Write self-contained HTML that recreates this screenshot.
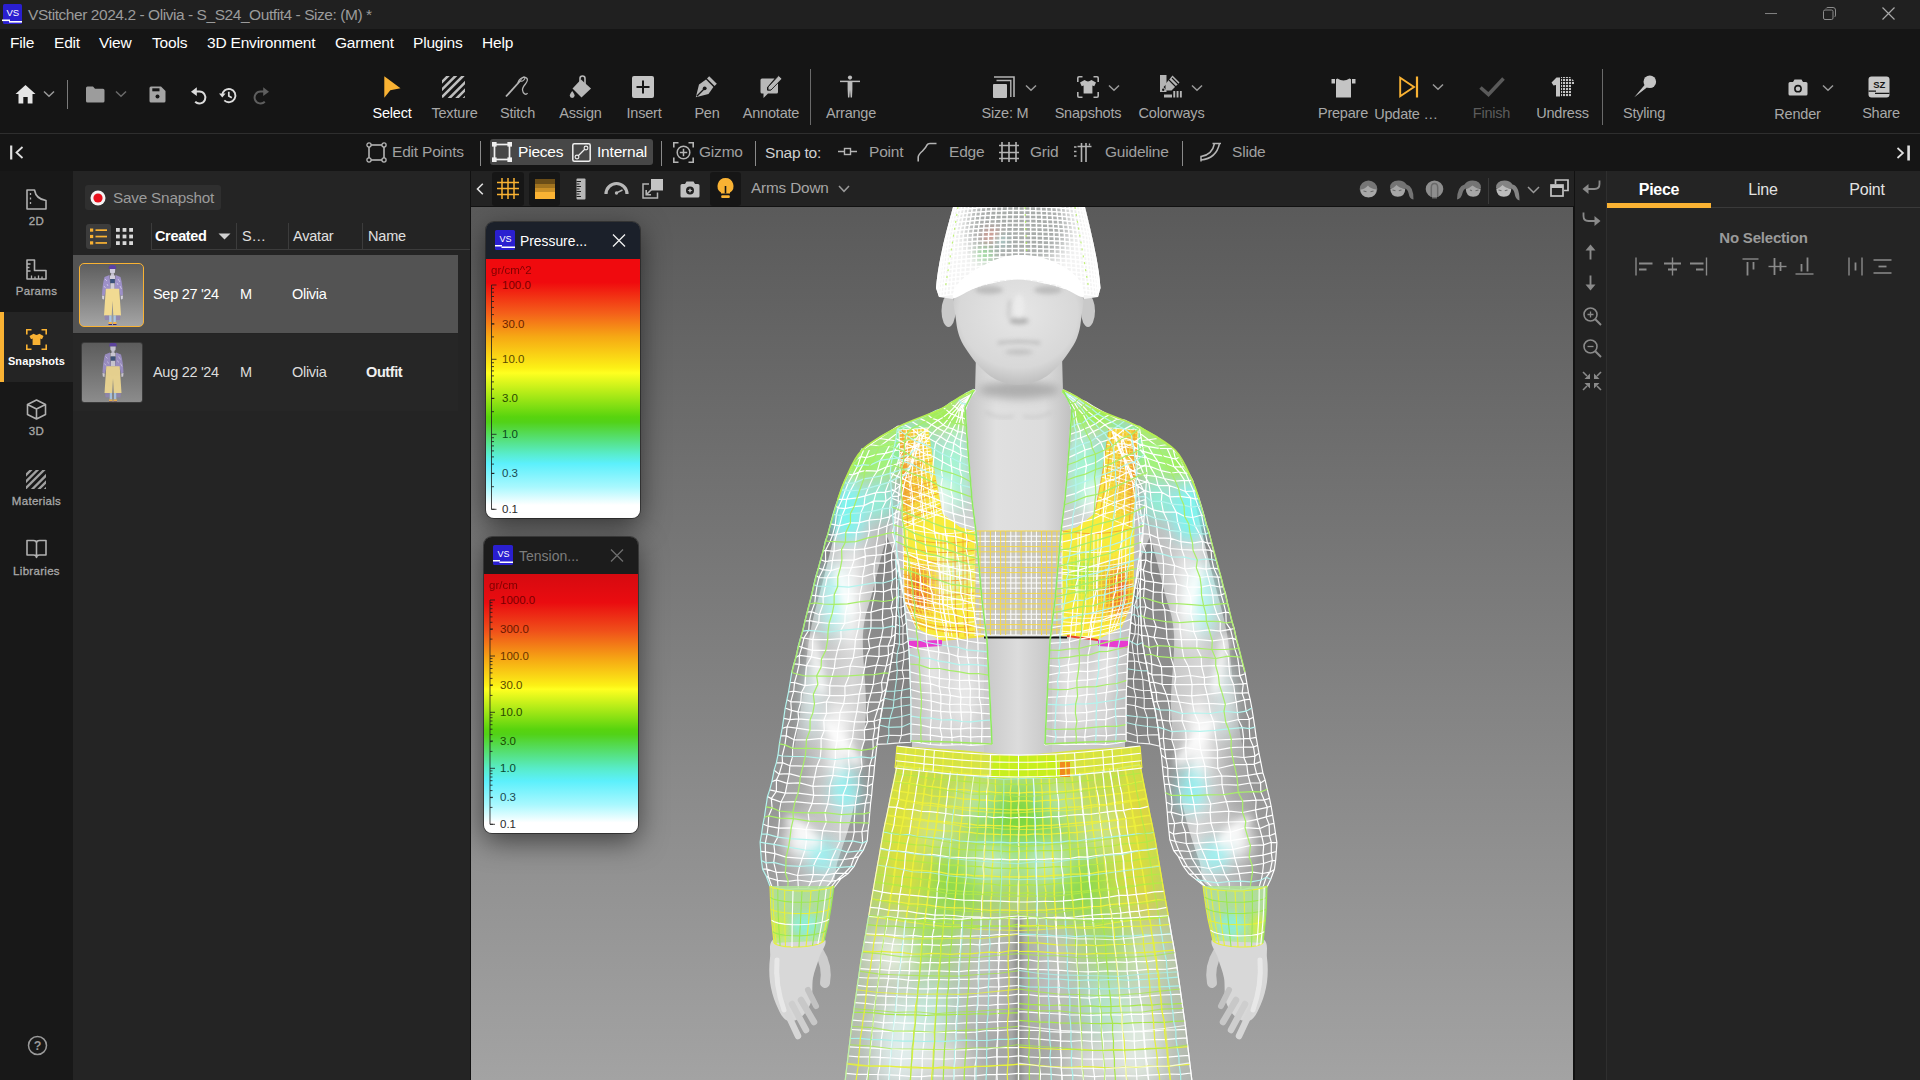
<!DOCTYPE html>
<html lang="en">
<head>
<meta charset="utf-8">
<title>VStitcher 2024.2 - Olivia - S_S24_Outfit4 - Size: (M) *</title>
<style>
*{box-sizing:border-box;margin:0;padding:0}
html,body{width:1920px;height:1080px;overflow:hidden;background:#151515;font-family:"Liberation Sans",sans-serif;color:#fff}
.abs{position:absolute}
#titlebar{position:absolute;left:0;top:0;width:1920px;height:29px;background:#202020}
#titlebar .ttl{position:absolute;left:28px;top:6px;font-size:15.5px;color:#9b9b9b;white-space:nowrap;letter-spacing:-0.44px}
#menubar{position:absolute;left:0;top:29px;width:1920px;height:29px;background:#151515}
#menubar span{position:absolute;top:5px;font-size:15.5px;color:#fff;white-space:nowrap;letter-spacing:-0.2px}
#toolbar{position:absolute;left:0;top:58px;width:1920px;height:75px;background:#151515}
.tb{position:absolute;top:47px;font-size:14.5px;color:#a8a8a8;white-space:nowrap;transform:translateX(-50%);letter-spacing:-0.2px}
.tb.on{color:#fff}
.tb.dim{color:#5c5c5c}
.vsep{position:absolute;width:1px;background:#6a6a6a}
#subbar{position:absolute;left:0;top:133px;width:1920px;height:38px;background:#151515;border-top:1px solid #2e2e2e}
.sb{position:absolute;top:9px;font-size:15.5px;color:#a0a0a0;white-space:nowrap;letter-spacing:-0.2px}
#leftbar{position:absolute;left:0;top:171px;width:73px;height:909px;background:#181818}
.lb{position:absolute;left:0;width:73px;text-align:center;font-size:11.5px;color:#a8a8a8;letter-spacing:0.3px;-webkit-text-stroke:.3px #a8a8a8}
#snap{position:absolute;left:73px;top:171px;width:397px;height:909px;background:#242424}
#view{position:absolute;left:470px;top:171px;width:1105px;height:909px;background:#111111}
#vtools{position:absolute;left:1px;top:0;width:1103px;height:35px;background:#222222}
#scene{position:absolute;left:1px;top:36px;width:1102px;height:873px;overflow:hidden}
#rstrip{position:absolute;left:1575px;top:171px;width:31px;height:909px;background:#222222}
#rpanel{position:absolute;left:1606px;top:171px;width:314px;height:909px;background:#242424;border-left:1px solid #2f2f2f}
.dlg{position:absolute;border-radius:8px;overflow:hidden;box-shadow:0 8px 28px rgba(0,0,0,.55),0 0 0 1px rgba(40,40,40,.6)}
.dt{position:absolute;left:0;top:0;width:100%}
.dg{position:absolute;left:0;width:100%}
svg{position:absolute;overflow:visible}
.rt{font-size:14.5px;color:#fff;white-space:nowrap;letter-spacing:-0.3px}
</style>
</head>
<body>
<div id="titlebar">
  <svg style="left:2px;top:4px" width="21" height="21" viewBox="0 0 21 21"><rect x="1" y="0" width="19" height="20" rx="1.5" fill="#2a1fd0"/><rect x="0" y="15.5" width="8" height="1.6" fill="#fff"/><rect x="7" y="17" width="13" height="1.6" fill="#fff"/><text x="10.8" y="12.3" font-size="9.5" font-family="Liberation Sans, sans-serif" fill="#fff" text-anchor="middle">VS</text></svg>
  <div class="ttl">VStitcher 2024.2 - Olivia - S_S24_Outfit4 - Size: (M) *</div>
  <svg style="left:1765px;top:13px" width="12" height="2" viewBox="0 0 13 2"><path d="M0 0.500 H13" stroke="#8c8c8c" stroke-width="1"/></svg>
  <svg style="left:1823px;top:7px" width="13" height="13" viewBox="0 0 13 13"><rect x="0.500" y="3" width="9.500" height="9.500" rx="1.500" fill="none" stroke="#8c8c8c" stroke-width="1"/><path d="M3 1.500 Q3.500 0.500 5 0.500 H10 Q12.500 0.500 12.500 3 V8 Q12.500 9.500 11.500 10" fill="none" stroke="#8c8c8c" stroke-width="1"/></svg>
  <svg style="left:1882px;top:7px" width="13" height="13" viewBox="0 0 13 13"><path d="M0.500 0.500 L12.500 12.500 M12.500 0.500 L0.500 12.500" stroke="#a8a8a8" stroke-width="1.200"/></svg>
</div>
<div id="menubar">
  <span style="left:10px">File</span><span style="left:54px">Edit</span><span style="left:99px">View</span><span style="left:152px">Tools</span><span style="left:207px">3D Environment</span><span style="left:335px">Garment</span><span style="left:413px">Plugins</span><span style="left:482px">Help</span>
</div>
<div id="toolbar"><!-- left small icons -->
<svg style="left:15px;top:26px" width="21" height="20" viewBox="0 0 21 20"><path d="M10.5 1 L0.5 10 H3.5 V19.5 H8.3 V13 H12.7 V19.5 H17.5 V10 H20.5 Z" fill="#e6e6e6"/></svg>
<svg style="left:43px;top:32px" width="12" height="8" viewBox="0 0 12 8"><path d="M1 1.5 L6 6.3 L11 1.5" fill="none" stroke="#9a9a9a" stroke-width="1.5"/></svg>
<div class="vsep" style="left:67px;top:22px;height:29px;background:#7a7a7a"></div>
<svg style="left:86px;top:28px" width="19" height="17" viewBox="0 0 19 17"><path d="M1.5 0.5 H7 L9 2.8 H17 Q18.5 2.8 18.5 4.3 V15 Q18.5 16.5 17 16.5 H1.5 Q0 16.5 0 15 V2 Q0 0.5 1.5 0.5 Z" fill="#9c9c9c"/></svg>
<svg style="left:115px;top:32px" width="12" height="8" viewBox="0 0 12 8"><path d="M1 1.5 L6 6.3 L11 1.5" fill="none" stroke="#6a6a6a" stroke-width="1.5"/></svg>
<svg style="left:149px;top:28px" width="17" height="17" viewBox="0 0 17 17"><path d="M2 0.5 H12 L16.5 5 V15 Q16.5 16.5 15 16.5 H2 Q0.5 16.5 0.5 15 V2 Q0.5 0.5 2 0.5 Z" fill="#a4a4a4"/><rect x="3.3" y="2.3" width="7.2" height="3" fill="#151515"/><circle cx="8.5" cy="10.5" r="2" fill="#151515"/></svg>
<svg style="left:190px;top:28px" width="18" height="19" viewBox="0 0 18 19"><path d="M4.5 5.5 H9.5 A6 6 0 1 1 5.2 15.8" fill="none" stroke="#dcdcdc" stroke-width="2"/><path d="M1 5.8 L6.8 1.2 V10 Z" fill="#dcdcdc"/></svg>
<svg style="left:219px;top:28px" width="19" height="19" viewBox="0 0 19 19"><path d="M3.2 9.5 A6.6 6.6 0 1 1 5.3 14.4" fill="none" stroke="#dcdcdc" stroke-width="1.9"/><path d="M0 7.4 H6.6 L3.3 11.6 Z" fill="#dcdcdc"/><path d="M9.8 5.8 V10 L12.8 11.8" fill="none" stroke="#dcdcdc" stroke-width="1.7"/></svg>
<svg style="left:252px;top:28px" width="18" height="19" viewBox="0 0 18 19"><path d="M13.5 5.5 H8.5 A6 6 0 1 0 12.8 15.8" fill="none" stroke="#5e5e5e" stroke-width="2"/><path d="M17 5.8 L11.2 1.2 V10 Z" fill="#5e5e5e"/></svg>

<!-- Select -->
<svg style="left:384px;top:18px" width="17" height="22" viewBox="0 0 17 22"><path d="M0.3 0.3 L16.5 12.2 L6.3 14.3 L0.3 21.7 Z" fill="#f9b233"/></svg>
<div class="tb on" style="left:392px">Select</div>
<!-- Texture -->
<svg style="left:442px;top:18px" width="23" height="22" viewBox="0 0 23 22"><defs><clipPath id="txc"><rect x="0" y="0" width="23" height="22" rx="1"/></clipPath></defs><g clip-path="url(#txc)" stroke="#bdbdbd" stroke-width="2.6"><path d="M-2 8 L8 -2 M-2 15.5 L15.5 -2 M-2 23 L23 -2 M5.5 24 L25 4.5 M13 24 L25 12 M20.5 24 L25 19.5"/></g></svg>
<div class="tb" style="left:454.5px">Texture</div>
<!-- Stitch -->
<svg style="left:505px;top:18px" width="24" height="22" viewBox="0 0 24 22"><path d="M1 20.5 L15.5 4.5" stroke="#b4b4b4" stroke-width="1.8" fill="none"/><path d="M13 7 C14 1.5 20 0 22 2.5 C24.5 6 17 9.5 17.5 14 C18 18 21 19.5 22.5 17" stroke="#b4b4b4" stroke-width="1.3" fill="none"/><ellipse cx="17.8" cy="3.2" rx="2.6" ry="1.3" transform="rotate(-45 17.8 3.2)" fill="none" stroke="#b4b4b4" stroke-width="1"/></svg>
<div class="tb" style="left:517.5px">Stitch</div>
<!-- Assign -->
<svg style="left:569px;top:17px" width="23" height="24" viewBox="0 0 23 24"><path d="M11 9 V3.5 A2.5 2.5 0 0 1 16 3.5 V9" fill="none" stroke="#b8b8b8" stroke-width="1.6"/><path d="M12 4.5 L22 13.5 L12.5 22.5 L3.5 13.5 Z" fill="#b8b8b8"/><path d="M3.2 16 C1.5 18.3 0.8 19.5 0.8 20.6 A2.4 2.4 0 0 0 5.6 20.6 C5.6 19.5 4.9 18.3 3.2 16 Z" fill="#b8b8b8"/></svg>
<div class="tb" style="left:580.5px">Assign</div>
<!-- Insert -->
<svg style="left:632px;top:18px" width="22" height="22" viewBox="0 0 22 22"><rect x="0" y="0" width="22" height="22" rx="2" fill="#c4c4c4"/><path d="M11 4.5 V17.5 M4.5 11 H17.5" stroke="#151515" stroke-width="2"/></svg>
<div class="tb" style="left:644px">Insert</div>
<!-- Pen -->
<svg style="left:695px;top:17px" width="23" height="24" viewBox="0 0 23 24"><path d="M14.2 1.2 L21.8 8.8 L19.6 11 L12 3.4 Z" fill="#b8b8b8"/><path d="M11 4.6 L18.4 12 L13.5 19 L0.8 22.2 L4 9.5 Z" fill="#b8b8b8"/><path d="M1.8 21.2 L8.8 14.2" stroke="#151515" stroke-width="1.3"/><circle cx="9.7" cy="13.3" r="1.9" fill="#151515"/></svg>
<div class="tb" style="left:707px">Pen</div>
<!-- Annotate -->
<svg style="left:760px;top:17px" width="23" height="24" viewBox="0 0 23 24"><path d="M2 3.5 H14.5 L7 12.5 V15.5 H10.5 L18 7 V17 Q18 18.5 16.5 18.5 H8 L3.5 23 V18.5 H2 Q0.5 18.5 0.5 17 V5 Q0.5 3.5 2 3.5 Z" fill="#b8b8b8"/><path d="M18.7 0.5 L22 3.8 L11 15 H8 V12 Z" fill="#b8b8b8" stroke="#151515" stroke-width="0.9"/></svg>
<div class="tb" style="left:771px">Annotate</div>
<div class="vsep" style="left:810px;top:11px;height:56px"></div>
<!-- Arrange -->
<svg style="left:839px;top:17px" width="22" height="24" viewBox="0 0 22 24"><circle cx="11" cy="2.6" r="2.1" fill="#bcbcbc"/><path d="M1 6.4 H21" stroke="#bcbcbc" stroke-width="1.5"/><path d="M8.6 6.4 H13.4 V14 L13 22.5 H11.6 L11 15 L10.4 22.5 H9 L8.6 14 Z" fill="#bcbcbc"/></svg>
<div class="tb" style="left:851px">Arrange</div>

<!-- Size -->
<svg style="left:993px;top:18px" width="22" height="22" viewBox="0 0 22 22"><path d="M1 1 H21 V21" fill="none" stroke="#b4b4b4" stroke-width="1.6"/><path d="M3.5 4.5 H17.8 V21" fill="none" stroke="#b4b4b4" stroke-width="1.4"/><rect x="0" y="8" width="14" height="14" rx="1" fill="#c0c0c0"/></svg>
<svg style="left:1025px;top:26px" width="12" height="8" viewBox="0 0 12 8"><path d="M1 1.5 L6 6.3 L11 1.5" fill="none" stroke="#9a9a9a" stroke-width="1.5"/></svg>
<div class="tb" style="left:1005px">Size: M</div>
<!-- Snapshots -->
<svg style="left:1077px;top:18px" width="22" height="22" viewBox="0 0 22 22"><path d="M0.8 6 V2 Q0.8 0.8 2 0.8 H5.5 M16.5 0.8 H20 Q21.2 0.8 21.2 2 V6 M21.2 16 V20 Q21.2 21.2 20 21.2 H16.5 M5.5 21.2 H2 Q0.8 21.2 0.8 20 V16" fill="none" stroke="#b4b4b4" stroke-width="1.6"/><path d="M7.6 4 Q11 6.8 14.4 4 L19 6.5 L17.3 10.2 L15.4 9.4 V17.5 H6.6 V9.4 L4.7 10.2 L3 6.5 Z" fill="#c0c0c0"/></svg>
<svg style="left:1108px;top:26px" width="12" height="8" viewBox="0 0 12 8"><path d="M1 1.5 L6 6.3 L11 1.5" fill="none" stroke="#9a9a9a" stroke-width="1.5"/></svg>
<div class="tb" style="left:1088px">Snapshots</div>
<!-- Colorways -->
<svg style="left:1159px;top:16px" width="24" height="24" viewBox="0 0 24 24"><path d="M1 1 H7.5 V10 L4.5 13 L7.5 16.5 V18 H1 Z" fill="#b4b4b4"/><path d="M13.5 1.5 L20.5 8.5 L12.5 16.5 H6.5 V10 Z" fill="#b4b4b4"/><path d="M10 6 L17 13 M13 4 L19 10" stroke="#151515" stroke-width="1.1"/><circle cx="4.2" cy="15.8" r="1.2" fill="#151515"/><path d="M5 20.5 H13 V23.5 H5 Z M14.3 17 H16.2 V23.5 H14.3 Z M17.6 17 H19.5 V23.5 H17.6 Z M20.9 17 H22.8 V23.5 H20.9 Z" fill="#b4b4b4"/></svg>
<svg style="left:1191px;top:26px" width="12" height="8" viewBox="0 0 12 8"><path d="M1 1.5 L6 6.3 L11 1.5" fill="none" stroke="#9a9a9a" stroke-width="1.5"/></svg>
<div class="tb" style="left:1171.5px">Colorways</div>

<!-- Prepare -->
<svg style="left:1331px;top:20px" width="25" height="20" viewBox="0 0 25 20"><path d="M6.5 0.5 Q12.5 4.5 18.5 0.5 L20 1.2 V19.5 H5 V1.2 Z" fill="#c4c4c4"/><path d="M0.5 1 H4 V5.5 H0.5 Z M21 1 H24.5 V5.5 H21 Z" fill="#c4c4c4"/></svg>
<div class="tb" style="left:1343px">Prepare</div>
<!-- Update -->
<svg style="left:1399px;top:18px" width="20" height="22" viewBox="0 0 20 22"><path d="M1.2 1.8 L15 11 L1.2 20.2 Z" fill="none" stroke="#f9b233" stroke-width="1.9" stroke-linejoin="miter"/><path d="M18 0.5 V21.5" stroke="#f9b233" stroke-width="2.2"/></svg>
<svg style="left:1432px;top:25px" width="12" height="8" viewBox="0 0 12 8"><path d="M1 1.5 L6 6.3 L11 1.5" fill="none" stroke="#9a9a9a" stroke-width="1.5"/></svg>
<div class="tb" style="left:1406px;top:48px">Update …</div>
<!-- Finish -->
<svg style="left:1479px;top:19px" width="26" height="20" viewBox="0 0 26 20"><path d="M1.5 10.5 L9.5 17.5 L24.5 1.5" fill="none" stroke="#5a5a5a" stroke-width="3.6"/></svg>
<div class="tb dim" style="left:1491.5px">Finish</div>
<!-- Undress -->
<svg style="left:1551px;top:18px" width="24" height="22" viewBox="0 0 24 22"><defs><pattern id="udp" width="3" height="3" patternUnits="userSpaceOnUse"><rect width="2.1" height="2.1" fill="#c4c4c4"/></pattern></defs><path d="M0.5 6.5 L5.5 1.5 H9 V20.5 H5 V9 L2.5 9.5 Z" fill="#c4c4c4"/><path d="M10 1 H19 L23 5 V8 H20 V21 H10 Z" fill="url(#udp)"/></svg>
<div class="tb" style="left:1562.5px">Undress</div>
<div class="vsep" style="left:1602px;top:11px;height:56px"></div>
<!-- Styling -->
<svg style="left:1634px;top:17px" width="23" height="23" viewBox="0 0 23 23"><circle cx="15.8" cy="6.8" r="6.3" fill="#c4c4c4"/><path d="M0.3 22.3 L11 9.5 L13.5 12 Z" fill="#c4c4c4"/></svg>
<div class="tb" style="left:1644px">Styling</div>
<!-- Render -->
<svg style="left:1788px;top:21px" width="20" height="17" viewBox="0 0 20 17"><path d="M6.5 0.5 H13.5 L15 3 H18 Q19.5 3 19.5 4.5 V15 Q19.5 16.5 18 16.5 H2 Q0.5 16.5 0.5 15 V4.5 Q0.5 3 2 3 H5 Z" fill="#c4c4c4"/><circle cx="10" cy="9.7" r="3.9" fill="#151515"/><circle cx="10" cy="9.7" r="2.3" fill="#c4c4c4"/></svg>
<svg style="left:1822px;top:26px" width="12" height="8" viewBox="0 0 12 8"><path d="M1 1.5 L6 6.3 L11 1.5" fill="none" stroke="#9a9a9a" stroke-width="1.5"/></svg>
<div class="tb" style="left:1797.5px;top:48px">Render</div>
<!-- Share -->
<svg style="left:1868px;top:18px" width="22" height="22" viewBox="0 0 22 22"><rect x="0.5" y="0.5" width="21" height="21" rx="3" fill="#c8c8c8"/><path d="M0.5 15.2 H8 M7 17.3 H21.5" stroke="#151515" stroke-width="1.2"/><text x="11.3" y="12.2" font-size="9.5" font-weight="bold" font-family="Liberation Sans, sans-serif" fill="#151515" text-anchor="middle">SZ</text></svg>
<div class="tb" style="left:1881px">Share</div>
</div>
<div id="subbar"><svg style="left:10px;top:11px" width="15" height="15" viewBox="0 0 15 15"><path d="M1.2 0.5 V14.5" stroke="#e0e0e0" stroke-width="2.2"/><path d="M12.5 2 L6.5 7.5 L12.5 13" fill="none" stroke="#e0e0e0" stroke-width="1.8"/></svg>
<!-- Edit points -->
<svg style="left:366px;top:8px" width="21" height="21" viewBox="0 0 21 21"><rect x="3" y="3" width="15" height="15" fill="none" stroke="#b4b4b4" stroke-width="1.6"/><g fill="#151515" stroke="#b4b4b4" stroke-width="1.3"><circle cx="3" cy="3" r="2.1"/><circle cx="18" cy="3" r="2.1"/><circle cx="3" cy="18" r="2.1"/><circle cx="18" cy="18" r="2.1"/></g></svg>
<div class="sb" style="left:392px">Edit Points</div>
<div class="vsep" style="left:480px;top:7px;height:25px;background:#8a8a8a"></div>
<div class="abs" style="left:490px;top:5px;width:163px;height:26px;background:#474747;border-radius:3px"></div>
<svg style="left:492px;top:8px" width="20" height="20" viewBox="0 0 20 20"><rect x="2.5" y="2.5" width="15" height="15" fill="none" stroke="#f0f0f0" stroke-width="1.7"/><g fill="#f0f0f0"><rect x="0" y="0" width="4.6" height="4.6"/><rect x="15.4" y="0" width="4.6" height="4.6"/><rect x="0" y="15.4" width="4.6" height="4.6"/><rect x="15.4" y="15.4" width="4.6" height="4.6"/></g></svg>
<div class="sb" style="left:518px;color:#fff">Pieces</div>
<svg style="left:572px;top:9px" width="19" height="19" viewBox="0 0 19 19"><rect x="0.8" y="0.8" width="17.4" height="17.4" rx="1.5" fill="none" stroke="#f0f0f0" stroke-width="1.5"/><path d="M5 14 L14 5" stroke="#f0f0f0" stroke-width="1.3"/><circle cx="5" cy="14" r="1.9" fill="#474747" stroke="#f0f0f0" stroke-width="1.1"/><circle cx="14" cy="5" r="1.9" fill="#474747" stroke="#f0f0f0" stroke-width="1.1"/></svg>
<div class="sb" style="left:597px;color:#fff">Internal</div>
<div class="vsep" style="left:661px;top:7px;height:25px;background:#8a8a8a"></div>
<!-- Gizmo -->
<svg style="left:673px;top:8px" width="21" height="21" viewBox="0 0 21 21"><path d="M0.8 5.5 V0.8 H5.5 M15.5 0.8 H20.2 V5.5 M20.2 15.5 V20.2 H15.5 M5.5 20.2 H0.8 V15.5" fill="none" stroke="#b4b4b4" stroke-width="1.6"/><circle cx="10.5" cy="10.5" r="6.3" fill="none" stroke="#b4b4b4" stroke-width="1.5"/><path d="M10.5 6.8 V14.2 M6.8 10.5 H14.2" stroke="#b4b4b4" stroke-width="1.5"/></svg>
<div class="sb" style="left:699px">Gizmo</div>
<div class="vsep" style="left:755px;top:7px;height:25px;background:#8a8a8a"></div>
<div class="sb" style="left:765px;top:10px;color:#d0d0d0">Snap to:</div>
<svg style="left:838px;top:13px" width="19" height="9" viewBox="0 0 19 9"><path d="M0 4.5 H6 M13 4.5 H19" stroke="#b4b4b4" stroke-width="1.5"/><rect x="6.5" y="1.5" width="6" height="6" fill="none" stroke="#b4b4b4" stroke-width="1.4"/></svg>
<div class="sb" style="left:869px">Point</div>
<svg style="left:917px;top:8px" width="20" height="20" viewBox="0 0 20 20"><path d="M1.200 19.500 V15 Q1.500 12.500 5.500 9 Q9 5.500 10 3 Q10.800 1.500 13 1.500 H19.500" fill="none" stroke="#b4b4b4" stroke-width="1.600"/></svg>
<div class="sb" style="left:949px">Edge</div>
<svg style="left:999px;top:8px" width="20" height="20" viewBox="0 0 20 20"><path d="M3 0 V20 M10 0 V20 M17 0 V20 M0 3.500 H20 M0 10.500 H20 M0 16.500 H20" stroke="#b4b4b4" stroke-width="1.600"/></svg>
<div class="sb" style="left:1030px">Grid</div>
<svg style="left:1074px;top:9px" width="18" height="19" viewBox="0 0 18 19"><path d="M7.500 0 V19 M12 0 V19 M3.500 3.500 H17.500" stroke="#b4b4b4" stroke-width="1.600" fill="none"/><path d="M0 4 H2.500 M0 8.500 H2.500 M0 13 H2.500 M15.500 0.500 V2.500" stroke="#b4b4b4" stroke-width="1.300"/></svg>
<div class="sb" style="left:1105px">Guideline</div>
<div class="vsep" style="left:1182px;top:7px;height:25px;background:#8a8a8a"></div>
<svg style="left:1200px;top:8px" width="21" height="20" viewBox="0 0 21 20"><path d="M1 19.5 V14.5 C8 13.5 13 9 14.5 1.5 M1 18 C11 17 17.5 11 19.5 1.5 M12.5 1.5 H21" fill="none" stroke="#b4b4b4" stroke-width="1.5"/></svg>
<div class="sb" style="left:1232px">Slide</div>
<svg style="left:1896px;top:11px" width="15" height="16" viewBox="0 0 15 16"><path d="M12.6 0.5 V15.5" stroke="#e0e0e0" stroke-width="2.6"/><path d="M1.5 3 L7 8 L1.5 13" fill="none" stroke="#e0e0e0" stroke-width="1.7"/></svg>
</div>
<div id="leftbar"><!-- 2D -->
<svg style="left:26px;top:18px" width="21" height="21" viewBox="0 0 21 21"><path d="M1 1 H8.5 C9.5 7 13 10.5 20 11.5 V20 H1 Z" fill="none" stroke="#b0b0b0" stroke-width="1.6" stroke-linejoin="round"/><path d="M4.5 4 V6 M4.5 8.5 V10.5 M4.5 13 V15" stroke="#b0b0b0" stroke-width="1.3"/></svg>
<div class="lb" style="top:44px">2D</div>
<!-- Params -->
<svg style="left:26px;top:88px" width="21" height="21" viewBox="0 0 21 21"><path d="M1 1 H8.5 V11.5 H20 V20 H1 Z" fill="none" stroke="#b0b0b0" stroke-width="1.6" stroke-linejoin="round"/><path d="M1 5 H4.5 M1 8.5 H3.5 M1 12 H4.5 M5.5 20 V16.5 M9 20 V17.5 M12.5 20 V16.5 M16 20 V17.5" stroke="#b0b0b0" stroke-width="1.3"/></svg>
<div class="lb" style="top:114px">Params</div>
<!-- Snapshots active -->
<div class="abs" style="left:0;top:141px;width:73px;height:70px;background:#242424"></div>
<div class="abs" style="left:0;top:141px;width:4px;height:70px;background:#f9b233"></div>
<svg style="left:26px;top:158px" width="21" height="21" viewBox="0 0 21 21"><path d="M0.8 5.5 V0.8 H5.5 M15.5 0.8 H20.2 V5.5 M20.2 15.5 V20.2 H15.5 M5.5 20.2 H0.8 V15.5" fill="none" stroke="#f9b233" stroke-width="1.6"/><path d="M7.6 4.8 Q10.5 7 13.4 4.8 L17.5 7 L16 10.2 L14.4 9.5 V16 H6.6 V9.5 L5 10.2 L3.5 7 Z" fill="#f9b233"/></svg>
<div class="lb" style="top:184px;color:#fff;font-weight:bold;letter-spacing:0.1px;font-size:11px;-webkit-text-stroke:0">Snapshots</div>
<!-- 3D -->
<svg style="left:26px;top:228px" width="21" height="21" viewBox="0 0 21 21"><path d="M10.5 1 L19.5 5.5 V15.5 L10.5 20 L1.5 15.5 V5.5 Z M1.5 5.5 L10.5 10 L19.5 5.5 M10.5 10 V20" fill="none" stroke="#b0b0b0" stroke-width="1.6" stroke-linejoin="round"/></svg>
<div class="lb" style="top:254px">3D</div>
<!-- Materials -->
<svg style="left:26px;top:299px" width="20" height="19" viewBox="0 0 20 19"><defs><clipPath id="mtc"><rect x="0" y="0" width="20" height="19"/></clipPath></defs><g clip-path="url(#mtc)" stroke="#a0a0a0" stroke-width="2.3"><path d="M-2 7 L7 -2 M-2 13.5 L13.5 -2 M-2 20 L20 -2 M4.5 21 L22 3.5 M11 21 L22 10 M17.5 21 L22 16.5"/></g></svg>
<div class="lb" style="top:324px">Materials</div>
<!-- Libraries -->
<svg style="left:26px;top:368px" width="21" height="20" viewBox="0 0 21 20"><path d="M1 1.5 H7.5 Q10.5 1.5 10.5 4 Q10.5 1.5 13.5 1.5 H20 V16 H13.5 Q10.5 16 10.5 18.5 Q10.5 16 7.5 16 H1 Z M10.5 4 V18.5" fill="none" stroke="#b0b0b0" stroke-width="1.6" stroke-linejoin="round"/></svg>
<div class="lb" style="top:394px">Libraries</div>
<!-- help -->
<svg style="left:27px;top:864px" width="21" height="21" viewBox="0 0 21 21"><circle cx="10.5" cy="10.5" r="9" fill="none" stroke="#9a9a9a" stroke-width="1.5"/><text x="10.5" y="15" font-size="12.5" font-family="Liberation Sans, sans-serif" fill="#9a9a9a" text-anchor="middle" font-weight="bold">?</text></svg>
</div>
<div id="snap"><div class="abs" style="left:12px;top:14px;width:136px;height:25px;background:#2f2f2f;border-radius:3px"></div>
<svg style="left:17px;top:19px" width="16" height="16" viewBox="0 0 16 16"><circle cx="8" cy="8" r="7.5" fill="#f4f4f4"/><circle cx="8" cy="8" r="4.6" fill="#e8101c"/></svg>
<div class="abs" style="left:40px;top:18px;font-size:15.3px;color:#9c9c9c;white-space:nowrap;letter-spacing:-0.2px">Save Snapshot</div>
<div class="abs" style="left:13px;top:53px;width:25px;height:25px;background:#3c3c3c;border-radius:3px"></div>
<svg style="left:17px;top:57px" width="17" height="17" viewBox="0 0 17 17"><g fill="#f9b233"><rect x="0" y="0.5" width="3.2" height="3.2"/><rect x="0" y="6.9" width="3.2" height="3.2"/><rect x="0" y="13.3" width="3.2" height="3.2"/><rect x="5.5" y="1.3" width="11.5" height="1.7"/><rect x="5.5" y="7.7" width="11.5" height="1.7"/><rect x="5.5" y="14.1" width="11.5" height="1.7"/></g></svg>
<svg style="left:43px;top:57px" width="17" height="17" viewBox="0 0 17 17"><g fill="#d8d8d8"><rect x="0" y="0" width="3.8" height="3.8"/><rect x="6.6" y="0" width="3.8" height="3.8"/><rect x="13.2" y="0" width="3.8" height="3.8"/><rect x="0" y="6.6" width="3.8" height="3.8"/><rect x="6.6" y="6.6" width="3.8" height="3.8"/><rect x="13.2" y="6.6" width="3.8" height="3.8"/><rect x="0" y="13.2" width="3.8" height="3.8"/><rect x="6.6" y="13.2" width="3.8" height="3.8"/><rect x="13.2" y="13.2" width="3.8" height="3.8"/></g></svg>
<!-- header -->
<div class="abs" style="left:78px;top:52px;width:1px;height:27px;background:#3c3c3c"></div>
<div class="abs" style="left:163px;top:52px;width:1px;height:27px;background:#3c3c3c"></div>
<div class="abs" style="left:215px;top:52px;width:1px;height:27px;background:#3c3c3c"></div>
<div class="abs" style="left:289px;top:52px;width:1px;height:27px;background:#3c3c3c"></div>
<div class="abs" style="left:78px;top:78px;width:319px;height:1px;background:#3c3c3c"></div>
<div class="abs" style="left:82px;top:57px;font-size:14.5px;font-weight:bold;color:#fff;letter-spacing:-0.35px">Created</div>
<svg style="left:145px;top:62px" width="13" height="7" viewBox="0 0 13 7"><path d="M0.5 0.5 H12.5 L6.5 6.5 Z" fill="#d0d0d0"/></svg>
<div class="abs" style="left:169px;top:57px;font-size:14.5px;color:#e0e0e0;letter-spacing:-0.2px">S…</div>
<div class="abs" style="left:220px;top:57px;font-size:14.5px;color:#e0e0e0;letter-spacing:-0.2px">Avatar</div>
<div class="abs" style="left:295px;top:57px;font-size:14.5px;color:#e0e0e0;letter-spacing:-0.2px">Name</div>
<!-- row 1 -->
<div class="abs" style="left:0;top:84px;width:385px;height:78px;background:#535353"></div>
<div class="abs" id="th1" style="left:6px;top:92px;width:65px;height:64px;border:1.5px solid #f9b233;border-radius:5px;background:linear-gradient(#5e5e5e,#a4a4a4);overflow:hidden"><svg style="left:0;top:0" width="65" height="64" viewBox="0 0 65 64" opacity="1"><path d="M29 2.200 Q32.500 0 36 2.200 L36.300 5 H28.700Z" fill="#5b40a4"/><path d="M29.800 5 H35.200 L35 8.500 Q32.500 11 30 8.500Z" fill="#cfcbdc"/><path d="M31 9.500 H34 V12 H31Z" fill="#c4c0d0"/><path d="M29.500 11 L24.500 13 Q22.500 20 22 31 L24.500 32 L26 25 L26.500 26.500 H30.500 Z M35.500 11 L40.500 13 Q42.500 20 43 31 L40.500 32 L39 25 L38.500 26.500 H34.500 Z" fill="#9d90c8"/><path d="M25 15 L27 17 M38 15 L40 18 M24 22 L25.500 24 M40 22 L41.500 25 M27 20 L28 22 M37 19 L38 21" stroke="#c9c0e4" stroke-width="1"/><path d="M30 11.500 H35 V15 H30Z" fill="#d4d0dc"/><path d="M30.300 15 H34.700 V19.300 H30.300Z" fill="#39507c"/><path d="M30.500 19.300 H34.500 V25 H30.500Z" fill="#d0ccd8"/><path d="M22 31.500 L24.300 32 L24 35.500 L22.300 35Z M43 31.500 L40.700 32 L41 35.500 L42.700 35Z" fill="#d4d0dc"/><path d="M25.800 24.800 H39.200 L41 51.500 H33.300 L32.500 37 L31.700 51.500 H24Z" fill="#f1da92"/><path d="M24.500 51.500 H29 V56 H25Z M36 51.500 H40.500 L40 56 H36Z" fill="#8f84b4" opacity=".85"/><path d="M29.200 51.500 H31.500 V58 H29.200Z M33.500 51.500 H35.800 V58 H33.500Z" fill="#a9c4e4"/><path d="M28.500 58 H32 V60 H28.500Z M33 58 H36.500 V60 H33Z" fill="#f0b24a"/><path d="M28.500 60 H32 V61 H28.500Z M33 60 H36.500 V61 H33Z" fill="#3a2a70"/></svg></div>
<div class="abs rt" style="left:80px;top:115px">Sep 27 '24</div>
<div class="abs rt" style="left:167px;top:115px">M</div>
<div class="abs rt" style="left:219px;top:115px">Olivia</div>
<!-- row 2 -->
<div class="abs" style="left:0;top:163px;width:385px;height:77px;background:#262626"></div>
<div class="abs" id="th2" style="left:8px;top:171px;width:62px;height:61px;border:1px solid #3a3a3a;border-radius:3px;background:linear-gradient(#5c5c5c,#8c8c8c);overflow:hidden"><svg style="left:0;top:0" width="62" height="61" viewBox="1.5 1.5 62 61" opacity="0.9"><path d="M29 2.200 Q32.500 0 36 2.200 L36.300 5 H28.700Z" fill="#5b40a4"/><path d="M29.800 5 H35.200 L35 8.500 Q32.500 11 30 8.500Z" fill="#cfcbdc"/><path d="M31 9.500 H34 V12 H31Z" fill="#c4c0d0"/><path d="M29.500 11 L24.500 13 Q22.500 20 22 31 L24.500 32 L26 25 L26.500 26.500 H30.500 Z M35.500 11 L40.500 13 Q42.500 20 43 31 L40.500 32 L39 25 L38.500 26.500 H34.500 Z" fill="#9d90c8"/><path d="M25 15 L27 17 M38 15 L40 18 M24 22 L25.500 24 M40 22 L41.500 25 M27 20 L28 22 M37 19 L38 21" stroke="#c9c0e4" stroke-width="1"/><path d="M30 11.500 H35 V15 H30Z" fill="#d4d0dc"/><path d="M30.300 15 H34.700 V19.300 H30.300Z" fill="#39507c"/><path d="M30.500 19.300 H34.500 V25 H30.500Z" fill="#d0ccd8"/><path d="M22 31.500 L24.300 32 L24 35.500 L22.300 35Z M43 31.500 L40.700 32 L41 35.500 L42.700 35Z" fill="#d4d0dc"/><path d="M25.800 24.800 H39.200 L41 51.500 H33.300 L32.500 37 L31.700 51.500 H24Z" fill="#f1da92"/><path d="M24.500 51.500 H29 V56 H25Z M36 51.500 H40.500 L40 56 H36Z" fill="#8f84b4" opacity=".85"/><path d="M29.200 51.500 H31.500 V58 H29.200Z M33.500 51.500 H35.800 V58 H33.500Z" fill="#a9c4e4"/><path d="M28.500 58 H32 V60 H28.500Z M33 58 H36.500 V60 H33Z" fill="#f0b24a"/><path d="M28.500 60 H32 V61 H28.500Z M33 60 H36.500 V61 H33Z" fill="#3a2a70"/></svg></div>
<div class="abs rt" style="left:80px;top:193px;color:#dcdcdc">Aug 22 '24</div>
<div class="abs rt" style="left:167px;top:193px;color:#dcdcdc">M</div>
<div class="abs rt" style="left:219px;top:193px;color:#dcdcdc">Olivia</div>
<div class="abs rt" style="left:293px;top:193px;font-weight:bold;color:#f0f0f0;letter-spacing:-0.4px">Outfit</div>
</div>
<div id="view">
  <div id="vtools"><svg style="left:5px;top:12px" width="8" height="12" viewBox="0 0 8 12"><path d="M6.8 0.8 L1.5 6 L6.8 11.2" fill="none" stroke="#e0e0e0" stroke-width="1.6"/></svg>
<div class="abs" style="left:21px;top:1px;width:32px;height:34px;background:#161616;border-radius:3px"></div>
<svg style="left:26px;top:7px" width="22" height="21" viewBox="0 0 22 21"><path d="M5 0 V21 M11 0 V21 M17 0 V21 M0 4.5 H22 M0 10.5 H22 M0 16.5 H22" stroke="#f9b233" stroke-width="1.5"/></svg>
<div class="abs" style="left:58px;top:1px;width:31px;height:34px;background:#161616;border-radius:3px"></div>
<svg style="left:64px;top:8px" width="20" height="20" viewBox="0 0 20 20"><rect x="0" y="0" width="20" height="5" fill="#6b4d17"/><rect x="0" y="5" width="20" height="4" fill="#a1731f"/><rect x="0" y="9" width="20" height="4" fill="#c98f27"/><rect x="0" y="13" width="20" height="7" fill="#f9b233"/></svg>
<svg style="left:105px;top:7px" width="10" height="22" viewBox="0 0 10 22"><rect x="0.5" y="0.5" width="9" height="21" rx="1" fill="#b8b8b8"/><path d="M0.5 3.5 H5 M0.5 6 H3.5 M0.5 8.5 H5 M0.5 11 H3.5 M0.5 13.5 H5 M0.5 16 H3.5 M0.5 18.5 H5" stroke="#1f1f1f" stroke-width="1"/></svg>
<svg style="left:133px;top:10px" width="25" height="14" viewBox="0 0 25 14"><path d="M2 13 A10.5 10.5 0 0 1 23 13" fill="none" stroke="#b8b8b8" stroke-width="3.2"/><path d="M12 12.2 L18.5 9" stroke="#b8b8b8" stroke-width="1.5"/><circle cx="12.5" cy="12" r="1.7" fill="#b8b8b8"/></svg>
<svg style="left:171px;top:8px" width="21" height="20" viewBox="0 0 21 20"><rect x="9" y="0" width="12" height="11.5" fill="#c4c4c4"/><path d="M7 5 H1 V19 H15.5 V13.5" fill="none" stroke="#b4b4b4" stroke-width="1.5"/><path d="M9.5 10.5 L4.5 15.5 M4.2 11 V15.8 H9" fill="none" stroke="#b4b4b4" stroke-width="1.6"/></svg>
<svg style="left:209px;top:10px" width="20" height="17" viewBox="0 0 20 17"><path d="M6.5 0.5 H13.5 L15 3 H18 Q19.5 3 19.5 4.5 V15 Q19.5 16.5 18 16.5 H2 Q0.5 16.5 0.5 15 V4.5 Q0.5 3 2 3 H5 Z" fill="#c0c0c0"/><circle cx="10" cy="9.5" r="4" fill="#1f1f1f"/><path d="M10 7 L10.8 8.7 L12.5 9.5 L10.8 10.3 L10 12 L9.2 10.3 L7.5 9.5 L9.2 8.7 Z" fill="#c0c0c0"/></svg>
<div class="abs" style="left:239px;top:1px;width:31px;height:34px;background:#161616;border-radius:3px"></div>
<svg style="left:246px;top:7px" width="17" height="21" viewBox="0 0 17 21"><path d="M8.5 0 A8 8 0 0 1 13 14.6 V15.5 H4 V14.6 A8 8 0 0 1 8.5 0 Z" fill="#f9b233"/><rect x="4.2" y="17.3" width="8.6" height="2.6" rx="1" fill="#f9b233"/><path d="M8.5 8 V15.5" stroke="#161616" stroke-width="1.6"/></svg>
<div class="abs" style="left:280px;top:8px;font-size:15.3px;color:#a6a6a6;white-space:nowrap;letter-spacing:-0.15px">Arms Down</div>
<svg style="left:367px;top:14px" width="12" height="8" viewBox="0 0 12 8"><path d="M1 1 L6 6.3 L11 1" fill="none" stroke="#9a9a9a" stroke-width="1.5"/></svg>
<!-- right icons -->
<svg style="left:888px;top:9px" width="19" height="18" viewBox="0 0 19 18"><ellipse cx="9.500" cy="9" rx="8.800" ry="8.600" fill="#767676"/><path d="M1.500 9.500 Q5.500 9.500 9 5.500 Q11 8.500 17.500 9.500 Q17 17.300 9.500 17.300 Q2 17.300 1.500 9.500Z" fill="#a8a8a8"/><path d="M4.500 11 L7.500 11.800 M14.500 11 L11.500 11.800" stroke="#6a6a6a" stroke-width="1.100"/></svg>
<svg style="left:918px;top:9px" width="26" height="20" viewBox="0 0 26 20"><path d="M1 8 Q1 0.500 9.500 0.500 Q15 0.500 17.500 4.500 Q24.500 6 24.500 19.500 Q20.500 19 19.500 13 Q18.500 9 16 8.500Z" fill="#747474"/><path d="M1.200 8.500 Q4 8.800 7.500 5 Q10 8 16.300 8.800 Q16 16.800 8.800 16.800 Q1.800 16.800 1.200 8.500Z" fill="#a6a6a6"/><path d="M3.500 10 L6.500 10.800 M12.500 10 L9.800 10.800" stroke="#6a6a6a" stroke-width="1.100"/></svg>
<svg style="left:954px;top:9px" width="19" height="19" viewBox="0 0 19 19"><ellipse cx="9.500" cy="9" rx="8.800" ry="8.600" fill="#8e8e8e"/><path d="M6.300 17 V7.500 Q6.300 3.500 9.500 3.500 Q12.700 3.500 12.700 7.500 V17" fill="none" stroke="#6a6a6a" stroke-width="1.500"/><path d="M7 17 H12 V18.500 H7Z" fill="#6a6a6a"/></svg>
<svg style="left:985px;top:9px" width="26" height="20" viewBox="0 0 26 20"><path d="M25 8 Q25 0.500 16.500 0.500 Q11 0.500 8.500 4.500 Q1.500 6 1 19.500 Q5.500 18.500 6.500 13 Q7.500 9 10 8.500Z" fill="#747474"/><path d="M24.800 8.500 Q20 8.800 16.500 5.500 Q14 8 9.800 8.800 Q10 16.800 17.200 16.800 Q24.200 16.800 24.800 8.500Z" fill="#a6a6a6"/><path d="M22.500 10 L19.500 10.800 M14 10 L16 10.800" stroke="#6a6a6a" stroke-width="1.100"/></svg>
<div class="abs" style="left:1017px;top:7px;width:1px;height:26px;background:#3a3a3a"></div>
<svg style="left:1024px;top:9px" width="26" height="21" viewBox="0 0 26 21"><path d="M1 8 Q1 0.500 9.500 0.500 Q15 0.500 17.500 4.500 Q24.500 6 24.500 20.500 Q20.500 20 19.500 13 Q18.500 9 16 8.500Z" fill="#848484"/><path d="M1.200 8.500 Q4 8.800 7.500 5 Q10 8 16.300 8.800 Q16 16.800 8.800 16.800 Q1.800 16.800 1.200 8.500Z" fill="#bcbcbc"/><path d="M3.500 10 L6.500 10.800 M12.500 10 L9.800 10.800" stroke="#707070" stroke-width="1.100"/></svg>
<svg style="left:1056px;top:15px" width="13" height="8" viewBox="0 0 13 8"><path d="M1 1 L6.500 6.500 L12 1" fill="none" stroke="#9a9a9a" stroke-width="1.500"/></svg>
<svg style="left:1079px;top:8px" width="19" height="18" viewBox="0 0 19 18"><path d="M5.500 5 V1 H18 V11.500 H14" fill="none" stroke="#c4c4c4" stroke-width="1.700"/><rect x="1" y="6" width="12" height="11" fill="none" stroke="#c4c4c4" stroke-width="1.700"/><rect x="1" y="6" width="12" height="3" fill="#c4c4c4"/></svg>
</div>
  <div id="scene"><svg style="left:0;top:0" width="1102" height="873" viewBox="471 207 1102 873"><defs><linearGradient id="bg" x1="0" y1="0" x2="0" y2="1"><stop offset="0" stop-color="#5a5a5a"/><stop offset="1" stop-color="#a3a3a3"/></linearGradient>
<filter id="b4" x="-50%" y="-50%" width="200%" height="200%"><feGaussianBlur stdDeviation="4"/></filter>
<filter id="b8" x="-50%" y="-50%" width="200%" height="200%"><feGaussianBlur stdDeviation="8"/></filter>
<filter id="b14" x="-50%" y="-50%" width="200%" height="200%"><feGaussianBlur stdDeviation="14"/></filter>
<filter id="b2" x="-50%" y="-50%" width="200%" height="200%"><feGaussianBlur stdDeviation="2"/></filter>
<radialGradient id="skin" cx="0.5" cy="0.4" r="0.65"><stop offset="0" stop-color="#e6e6e6"/><stop offset="0.7" stop-color="#d8d8d8"/><stop offset="1" stop-color="#b4b4b4"/></radialGradient>
<linearGradient id="neck" x1="0" y1="0" x2="1" y2="0"><stop offset="0" stop-color="#c0c0c0"/><stop offset="0.3" stop-color="#e0e0e0"/><stop offset="0.7" stop-color="#dcdcdc"/><stop offset="1" stop-color="#b8b8b8"/></linearGradient>
<linearGradient id="gtorso" x1="0" y1="0" x2="1" y2="0"><stop offset="0" stop-color="#a8a8a8"/><stop offset="0.2" stop-color="#c8c8c8"/><stop offset="0.5" stop-color="#d0d0d0"/><stop offset="0.8" stop-color="#c4c4c4"/><stop offset="1" stop-color="#a4a4a4"/></linearGradient>
<clipPath id="cpants"><path d="M897 746 L960 750 L1018 756 L1077 750 L1140 746 L1140 765 L1147 800 L1154 834 L1165 897 L1176 960 L1185 1023 L1192 1082 L845 1082 L852 1023 L861 960 L872 897 L883 834 L890 800 L897 765Z"/></clipPath>
<linearGradient id="gpants" x1="0" y1="0" x2="0" y2="1"><stop offset="0" stop-color="#c6dc4c"/><stop offset="0.4" stop-color="#b2d868"/><stop offset="0.58" stop-color="#b6c6a6"/><stop offset="1" stop-color="#b2b6b2"/></linearGradient>
<linearGradient id="gcupL" x1="0" y1="0" x2="1" y2="0"><stop offset="0" stop-color="#f0d23c"/><stop offset="0.5" stop-color="#f4e24a"/><stop offset="1" stop-color="#eadf8a"/></linearGradient>
<linearGradient id="gslL" x1="0" y1="0" x2="1" y2="0"><stop offset="0" stop-color="#c8ccc8"/><stop offset="0.25" stop-color="#a8a8a8"/><stop offset="0.5" stop-color="#dedede"/><stop offset="0.75" stop-color="#a6a6a6"/><stop offset="1" stop-color="#bcbcbc"/></linearGradient>
<linearGradient id="garm" x1="0" y1="0" x2="1" y2="0"><stop offset="0" stop-color="#9c9c9c"/><stop offset="0.25" stop-color="#bebebe"/><stop offset="0.55" stop-color="#d6d6d6"/><stop offset="0.85" stop-color="#b0b0b0"/><stop offset="1" stop-color="#989898"/></linearGradient>
<clipPath id="cslL"><path d="M862 450 L845 480 L838 499 L826 540 L816 577 L804 625 L792 672 L784 716 L777 760 L767 800 L760 843 L762 868 L770 886 L834 886 L852 870 L867 843 L871 800 L875 762 L880 720 L886 690 L895 640 L897 600 L896 560 L898 520 L905 480 L925 432Z"/></clipPath>
<clipPath id="cslR"><path d="M1175 450 L1192 480 L1199 499 L1211 540 L1221 577 L1233 625 L1245 672 L1253 716 L1260 760 L1270 800 L1277 843 L1275 868 L1267 886 L1203 886 L1185 870 L1170 843 L1166 800 L1162 762 L1157 720 L1151 690 L1142 640 L1140 600 L1141 560 L1139 520 L1132 480 L1112 432Z"/></clipPath>
<clipPath id="cfrL"><path d="M974 390 L960 397 L939 410 L898 427 L890 470 L893 520 L898 560 L904 600 L909 650 L911 700 L911 742 L992 744 L990 700 L987 641 L982 600 L976 532 L972 500 L968 450 L965 408 L974 390Z"/></clipPath>
<clipPath id="cfrR"><path d="M1063 390 L1077 397 L1098 410 L1139 427 L1147 470 L1144 520 L1139 560 L1133 600 L1128 650 L1126 700 L1126 742 L1045 744 L1047 700 L1050 641 L1055 600 L1061 532 L1065 500 L1069 450 L1072 408 L1063 390Z"/></clipPath>
<clipPath id="cbraL"><path d="M903 528 L942 513 L960 527 L975 531 L975 636 L940 640 L916 628 L904 600Z M899 430 L928 428 L934 470 L942 513 L903 528 L900 470Z"/></clipPath>
<clipPath id="cbraR"><path d="M1134 528 L1095 513 L1077 527 L1062 531 L1062 636 L1097 640 L1121 628 L1133 600Z M1138 430 L1109 428 L1103 470 L1095 513 L1134 528 L1137 470Z"/></clipPath>
<clipPath id="ccfL"><path d="M770 886 L771 915 L774 943 L824 941 L830 915 L834 886Z"/></clipPath>
<clipPath id="ccfR"><path d="M1267 886 L1266 915 L1263 943 L1213 941 L1207 915 L1203 886Z"/></clipPath>
<clipPath id="ccap"><path d="M953 207 L1085 207 C1092 235 1099 265 1100.5 288 L1098 297 L1084 299 L1083 297 Q1060 284 1018 279 Q975 284 954 298 L953 299 L939 297 L936 288 C938 262 946 232 953 207Z"/></clipPath></defs>
<rect x="471" y="207" width="1102" height="873" fill="url(#bg)"/>
<path d="M974 390 L960 397 L939 410 L898 427 L862 450 L845 480 L838 499 L880 520 L897 560 L904 600 L909 650 L912 700 L912 760 L1125 760 L1125 700 L1128 650 L1133 600 L1140 560 L1157 520 L1199 499 L1192 480 L1175 450 L1139 427 L1098 410 L1077 397 L1063 390Z" fill="url(#gtorso)"/>
<path d="M976 355 L975 392 L960 410 L966 470 L974 532 L1060 532 L1066 470 L1080 410 L1063 392 L1062 355Z" fill="url(#neck)"/>
<ellipse cx="1019" cy="390" rx="40" ry="9" fill="#9a9a9a" filter="url(#b4)" opacity="0.7"/>
<path d="M985 412 Q1000 420 1014 416 M1052 412 Q1037 420 1023 416" stroke="#c2c2c2" stroke-width="3" fill="none" filter="url(#b2)" opacity=".6"/>
<ellipse cx="948.5" cy="311" rx="7" ry="16" fill="#c9c9c9"/><ellipse cx="1088" cy="311" rx="7" ry="16" fill="#c9c9c9"/>
<path d="M955 290 C951 298.7 955.2 312 956 320 C956.8 328 958 332.7 960 338 C962 343.3 964.8 347.3 968 352 C971.2 356.7 974.5 361.5 979 366 C983.5 370.5 988.5 375.8 995 379 C1001.5 382.2 1010.2 385 1018 385 C1025.8 385 1035.3 382.2 1042 379 C1048.7 375.8 1053.5 370.5 1058 366 C1062.5 361.5 1065.8 356.7 1069 352 C1072.2 347.3 1075 343.3 1077 338 C1079 332.7 1080.2 328 1081 320 C1081.8 312 1085.5 298.7 1082 290 C1078.5 281.3 1077 271.7 1060 268 C1043 264.3 997.5 264.3 980 268 C962.5 271.7 959 281.3 955 290Z" fill="url(#skin)"/>
<g filter="url(#b2)" opacity="0.8"><ellipse cx="989" cy="290" rx="14" ry="4" fill="#b4b4b4"/><ellipse cx="1048" cy="290" rx="14" ry="4" fill="#b4b4b4"/><ellipse cx="1019" cy="321" rx="10" ry="3.5" fill="#a8a8a8"/><path d="M998 343 Q1018 340 1040 343" stroke="#9a9a9a" stroke-width="2.2" fill="none"/><ellipse cx="1019" cy="352" rx="14" ry="3" fill="#bdbdbd"/><path d="M1010 300 Q1008 312 1009 318" stroke="#c0c0c0" stroke-width="3" fill="none"/></g>
<ellipse cx="1019" cy="306" rx="5" ry="12" fill="#eeeeee" filter="url(#b2)" opacity="0.8"/>
<linearGradient id="mid" x1="0" y1="0" x2="1" y2="0"><stop offset="0" stop-color="#c8c8c8"/><stop offset="0.5" stop-color="#dcdcdc"/><stop offset="1" stop-color="#c6c6c6"/></linearGradient>
<rect x="984" y="636" width="68" height="130" fill="url(#mid)"/>
<g stroke-linecap="round" fill="none">
<path d="M819 952 Q828 966 825 983" stroke="#cdcdcd" stroke-width="10"/>
<path d="M776 938 C767.2 941.3 771 950.7 770 958 C769 965.3 769 974.3 770 982 C771 989.7 773.3 997.7 776 1004 C778.7 1010.3 782 1017.7 786 1020 C790 1022.3 795.8 1021 800 1018 C804.2 1015 808.8 1008.7 811 1002 C813.2 995.3 811.7 985.3 813 978 C814.3 970.7 817.3 964.7 819 958 C820.7 951.3 830.2 941.3 823 938 C815.8 934.7 784.8 934.7 776 938Z" fill="#d8d8d8" stroke="none"/>
<path d="M783 1004 L798 1036" stroke="#d6d6d6" stroke-width="6.5"/>
<path d="M792 1004 L806 1030" stroke="#cecece" stroke-width="6.5"/>
<path d="M801 1000 L814 1022" stroke="#c8c8c8" stroke-width="6.5"/>
<path d="M808 990 L816 1006" stroke="#c2c2c2" stroke-width="6"/>
<path d="M777 960 Q775 985 784 1010" stroke="#ececec" stroke-width="5" opacity=".8"/>
</g>
<g stroke-linecap="round" fill="none">
<path d="M1218 952 Q1209 966 1212 983" stroke="#cdcdcd" stroke-width="10"/>
<path d="M1261 938 C1269.8 941.3 1266 950.7 1267 958 C1268 965.3 1268 974.3 1267 982 C1266 989.7 1263.7 997.7 1261 1004 C1258.3 1010.3 1255 1017.7 1251 1020 C1247 1022.3 1241.2 1021 1237 1018 C1232.8 1015 1228.2 1008.7 1226 1002 C1223.8 995.3 1225.3 985.3 1224 978 C1222.7 970.7 1219.7 964.7 1218 958 C1216.3 951.3 1206.8 941.3 1214 938 C1221.2 934.7 1252.2 934.7 1261 938Z" fill="#d8d8d8" stroke="none"/>
<path d="M1254 1004 L1239 1036" stroke="#d6d6d6" stroke-width="6.5"/>
<path d="M1245 1004 L1231 1030" stroke="#cecece" stroke-width="6.5"/>
<path d="M1236 1000 L1223 1022" stroke="#c8c8c8" stroke-width="6.5"/>
<path d="M1229 990 L1221 1006" stroke="#c2c2c2" stroke-width="6"/>
<path d="M1260 960 Q1262 985 1253 1010" stroke="#ececec" stroke-width="5" opacity=".8"/>
</g>
<g clip-path="url(#cpants)">
<path d="M897 746 L960 750 L1018 756 L1077 750 L1140 746 L1140 765 L1147 800 L1154 834 L1165 897 L1176 960 L1185 1023 L1192 1082 L845 1082 L852 1023 L861 960 L872 897 L883 834 L890 800 L897 765Z" fill="url(#gpants)"/>
<g filter="url(#b14)">
<ellipse cx="903" cy="840" rx="20" ry="75" fill="#e2e236" opacity="0.95"/>
<ellipse cx="1134" cy="840" rx="20" ry="75" fill="#e2e236" opacity="0.95"/>
<ellipse cx="1148" cy="810" rx="8" ry="30" fill="#ecc040" opacity="0.8"/>
<ellipse cx="1150" cy="900" rx="8" ry="30" fill="#ecc040" opacity="0.8"/>
<ellipse cx="1018" cy="835" rx="46" ry="50" fill="#78d638" opacity="0.9"/>
<ellipse cx="958" cy="885" rx="30" ry="30" fill="#86da3e" opacity="0.85"/>
<ellipse cx="1078" cy="885" rx="30" ry="30" fill="#86da3e" opacity="0.85"/>
<ellipse cx="975" cy="800" rx="13" ry="13" fill="#c8f6f6" opacity="0.95"/>
<ellipse cx="1060" cy="800" rx="13" ry="13" fill="#c8f6f6" opacity="0.95"/>
<ellipse cx="992" cy="862" rx="20" ry="13" fill="#e8fcfc" opacity="0.95"/>
<ellipse cx="1045" cy="862" rx="20" ry="13" fill="#e8fcfc" opacity="0.95"/>
<ellipse cx="1018" cy="772" rx="16" ry="8" fill="#a0f0e0" opacity="0.9"/>
<ellipse cx="940" cy="830" rx="10" ry="16" fill="#d8f8f0" opacity="0.8"/>
<ellipse cx="1096" cy="830" rx="10" ry="16" fill="#d8f8f0" opacity="0.8"/>
<ellipse cx="1018" cy="1010" rx="58" ry="80" fill="#a4a4a4" opacity="0.95"/>
<ellipse cx="985" cy="980" rx="14" ry="50" fill="#d0d0d0" opacity="0.8"/>
<ellipse cx="1052" cy="980" rx="14" ry="50" fill="#d0d0d0" opacity="0.8"/>
<ellipse cx="893" cy="955" rx="18" ry="22" fill="#ffffff" opacity="0.95"/>
<ellipse cx="898" cy="1045" rx="24" ry="50" fill="#e6f4f4" opacity="0.9"/>
<ellipse cx="1140" cy="1045" rx="24" ry="50" fill="#e6f0e6" opacity="0.9"/>
<ellipse cx="1146" cy="960" rx="14" ry="30" fill="#d8ecc0" opacity="0.9"/>
<ellipse cx="930" cy="940" rx="28" ry="36" fill="#9ee05c" opacity="0.75"/>
<ellipse cx="1106" cy="940" rx="28" ry="36" fill="#a4e05c" opacity="0.75"/>
<ellipse cx="1104" cy="1005" rx="24" ry="30" fill="#b4f0d4" opacity="0.8"/>
<ellipse cx="932" cy="1010" rx="24" ry="30" fill="#c4f0e4" opacity="0.8"/>
<ellipse cx="940" cy="1060" rx="30" ry="20" fill="#f0f0f0" opacity="0.8"/>
<ellipse cx="1098" cy="1062" rx="30" ry="20" fill="#ececec" opacity="0.8"/>
</g>
<rect x="1015" y="916" width="7" height="170" fill="#8a8a8a" filter="url(#b2)"/>
</g>
<path d="M897 764.8 L904.2 766.3 L911.7 767.2 L919.6 767.7 L927.4 768.7 L934.9 769.7 L942.1 771 L950.5 771.5 L957.4 772.9 L965.9 773.6 L972.8 774.7 L980 775.1 L987.9 774.7 L995.3 775.3 L1003.7 775.4 L1011 776.1 L1018.3 776.1 L1025.6 775.4 L1033.3 776 L1041.2 775.3 L1049 775.1 L1056.2 775.1 L1064.3 773.8 L1071.7 773.5 L1079.7 773.1 L1086.6 772.6 L1094 771 L1102.3 769.8 L1109.6 768.7 L1117.4 768.5 L1124.9 767.6 L1132.2 766.3 L1140 765.1 M893.7 781.5 L900.9 782.2 L908.8 783.4 L916.9 784.4 L925.3 786.1 L932.2 786.6 L940.3 787.7 L947.8 789.1 L956.7 789.5 L963.9 789.7 L971.2 790.7 L979.2 791.8 L986.9 791.3 L995.6 792.3 L1002.5 792.6 L1010.1 792.7 L1019.1 793.2 L1026.5 792.4 L1033.9 792.1 L1042.2 792.3 L1050 791.7 L1057.2 791.8 L1065.9 791.3 L1073.5 790.6 L1081.2 789.2 L1088.7 788.5 L1096 787.3 L1104.1 786.6 L1112.4 786.5 L1119.9 785.5 L1128.3 784.4 L1135.4 782.5 L1143.3 781.4 M892 789.7 L899.5 791.3 L908.3 792.7 L915.7 793.5 L924 793.8 L931.7 795.8 L939.8 796.5 L947.3 796.7 L955.6 797.7 L963.5 799.2 L970.9 799.1 L979.5 800.1 L986.5 799.8 L994.4 801.1 L1003.1 800.5 L1011 801.6 L1018.7 800.9 L1026.5 800.6 L1033.7 801.5 L1042.4 800.7 L1050.7 800.2 L1058.5 800.2 L1065.6 799 L1073.6 798.3 L1081.9 797.6 L1089.6 796.6 L1098.1 796 L1105.4 795.4 L1113.9 794.2 L1121.8 793.3 L1129.2 792.3 L1136.5 791.1 L1145 789.7 M890.3 797.9 L898.7 799.2 L906.3 800.9 L914.4 801.5 L922.4 802.8 L930.7 803.2 L938.4 804.3 L946.1 805.8 L954.4 806.3 L962.7 807.5 L970.4 807.8 L978.4 808.2 L986.7 808.6 L994.5 809 L1003 809.5 L1010.9 810 L1018.2 809.6 L1027 809.8 L1034.1 808.8 L1042.5 808.5 L1050.2 808.1 L1058.8 808.5 L1067 807.2 L1074.8 807.2 L1082.2 806.7 L1091.2 805.1 L1099.2 804.5 L1106.6 804.3 L1115 802.3 L1122.6 801.7 L1130.5 800.3 L1138.5 799.8 L1146.7 797.9 M886.9 815.6 L895 816.3 L903.7 817.2 L911.6 818.6 L920.4 819.2 L928.4 820.6 L936.4 821.2 L944.3 821.6 L952.2 822.5 L961.2 823.4 L968.7 823.9 L977.8 825.3 L985.8 825.1 L993.5 825.5 L1002 825.6 L1010.2 825.9 L1019.1 826.8 L1026.8 825.8 L1035.5 825.8 L1043 825.1 L1051.3 825.3 L1059.6 824.5 L1067.9 823.8 L1075.8 823.2 L1084.2 822.4 L1092 821.9 L1100.4 821.4 L1109 820.7 L1117.4 819.7 L1125.9 818.3 L1133.5 817.9 L1141.5 816.5 L1150.1 815.4 M885.1 823 L893.9 825.1 L902 826 L910.5 826.3 L918.5 827.8 L927.2 829.1 L935.5 829.8 L944 830.8 L952.1 831 L959.6 831.6 L968.3 832.2 L977.2 833.3 L985.3 833.9 L993.7 834.1 L1001.2 834.7 L1010.5 834.5 L1018.5 834.8 L1026.3 834.8 L1034.9 833.8 L1043.2 834.4 L1051.5 834 L1060.7 833.3 L1068.4 832.7 L1077.1 832.4 L1085.3 831.5 L1093 830.1 L1101.5 830 L1109.9 828.8 L1117.9 827.2 L1126.6 827 L1135.4 825.9 L1143.3 824.7 L1151.9 823.5 M877.5 865 L885.8 867.1 L894.8 868 L904.4 868.5 L912.5 870.3 L921.7 870.4 L930.6 871.4 L938.9 871.9 L948.3 873.8 L957 874.6 L965.1 874.4 L974.4 875.8 L983.8 875.6 L991.8 876 L1000.9 876.8 L1009.3 876.9 L1018.8 876.9 L1027.6 876.6 L1035.9 876.1 L1044.8 876.4 L1053.2 875.3 L1062.9 874.9 L1070.9 874.1 L1080.3 873.8 L1089.6 873.8 L1098.4 872.2 L1106.1 871.2 L1115.4 871 L1124.2 869.4 L1133 868.9 L1142.1 868 L1151.1 866.8 L1159.5 865.1 M871.6 898.8 L880.5 900.3 L889.8 900.8 L898.8 902 L908.9 903.6 L918 904 L927 904.8 L935.9 906.3 L944.9 907.4 L954.3 907.8 L963.9 907.9 L973.2 909 L981.7 909.7 L990.7 910.3 L1000.2 909.8 L1009.6 910.1 L1018.1 910.5 L1027.1 910.5 L1036.6 910.1 L1046.6 909.8 L1055.4 909.1 L1063.8 908.3 L1073.2 908.5 L1082.7 907.7 L1092.4 906.5 L1100.8 906.3 L1109.7 904.7 L1119.3 903.9 L1128.5 903.1 L1137.9 902.5 L1146.7 901.5 L1156.2 899.8 L1165.4 899.7 M897 764.8 L895.3 773.5 L893.7 781.5 L892 789.7 L890.3 797.9 L888.6 806.9 L886.9 815.6 L885.1 823 L883.4 831.9 L881.9 840.5 L880.4 848.2 L879 857.5 L877.5 865 L876 874.4 L874.6 882.3 L873.1 890.2 L871.6 898.8 L870.2 907.3 L868.7 916.5 M911.7 767.2 L911.3 775.5 L908.8 783.4 L908.3 792.7 L906.3 800.9 L904.6 809.1 L903.7 817.2 L902 826 L900 834.6 L899 842.7 L897.7 851 L896 859.8 L894.8 868 L893.7 876.4 L893.1 884.3 L890.7 893.3 L889.8 900.8 L888.9 910.2 L887.1 918.4 M927.4 768.7 L926.4 777.8 L925.3 786.1 L924 793.8 L922.4 802.8 L921.7 811.4 L920.4 819.2 L918.5 827.8 L917.1 836.5 L916 844.8 L915.5 853.3 L913.5 861 L912.5 870.3 L911.3 877.7 L910.4 887 L909.5 895.1 L908.9 903.6 L907 911.2 L905.9 920.7 M934.9 769.7 L934.4 778.9 L932.2 786.6 L931.7 795.8 L930.7 803.2 L929.8 811.6 L928.4 820.6 L927.2 829.1 L926.2 837 L924.8 845.2 L924 854.5 L922.9 862.1 L921.7 870.4 L921 879.2 L920.1 887.4 L918.3 895.9 L918 904 L916.7 912.9 L915.3 920.9 M942.1 771 L941.3 779.3 L940.3 787.7 L939.8 796.5 L938.4 804.3 L937 812.4 L936.4 821.2 L935.5 829.8 L933.8 837.7 L932.6 846.9 L931.9 854.4 L931.8 863.2 L930.6 871.4 L929.2 879.9 L928.2 888.7 L927.7 896.8 L927 904.8 L925.6 913.9 L925.4 922.3 M965.9 773.6 L964.2 781.3 L963.9 789.7 L963.5 799.2 L962.7 807.5 L962.2 815.7 L961.2 823.4 L959.6 831.6 L959.4 841 L959 849.4 L958.4 857.4 L958 865.2 L957 874.6 L956.4 883 L955.9 890.8 L955 899.3 L954.3 907.8 L954.1 915.5 L953.4 924.7 M995.3 775.3 L995.3 784 L995.6 792.3 L994.4 801.1 L994.5 809 L993.6 817.6 L993.5 825.5 L993.7 834.1 L993.7 842.4 L992.5 850.5 L993.1 859.4 L992.2 868.1 L991.8 876 L991.5 884 L992 892.4 L990.8 900.9 L990.7 910.3 L990.7 918.6 L990.6 926 M1011 776.1 L1011.2 784.1 L1010.1 792.7 L1011 801.6 L1010.9 810 L1010.9 818 L1010.2 825.9 L1010.5 834.5 L1010 842.8 L1009.6 851.8 L1009.6 859.8 L1010.4 868.6 L1009.3 876.9 L1009.7 885.4 L1009.5 892.9 L1009.3 901.7 L1009.6 910.1 L1009.4 918.5 L1008.6 926.5 M1025.6 775.4 L1026.7 784.9 L1026.5 792.4 L1026.5 800.6 L1027 809.8 L1027 817.3 L1026.8 825.8 L1026.3 834.8 L1026.8 842.6 L1026.6 850.9 L1026.6 859.7 L1027.7 868.4 L1027.6 876.6 L1027.3 884.6 L1028 892.8 L1027.1 902 L1027.1 910.5 L1027.4 918.3 L1027.4 926.4 M1041.2 775.3 L1041.3 783.6 L1042.2 792.3 L1042.4 800.7 L1042.5 808.5 L1042.7 817.4 L1043 825.1 L1043.2 834.4 L1044.1 842.9 L1043.6 850.5 L1044.1 859.4 L1044.5 867.5 L1044.8 876.4 L1044.7 884.6 L1046 892.5 L1045.2 901.3 L1046.6 909.8 L1046.8 918.5 L1046.7 926.8 M1049 775.1 L1049.3 783.6 L1050 791.7 L1050.7 800.2 L1050.2 808.1 L1051.5 816.7 L1051.3 825.3 L1051.5 834 L1051.8 842.6 L1052.4 850.6 L1052.4 858.7 L1053.2 866.9 L1053.2 875.3 L1054.3 883.8 L1054 893.1 L1054.7 901.5 L1055.4 909.1 L1055.8 917.2 L1056.2 925.6 M1071.7 773.5 L1072.5 782.4 L1073.5 790.6 L1073.6 798.3 L1074.8 807.2 L1074.9 814.8 L1075.8 823.2 L1077.1 832.4 L1077.5 841 L1078.3 848.7 L1078.9 856.9 L1079.1 866.2 L1080.3 873.8 L1081 882.6 L1081.3 891.4 L1082.5 898.9 L1082.7 907.7 L1083.3 915.8 L1084.5 924 M1086.6 772.6 L1087.9 780.6 L1088.7 788.5 L1089.6 796.6 L1091.2 805.1 L1091.3 814.1 L1092 821.9 L1093 830.1 L1094.4 838.6 L1095.1 847.9 L1096.4 855.5 L1097.4 864.5 L1098.4 872.2 L1098.4 881.1 L1099.1 889.7 L1100.8 898.2 L1100.8 906.3 L1101.4 914.4 L1103.3 922.5 M1124.9 767.6 L1126.4 775 L1128.3 784.4 L1129.2 792.3 L1130.5 800.3 L1132.2 808.6 L1133.5 817.9 L1135.4 825.9 L1136.3 833.9 L1138 843 L1138.8 850.7 L1140 859.2 L1142.1 868 L1143.2 876.3 L1144.3 884.1 L1145.5 893.3 L1146.7 901.5 L1148.3 909.5 L1149.3 917.7 M1140 765.1 L1141.7 773 L1143.3 781.4 L1145 789.7 L1146.7 797.9 L1148.4 806.4 L1150.1 815.4 L1151.9 823.5 L1153.6 832.3 L1155.1 839.7 L1156.6 848.4 L1158 856.6 L1159.5 865.1 L1161 874.2 L1162.4 882.8 L1163.9 891.3 L1165.4 899.7 L1166.8 907.3 L1168.3 915.6" fill="none" stroke="#eef03c" stroke-width="1.2" opacity="1"/>
<path d="M895.3 773.5 L903 774.9 L911.3 775.5 L918.6 776 L926.4 777.8 L934.4 778.9 L941.3 779.3 L949.4 779.8 L956.9 780.7 L964.2 781.3 L972.6 782.1 L979.7 782.9 L988.2 783 L995.3 784 L1003.6 784.5 L1011.2 784.1 L1018.4 784.2 L1026.7 784.9 L1033.5 783.8 L1041.3 783.6 L1049.3 783.6 L1056.7 782.5 L1064.6 782.4 L1072.5 782.4 L1080.3 781.2 L1087.9 780.6 L1094.9 780 L1103.5 779 L1111.2 777.5 L1118.5 776.1 L1126.4 775 L1133.5 774.1 L1141.7 773 M881.9 840.5 L890.9 841.9 L899 842.7 L907 843.8 L916 844.8 L924.8 845.2 L932.6 846.9 L941.2 847.3 L950 847.9 L959 849.4 L967 849.7 L975.6 850.1 L984.2 850.1 L992.5 850.5 L1001.9 851.1 L1009.6 851.8 L1019.1 851.3 L1026.6 850.9 L1035.1 850.9 L1043.6 850.5 L1052.4 850.6 L1061.7 850.3 L1069.6 849.4 L1078.3 848.7 L1086.6 847.6 L1095.1 847.9 L1103.4 846.4 L1112.6 845.9 L1120.6 844.3 L1129.2 843.4 L1138 843 L1147 841.8 L1155.1 839.7 M879 857.5 L888 858.2 L896 859.8 L904.9 860.7 L913.5 861 L922.9 862.1 L931.8 863.2 L939.6 863.8 L948.6 865.1 L958 865.2 L966 865.9 L975.5 866.4 L983.1 866.8 L992.2 868.1 L1001.5 868.2 L1010.4 868.6 L1018.3 867.8 L1027.7 868.4 L1035.4 868.1 L1044.5 867.5 L1053.2 866.9 L1061.5 866.6 L1070.6 866.8 L1079.1 866.2 L1087.9 864.7 L1097.4 864.5 L1105.6 862.7 L1114.4 862.2 L1123.7 861 L1131.7 860.8 L1140 859.2 L1149.7 858.5 L1158 856.6 M876 874.4 L884.7 875.1 L893.7 876.4 L902.4 876.8 L911.3 877.7 L921 879.2 L929.2 879.9 L938.9 880.9 L946.9 882.1 L956.4 883 L964.6 883.1 L974.4 884.1 L983.4 883.6 L991.5 884 L1000.3 885.3 L1009.7 885.4 L1018.3 885.4 L1027.3 884.6 L1036.6 885.3 L1044.7 884.6 L1054.3 883.8 L1062.9 883.2 L1071.6 882.8 L1081 882.6 L1089.4 881.1 L1098.4 881.1 L1107.2 879.8 L1116.1 879.5 L1125.4 877.6 L1133.8 877 L1143.2 876.3 L1151.6 874.6 L1161 874.2 M874.6 882.3 L883.3 883.2 L893.1 884.3 L901.6 885.4 L910.4 887 L920.1 887.4 L928.2 888.7 L937.2 888.7 L947 890 L955.9 890.8 L965 891.5 L973.1 891.5 L982.6 892.7 L992 892.4 L1000.7 893 L1009.5 892.9 L1018.2 893.4 L1028 892.8 L1036.5 893.5 L1046 892.5 L1054 893.1 L1064.1 892 L1071.9 892 L1081.3 891.4 L1090.6 890.5 L1099.1 889.7 L1108.1 888.4 L1117.9 887.9 L1126.1 886.2 L1135.3 885.6 L1144.3 884.1 L1153.1 883.7 L1162.4 882.8 M868.7 916.5 L877.5 916.8 L887.1 918.4 L897.3 919.5 L905.9 920.7 L915.3 920.9 L925.4 922.3 L934.5 923.2 L944.2 923.7 L953.4 924.7 L962.8 925.1 L972 925.8 L980.8 925.8 L990.6 926 L1000.3 926.4 L1008.6 926.5 L1019 926.8 L1027.4 926.4 L1036.7 927 L1046.7 926.8 L1056.2 925.6 L1065.4 925.5 L1075.1 925.5 L1084.5 924 L1093.8 924.3 L1103.3 922.5 L1111.8 921.6 L1120.9 921.6 L1131.2 920.4 L1140.6 919.4 L1149.3 917.7 L1158.5 917.4 L1168.3 915.6 M972.8 774.7 L972.6 782.1 L971.2 790.7 L970.9 799.1 L970.4 807.8 L969.5 815.6 L968.7 823.9 L968.3 832.2 L967.4 841.5 L967 849.7 L967 857.8 L966 865.9 L965.1 874.4 L964.6 883.1 L965 891.5 L963.7 900.2 L963.9 907.9 L962.9 916.6 L962.8 925.1 M980 775.1 L979.7 782.9 L979.2 791.8 L979.5 800.1 L978.4 808.2 L978.4 816.6 L977.8 825.3 L977.2 833.3 L976.3 842.1 L975.6 850.1 L975.4 857.9 L975.5 866.4 L974.4 875.8 L974.4 884.1 L973.1 891.5 L973.4 900.4 L973.2 909 L971.8 916.8 L972 925.8 M1003.7 775.4 L1003.6 784.5 L1002.5 792.6 L1003.1 800.5 L1003 809.5 L1002.2 817.1 L1002 825.6 L1001.2 834.7 L1001 842.1 L1001.9 851.1 L1001 859.1 L1001.5 868.2 L1000.9 876.8 L1000.3 885.3 L1000.7 893 L1000.2 901.1 L1000.2 909.8 L999.5 918 L1000.3 926.4 M1064.3 773.8 L1064.6 782.4 L1065.9 791.3 L1065.6 799 L1067 807.2 L1066.9 815.5 L1067.9 823.8 L1068.4 832.7 L1068.9 840.9 L1069.6 849.4 L1070.5 858.3 L1070.6 866.8 L1070.9 874.1 L1071.6 882.8 L1071.9 892 L1073.6 900.2 L1073.2 908.5 L1074.1 917 L1075.1 925.5 M1132.2 766.3 L1133.5 774.1 L1135.4 782.5 L1136.5 791.1 L1138.5 799.8 L1140.3 808.4 L1141.5 816.5 L1143.3 824.7 L1145.7 833.5 L1147 841.8 L1147.8 850 L1149.7 858.5 L1151.1 866.8 L1151.6 874.6 L1153.1 883.7 L1154.4 891.9 L1156.2 899.8 L1157.7 909.2 L1158.5 917.4" fill="none" stroke="#b4ea46" stroke-width="1.2" opacity="1"/>
<path d="M888.6 806.9 L896.6 807.3 L904.6 809.1 L913 809.5 L921.7 811.4 L929.8 811.6 L937 812.4 L945.8 813.5 L953.1 814.5 L962.2 815.7 L969.5 815.6 L978.4 816.6 L986.3 816.5 L993.6 817.6 L1002.2 817.1 L1010.9 818 L1018.9 817.3 L1027 817.3 L1035.2 817.6 L1042.7 817.4 L1051.5 816.7 L1058.7 816.6 L1066.9 815.5 L1074.9 814.8 L1083.1 814.4 L1091.3 814.1 L1099.4 813 L1107.4 811.8 L1115.4 810.8 L1123.5 810.3 L1132.2 808.6 L1140.3 808.4 L1148.4 806.4 M880.4 848.2 L889.3 850.3 L897.7 851 L905.7 851.8 L915.5 853.3 L924 854.5 L931.9 854.4 L940.4 855.7 L949.7 857 L958.4 857.4 L967 857.8 L975.4 857.9 L984.3 858.6 L993.1 859.4 L1001 859.1 L1009.6 859.8 L1018.7 859.3 L1026.6 859.7 L1035.9 859.4 L1044.1 859.4 L1052.4 858.7 L1061.6 859 L1070.5 858.3 L1078.9 856.9 L1087.2 857.1 L1096.4 855.5 L1104.2 854.8 L1113.6 853.8 L1121.8 853.1 L1131.2 851.6 L1138.8 850.7 L1147.8 850 L1156.6 848.4 M873.1 890.2 L882.3 892.2 L890.7 893.3 L899.9 894.1 L909.5 895.1 L918.3 895.9 L927.7 896.8 L936.9 897.7 L945.7 898 L955 899.3 L963.7 900.2 L973.4 900.4 L981.8 900.9 L990.8 900.9 L1000.2 901.1 L1009.3 901.7 L1017.9 901.9 L1027.1 902 L1037 901.6 L1045.2 901.3 L1054.7 901.5 L1063.5 900.9 L1073.6 900.2 L1082.5 898.9 L1091.8 898.5 L1100.8 898.2 L1109 897.2 L1119 895.4 L1127.4 895.3 L1136.2 894.4 L1145.5 893.3 L1154.4 891.9 L1163.9 891.3 M870.2 907.3 L879 908.2 L888.9 910.2 L898.3 910.7 L907 911.2 L916.7 912.9 L925.6 913.9 L935 915.1 L944.6 915.1 L954.1 915.5 L962.9 916.6 L971.8 916.8 L981.7 917.2 L990.7 918.6 L999.5 918 L1009.4 918.5 L1018.7 919 L1027.4 918.3 L1036.8 917.8 L1046.8 918.5 L1055.8 917.2 L1065.3 917.6 L1074.1 917 L1083.3 915.8 L1092.2 915 L1101.4 914.4 L1111.5 913.9 L1120.9 913 L1129.5 911.9 L1138.9 911.1 L1148.3 909.5 L1157.7 909.2 L1166.8 907.3 M904.2 766.3 L903 774.9 L900.9 782.2 L899.5 791.3 L898.7 799.2 L896.6 807.3 L895 816.3 L893.9 825.1 L891.4 833.5 L890.9 841.9 L889.3 850.3 L888 858.2 L885.8 867.1 L884.7 875.1 L883.3 883.2 L882.3 892.2 L880.5 900.3 L879 908.2 L877.5 916.8 M919.6 767.7 L918.6 776 L916.9 784.4 L915.7 793.5 L914.4 801.5 L913 809.5 L911.6 818.6 L910.5 826.3 L909.3 834.5 L907 843.8 L905.7 851.8 L904.9 860.7 L904.4 868.5 L902.4 876.8 L901.6 885.4 L899.9 894.1 L898.8 902 L898.3 910.7 L897.3 919.5 M950.5 771.5 L949.4 779.8 L947.8 789.1 L947.3 796.7 L946.1 805.8 L945.8 813.5 L944.3 821.6 L944 830.8 L943.1 838.6 L941.2 847.3 L940.4 855.7 L939.6 863.8 L938.9 871.9 L938.9 880.9 L937.2 888.7 L936.9 897.7 L935.9 906.3 L935 915.1 L934.5 923.2 M987.9 774.7 L988.2 783 L986.9 791.3 L986.5 799.8 L986.7 808.6 L986.3 816.5 L985.8 825.1 L985.3 833.9 L985 841.8 L984.2 850.1 L984.3 858.6 L983.1 866.8 L983.8 875.6 L983.4 883.6 L982.6 892.7 L981.8 900.9 L981.7 909.7 L981.7 917.2 L980.8 925.8 M1018.3 776.1 L1018.4 784.2 L1019.1 793.2 L1018.7 800.9 L1018.2 809.6 L1018.9 817.3 L1019.1 826.8 L1018.5 834.8 L1018.3 842.5 L1019.1 851.3 L1018.7 859.3 L1018.3 867.8 L1018.8 876.9 L1018.3 885.4 L1018.2 893.4 L1017.9 901.9 L1018.1 910.5 L1018.7 919 L1019 926.8 M1056.2 775.1 L1056.7 782.5 L1057.2 791.8 L1058.5 800.2 L1058.8 808.5 L1058.7 816.6 L1059.6 824.5 L1060.7 833.3 L1061 842.1 L1061.7 850.3 L1061.6 859 L1061.5 866.6 L1062.9 874.9 L1062.9 883.2 L1064.1 892 L1063.5 900.9 L1063.8 908.3 L1065.3 917.6 L1065.4 925.5 M1079.7 773.1 L1080.3 781.2 L1081.2 789.2 L1081.9 797.6 L1082.2 806.7 L1083.1 814.4 L1084.2 822.4 L1085.3 831.5 L1086.1 839.5 L1086.6 847.6 L1087.2 857.1 L1087.9 864.7 L1089.6 873.8 L1089.4 881.1 L1090.6 890.5 L1091.8 898.5 L1092.4 906.5 L1092.2 915 L1093.8 924.3 M1094 771 L1094.9 780 L1096 787.3 L1098.1 796 L1099.2 804.5 L1099.4 813 L1100.4 821.4 L1101.5 830 L1102.4 837.6 L1103.4 846.4 L1104.2 854.8 L1105.6 862.7 L1106.1 871.2 L1107.2 879.8 L1108.1 888.4 L1109 897.2 L1109.7 904.7 L1111.5 913.9 L1111.8 921.6 M1102.3 769.8 L1103.5 779 L1104.1 786.6 L1105.4 795.4 L1106.6 804.3 L1107.4 811.8 L1109 820.7 L1109.9 828.8 L1111.8 836.9 L1112.6 845.9 L1113.6 853.8 L1114.4 862.2 L1115.4 871 L1116.1 879.5 L1117.9 887.9 L1119 895.4 L1119.3 903.9 L1120.9 913 L1120.9 921.6 M1109.6 768.7 L1111.2 777.5 L1112.4 786.5 L1113.9 794.2 L1115 802.3 L1115.4 810.8 L1117.4 819.7 L1117.9 827.2 L1120.3 835.8 L1120.6 844.3 L1121.8 853.1 L1123.7 861 L1124.2 869.4 L1125.4 877.6 L1126.1 886.2 L1127.4 895.3 L1128.5 903.1 L1129.5 911.9 L1131.2 920.4 M1117.4 768.5 L1118.5 776.1 L1119.9 785.5 L1121.8 793.3 L1122.6 801.7 L1123.5 810.3 L1125.9 818.3 L1126.6 827 L1128 835.1 L1129.2 843.4 L1131.2 851.6 L1131.7 860.8 L1133 868.9 L1133.8 877 L1135.3 885.6 L1136.2 894.4 L1137.9 902.5 L1138.9 911.1 L1140.6 919.4" fill="none" stroke="#ffffff" stroke-width="1.2" opacity="1"/>
<path d="M883.4 831.9 L891.4 833.5 L900 834.6 L909.3 834.5 L917.1 836.5 L926.2 837 L933.8 837.7 L943.1 838.6 L951.1 839.3 L959.4 841 L967.4 841.5 L976.3 842.1 L985 841.8 L993.7 842.4 L1001 842.1 L1010 842.8 L1018.3 842.5 L1026.8 842.6 L1035.8 842.1 L1044.1 842.9 L1051.8 842.6 L1061 842.1 L1068.9 840.9 L1077.5 841 L1086.1 839.5 L1094.4 838.6 L1102.4 837.6 L1111.8 836.9 L1120.3 835.8 L1128 835.1 L1136.3 833.9 L1145.7 833.5 L1153.6 832.3 M957.4 772.9 L956.9 780.7 L956.7 789.5 L955.6 797.7 L954.4 806.3 L953.1 814.5 L952.2 822.5 L952.1 831 L951.1 839.3 L950 847.9 L949.7 857 L948.6 865.1 L948.3 873.8 L946.9 882.1 L947 890 L945.7 898 L944.9 907.4 L944.6 915.1 L944.2 923.7 M1033.3 776 L1033.5 783.8 L1033.9 792.1 L1033.7 801.5 L1034.1 808.8 L1035.2 817.6 L1035.5 825.8 L1034.9 833.8 L1035.8 842.1 L1035.1 850.9 L1035.9 859.4 L1035.4 868.1 L1035.9 876.1 L1036.6 885.3 L1036.5 893.5 L1037 901.6 L1036.6 910.1 L1036.8 917.8 L1036.7 927" fill="none" stroke="#a8f0ea" stroke-width="1.2" opacity="1"/>

<path d="M890.3 797.8 L906.5 801 L922.8 804.7 L938.2 806.4 L954.9 808.2 L969.9 810.6 L987.2 812 L1002.9 812.9 L1018.9 812.8 L1034.4 811.8 L1050.8 810.6 L1066.4 810.7 L1083 808.6 L1098.1 806.1 L1114.6 804.1 L1130.5 801.6 L1146.7 799.3 M886.9 814.6 L903.6 818.5 L919.6 820.5 L937.2 822.1 L952.8 824.4 L969.7 827.7 L985.6 827.3 L1002.2 829 L1018.9 829.2 L1035.2 829.6 L1051.5 828 L1068.8 826.3 L1084.7 824.9 L1101.3 822.2 L1118.2 820.3 L1132.8 817.5 L1150.1 815 M868.7 916.2 L887.7 919.1 L906.3 921.7 L924.3 924.1 L943.5 926.4 L961.5 927 L980.1 929.5 L1000.6 930 L1018.2 930.6 L1037.8 929.9 L1055.5 928.5 L1074.5 927.3 L1093.3 926.2 L1113 922.9 L1131 920.4 L1148.8 919.4 L1168.3 916.2 M911.4 768.5 L909.9 783.8 L906.5 801 L903.6 818.5 L900.1 834.5 L897.2 851.2 L895.7 868 L893.2 885 L890.1 902.6 L887.7 919.1 M926.4 769.8 L924.2 786.6 L922.8 804.7 L919.6 820.5 L917.6 837 L914.5 853.9 L912 871.7 L910.7 888.1 L907.9 905.2 L906.3 921.7 M942.1 773.6 L940.1 789.6 L938.2 806.4 L937.2 822.1 L933.6 839.2 L931.6 855.5 L931 872.7 L929.2 889.9 L926.5 907 L924.3 924.1 M957.8 774.7 L955.4 791.3 L954.9 808.2 L952.8 824.4 L951.4 842.7 L949.9 858.2 L948.8 875.7 L946.4 893.2 L944.6 909.1 L943.5 926.4 M988 778 L987.7 793.9 L987.2 812 L985.6 827.3 L985.3 844.6 L983.9 861.5 L984 879.1 L982.8 894.4 L982.4 911.8 L980.1 929.5 M1018.8 778.7 L1018.3 796.7 L1018.9 812.8 L1018.9 829.2 L1019.1 846.5 L1018.2 863.6 L1018.9 879.6 L1019.4 896 L1018.7 913.4 L1018.2 930.6 M1049.6 778.3 L1049.6 794.1 L1050.8 810.6 L1051.5 828 L1052.4 844.3 L1053.7 862.5 L1054.5 878.6 L1054.5 896.1 L1055.7 912.9 L1055.5 928.5 M1064.5 776 L1065.6 792.6 L1066.4 810.7 L1068.8 826.3 L1070.1 843.3 L1070.8 859.6 L1070.9 876.7 L1071.5 894.4 L1073.7 909.9 L1074.5 927.3 M1094.6 772 L1095.6 789.3 L1098.1 806.1 L1101.3 822.2 L1103.6 839.6 L1103.8 855.5 L1105.7 873.3 L1109.2 889.9 L1109.7 907.8 L1113 922.9 M1124.3 767.1 L1127.7 784.7 L1130.5 801.6 L1132.8 817.5 L1135.9 835.3 L1138.8 850.7 L1141.9 868.4 L1145 884.5 L1147.6 902.7 L1148.8 919.4 M1140 764.6 L1143.3 781.7 L1146.7 799.3 L1150.1 815 L1153.6 831.6 L1156.6 848 L1159.5 866.3 L1162.4 882.2 L1165.4 899.4 L1168.3 916.2" fill="none" stroke="#eef03c" stroke-width="1.1" opacity="0.75"/>
<path d="M893.7 782.1 L909.9 783.8 L924.2 786.6 L940.1 789.6 L955.4 791.3 L971.1 794.3 L987.7 793.9 L1003.8 794.7 L1018.3 796.7 L1034.7 795.9 L1049.6 794.1 L1065.6 792.6 L1080.3 791.4 L1095.6 789.3 L1112.7 787.5 L1127.7 784.7 L1143.3 781.7 M883.4 831 L900.1 834.5 L917.6 837 L933.6 839.2 L951.4 842.7 L967.9 843 L985.3 844.6 L1001 844.9 L1019.1 846.5 L1035.7 845.6 L1052.4 844.3 L1070.1 843.3 L1086.3 842.5 L1103.6 839.6 L1119.4 837.4 L1135.9 835.3 L1153.6 831.6 M874.6 881.4 L893.2 885 L910.7 888.1 L929.2 889.9 L946.4 893.2 L963.7 894.3 L982.8 894.4 L1000.7 896.5 L1019.4 896 L1037.5 896.1 L1054.5 896.1 L1071.5 894.4 L1090.7 891.9 L1109.2 889.9 L1126.4 887.8 L1145 884.5 L1162.4 882.2 M871.6 899 L890.1 902.6 L907.9 905.2 L926.5 907 L944.6 909.1 L964.4 911.1 L982.4 911.8 L999.8 912.5 L1018.7 913.4 L1037.4 912 L1055.7 912.9 L1073.7 909.9 L1091.5 908.1 L1109.7 907.8 L1128.9 904.9 L1147.6 902.7 L1165.4 899.4" fill="none" stroke="#b4ea46" stroke-width="1.1" opacity="0.75"/>
<path d="M897 765.8 L893.7 782.1 L890.3 797.8 L886.9 814.6 L883.4 831 L880.4 849.4 L877.5 865 L874.6 881.4 L871.6 899 L868.7 916.2 M973.7 776.1 L971.1 794.3 L969.9 810.6 L969.7 827.7 L967.9 843 L966.2 860 L966.2 877.5 L963.7 894.3 L964.4 911.1 L961.5 927 M1033.3 778 L1034.7 795.9 L1034.4 811.8 L1035.2 829.6 L1035.7 845.6 L1036.5 861.6 L1036.6 879.2 L1037.5 896.1 L1037.4 912 L1037.8 929.9 M1079.1 775.4 L1080.3 791.4 L1083 808.6 L1084.7 824.9 L1086.3 842.5 L1088.2 858.9 L1088.3 875.4 L1090.7 891.9 L1091.5 908.1 L1093.3 926.2 M1109.5 771.1 L1112.7 787.5 L1114.6 804.1 L1118.2 820.3 L1119.4 837.4 L1123 854.4 L1123.5 870.9 L1126.4 887.8 L1128.9 904.9 L1131 920.4" fill="none" stroke="#ffffff" stroke-width="1.1" opacity="0.75"/>
<path d="M897 765.8 L911.4 768.5 L926.4 769.8 L942.1 773.6 L957.8 774.7 L973.7 776.1 L988 778 L1003.8 779.2 L1018.8 778.7 L1033.3 778 L1049.6 778.3 L1064.5 776 L1079.1 775.4 L1094.6 772 L1109.5 771.1 L1124.3 767.1 L1140 764.6 M880.4 849.4 L897.2 851.2 L914.5 853.9 L931.6 855.5 L949.9 858.2 L966.2 860 L983.9 861.5 L1001.5 862.8 L1018.2 863.6 L1036.5 861.6 L1053.7 862.5 L1070.8 859.6 L1088.2 858.9 L1103.8 855.5 L1123 854.4 L1138.8 850.7 L1156.6 848 M877.5 865 L895.7 868 L912 871.7 L931 872.7 L948.8 875.7 L966.2 877.5 L984 879.1 L1001.6 878.7 L1018.9 879.6 L1036.6 879.2 L1054.5 878.6 L1070.9 876.7 L1088.3 875.4 L1105.7 873.3 L1123.5 870.9 L1141.9 868.4 L1159.5 866.3 M1003.8 779.2 L1003.8 794.7 L1002.9 812.9 L1002.2 829 L1001 844.9 L1001.5 862.8 L1001.6 878.7 L1000.7 896.5 L999.8 912.5 L1000.6 930" fill="none" stroke="#a8f0ea" stroke-width="1.1" opacity="0.75"/>

<path d="M868.7 916.3 L878.3 917 L887.7 916.6 L896.9 917.9 L906.1 918.6 L915.2 919.1 L925.1 918.2 L933.7 919.1 L944 918.5 L952.7 919.2 L961.9 919.2 L971.7 918 L980.9 918.2 L990.3 917.9 L999.3 917.5 L1009 916.8 L1018.5 916.2 M865.7 933.8 L875.6 934.4 L884.8 934.3 L894.7 935.4 L904.1 936 L913.2 935.4 L923 936.6 L932.2 936.7 L942.6 936.1 L951.8 936.6 L961.1 935.9 L970.4 936.2 L980.6 935.5 L989.3 935.5 L999.7 934.3 L1009 934.5 L1018.5 933.9 M864.1 942.1 L873.8 942.8 L883.1 942.9 L892.7 944 L902.6 944.3 L912.3 944.6 L921.6 944.4 L932.3 944.9 L940.8 945.3 L951.3 944.7 L960.7 944.7 L970.3 944.1 L979.3 944.9 L990 943.8 L999.3 943.1 L1009.2 942.7 L1018.5 942.7 M861.1 959.3 L871.4 960.6 L881.2 960.1 L890.9 961.4 L900.6 962.2 L909.7 961.6 L920.4 962.9 L930.2 962.3 L939.9 962.9 L949.2 962.3 L959.2 961.9 L969.3 961.7 L978.8 961.3 L989.2 960.7 L999.1 960.4 L1008.1 960.8 L1018.5 959.3 M859.8 968.7 L870.2 969.3 L879.2 969.3 L889.1 970.4 L899.9 970.5 L909.4 970.6 L919.7 971 L929.4 970.8 L938.8 970.8 L949.3 971.3 L958.6 971.6 L968.6 970.7 L978.4 970.2 L989.2 969.9 L998.3 969.5 L1008.4 969.5 L1018.5 968 M858.6 977.5 L868 978 L878.8 977.8 L888.5 978.4 L898.3 978.8 L908.4 980.1 L919.1 980.3 L928.1 979.7 L939 979.5 L948.8 979.8 L959.1 979.3 L968.9 979.4 L978.1 978.6 L988.9 978.8 L998.1 978.2 L1009 977.4 L1018.5 977.2 M857.3 985.3 L867 986.6 L877.7 986.5 L887 986.9 L897.8 987.9 L907.4 987.9 L917.9 988.8 L928.2 988.8 L937.6 988.3 L948.3 988.6 L958.3 988.1 L968.5 988.1 L978.6 988.4 L988.3 986.9 L998.8 987 L1008.9 986.2 L1018.5 985.5 M856.1 994.8 L866.1 994.6 L876.2 995.7 L885.9 996.2 L896.6 996.6 L906.4 997.2 L917.4 997.7 L926.9 997.7 L937.1 997.8 L946.9 997.9 L958.1 997.3 L967.8 997.1 L977.9 996.1 L988.6 995.9 L997.8 995.3 L1008 995.6 L1018.5 994.1 M854.8 1002.7 L865.3 1003.4 L874.7 1004.5 L885.6 1004.9 L896 1004.9 L906.4 1006 L915.7 1005.6 L926.4 1006.2 L936.4 1005.8 L946.8 1005.8 L957.2 1006.5 L966.9 1005.9 L977.9 1005 L988.2 1005.5 L997.9 1004.4 L1008.7 1004 L1018.5 1003.2 M852.3 1020.1 L862.9 1021 L873.3 1021.5 L883.5 1022.9 L894 1022.5 L904.3 1023.1 L915.2 1023.2 L924.8 1023.9 L935 1023.9 L946.4 1023.7 L955.9 1023.5 L966.6 1022.9 L976.5 1022.5 L987.1 1022.4 L997.5 1021.7 L1007.6 1021.5 L1018.5 1021.2 M851.2 1029.5 L861.8 1030.2 L871.8 1030.8 L882.6 1031.2 L893.2 1031.5 L903.3 1031.6 L913.6 1032.3 L924.3 1032.5 L934.3 1032.3 L945.8 1032.1 L955.8 1032.3 L966 1032.6 L976.4 1032 L986.7 1030.7 L998 1030.6 L1007.5 1030 L1018.5 1029.5 M849.2 1046.8 L859.7 1047.5 L870.6 1047.9 L880.8 1048.7 L891.4 1048.9 L902.4 1049.9 L912.7 1049.7 L922.9 1049.7 L933.4 1050.1 L944.5 1049.4 L955.5 1049.6 L966 1049.9 L976.7 1048.8 L986.7 1049.2 L996.7 1047.6 L1008 1047.6 L1018.5 1047.6 M848.1 1056 L858.8 1056.9 L869.4 1056.9 L880.3 1057.3 L890.5 1058 L901.2 1058.8 L912.2 1058.5 L922.2 1058.5 L933.2 1058.8 L944 1059.1 L955.2 1058.5 L965.2 1058.4 L976.5 1057.7 L986.6 1057.8 L996.8 1056.7 L1008.4 1056.8 L1018.5 1055.8 M846 1073.4 L856.9 1074.4 L867.7 1074.3 L877.9 1074.5 L889.5 1074.9 L899.5 1075.3 L910.7 1076.4 L921.6 1076.6 L931.7 1075.7 L943.4 1076 L954.1 1075.8 L964.2 1075.5 L974.9 1075.9 L986.3 1074.7 L996.9 1074.3 L1007.2 1074.3 L1018.5 1073.4 M887.7 916.6 L886.6 926.2 L884.8 934.3 L883.1 942.9 L881.8 951.4 L881.2 960.1 L879.2 969.3 L878.8 977.8 L877.7 986.5 L876.2 995.7 L874.7 1004.5 L873.9 1012.9 L873.3 1021.5 L871.8 1030.8 L871.8 1039.6 L870.6 1047.9 L869.4 1056.9 L868.9 1066.2 L867.7 1074.3 L866.4 1082.6 M896.9 917.9 L895.6 926.1 L894.7 935.4 L892.7 944 L891.5 952.1 L890.9 961.4 L889.1 970.4 L888.5 978.4 L887 986.9 L885.9 996.2 L885.6 1004.9 L884.4 1014.2 L883.5 1022.9 L882.6 1031.2 L881.3 1039.7 L880.8 1048.7 L880.3 1057.3 L879.7 1066.1 L877.9 1074.5 L878 1084.1 M915.2 919.1 L914.7 927.6 L913.2 935.4 L912.3 944.6 L911.4 953.8 L909.7 961.6 L909.4 970.6 L908.4 980.1 L907.4 987.9 L906.4 997.2 L906.4 1006 L905.5 1014.9 L904.3 1023.1 L903.3 1031.6 L902.9 1041.1 L902.4 1049.9 L901.2 1058.8 L900.7 1067 L899.5 1075.3 L899.6 1084.3 M933.7 919.1 L934 928.1 L932.2 936.7 L932.3 944.9 L931.3 953.3 L930.2 962.3 L929.4 970.8 L928.1 979.7 L928.2 988.8 L926.9 997.7 L926.4 1006.2 L926.3 1015.5 L924.8 1023.9 L924.3 1032.5 L924.1 1041.5 L922.9 1049.7 L922.2 1058.5 L922.2 1067.6 L921.6 1076.6 L920.9 1085.5 M961.9 919.2 L961.6 927.7 L961.1 935.9 L960.7 944.7 L959.8 953.7 L959.2 961.9 L958.6 971.6 L959.1 979.3 L958.3 988.1 L958.1 997.3 L957.2 1006.5 L956.7 1014.3 L955.9 1023.5 L955.8 1032.3 L955.9 1040.6 L955.5 1049.6 L955.2 1058.5 L954.1 1067.6 L954.1 1075.8 L953.2 1085.2 M980.9 918.2 L981 926.6 L980.6 935.5 L979.3 944.9 L979.7 952.9 L978.8 961.3 L978.4 970.2 L978.1 978.6 L978.6 988.4 L977.9 996.1 L977.9 1005 L976.7 1013.7 L976.5 1022.5 L976.4 1032 L976.7 1040.5 L976.7 1048.8 L976.5 1057.7 L975 1066.4 L974.9 1075.9 L974.8 1083.7 M999.3 917.5 L999.5 926 L999.7 934.3 L999.3 943.1 L999.6 952.7 L999.1 960.4 L998.3 969.5 L998.1 978.2 L998.8 987 L997.8 995.3 L997.9 1004.4 L998.4 1013.4 L997.5 1021.7 L998 1030.6 L997.5 1039.3 L996.7 1047.6 L996.8 1056.7 L997.3 1065.3 L996.9 1074.3 L997.4 1082.9" fill="none" stroke="#ffffff" stroke-width="1.2" opacity="1"/>
<path d="M867.2 924.6 L876.5 925.6 L886.6 926.2 L895.6 926.1 L904.5 927.4 L914.7 927.6 L923.7 927.6 L934 928.1 L943 927.5 L952.2 928.1 L961.6 927.7 L971.3 927.7 L981 926.6 L989.5 926.1 L999.5 926 L1009.4 925.8 L1018.5 924.2 M853.6 1012.4 L864.2 1012.3 L873.9 1012.9 L884.4 1014.2 L895.2 1014.6 L905.5 1014.9 L914.9 1014.8 L926.3 1015.5 L935.7 1014.9 L946.5 1014.8 L956.7 1014.3 L966.9 1014.5 L976.7 1013.7 L988.1 1014.1 L998.4 1013.4 L1008.6 1013.1 L1018.5 1012.6 M845 1082.6 L855.8 1082.7 L866.4 1082.6 L878 1084.1 L888.2 1084.6 L899.6 1084.3 L910.2 1085.3 L920.9 1085.5 L931.4 1084.9 L942.9 1084.6 L953.2 1085.2 L964.3 1084.8 L974.8 1083.7 L985.8 1083.3 L997.4 1082.9 L1007.7 1082.1 L1018.5 1082 M952.7 919.2 L952.2 928.1 L951.8 936.6 L951.3 944.7 L949.8 954.4 L949.2 962.3 L949.3 971.3 L948.8 979.8 L948.3 988.6 L946.9 997.9 L946.8 1005.8 L946.5 1014.8 L946.4 1023.7 L945.8 1032.1 L945.2 1041.4 L944.5 1049.4 L944 1059.1 L943.7 1066.9 L943.4 1076 L942.9 1084.6 M971.7 918 L971.3 927.7 L970.4 936.2 L970.3 944.1 L970 953.9 L969.3 961.7 L968.6 970.7 L968.9 979.4 L968.5 988.1 L967.8 997.1 L966.9 1005.9 L966.9 1014.5 L966.6 1022.9 L966 1032.6 L966.4 1040.2 L966 1049.9 L965.2 1058.4 L964.7 1067.2 L964.2 1075.5 L964.3 1084.8 M1018.5 916.2 L1018.5 924.2 L1018.5 933.9 L1018.5 942.7 L1018.5 950.7 L1018.5 959.3 L1018.5 968 L1018.5 977.2 L1018.5 985.5 L1018.5 994.1 L1018.5 1003.2 L1018.5 1012.6 L1018.5 1021.2 L1018.5 1029.5 L1018.5 1038.4 L1018.5 1047.6 L1018.5 1055.8 L1018.5 1064.2 L1018.5 1073.4 L1018.5 1082" fill="none" stroke="#a8e84a" stroke-width="1.2" opacity="1"/>
<path d="M850.2 1038.5 L860.3 1038.4 L871.8 1039.6 L881.3 1039.7 L892.1 1040.5 L902.9 1041.1 L913.7 1041 L924.1 1041.5 L934.7 1041.2 L945.2 1041.4 L955.9 1040.6 L966.4 1040.2 L976.7 1040.5 L986.9 1040.5 L997.5 1039.3 L1008.3 1039.3 L1018.5 1038.4 M906.1 918.6 L904.5 927.4 L904.1 936 L902.6 944.3 L901.1 952.4 L900.6 962.2 L899.9 970.5 L898.3 978.8 L897.8 987.9 L896.6 996.6 L896 1004.9 L895.2 1014.6 L894 1022.5 L893.2 1031.5 L892.1 1040.5 L891.4 1048.9 L890.5 1058 L889.5 1066.4 L889.5 1074.9 L888.2 1084.6 M990.3 917.9 L989.5 926.1 L989.3 935.5 L990 943.8 L989.2 952.2 L989.2 960.7 L989.2 969.9 L988.9 978.8 L988.3 986.9 L988.6 995.9 L988.2 1005.5 L988.1 1014.1 L987.1 1022.4 L986.7 1030.7 L986.9 1040.5 L986.7 1049.2 L986.6 1057.8 L986.8 1066.3 L986.3 1074.7 L985.8 1083.3" fill="none" stroke="#a8f0ea" stroke-width="1.2" opacity="1"/>
<path d="M862.6 951.1 L872.7 951.9 L881.8 951.4 L891.5 952.1 L901.1 952.4 L911.4 953.8 L921 954.2 L931.3 953.3 L940.7 953.7 L949.8 954.4 L959.8 953.7 L970 953.9 L979.7 952.9 L989.2 952.2 L999.6 952.7 L1008.4 951 L1018.5 950.7 M847.1 1064 L858.3 1065.3 L868.9 1066.2 L879.7 1066.1 L889.5 1066.4 L900.7 1067 L911 1066.9 L922.2 1067.6 L932.6 1068.1 L943.7 1066.9 L954.1 1067.6 L964.7 1067.2 L975 1066.4 L986.8 1066.3 L997.3 1065.3 L1007.8 1065.2 L1018.5 1064.2 M868.7 916.3 L867.2 924.6 L865.7 933.8 L864.1 942.1 L862.6 951.1 L861.1 959.3 L859.8 968.7 L858.6 977.5 L857.3 985.3 L856.1 994.8 L854.8 1002.7 L853.6 1012.4 L852.3 1020.1 L851.2 1029.5 L850.2 1038.5 L849.2 1046.8 L848.1 1056 L847.1 1064 L846 1073.4 L845 1082.6 M878.3 917 L876.5 925.6 L875.6 934.4 L873.8 942.8 L872.7 951.9 L871.4 960.6 L870.2 969.3 L868 978 L867 986.6 L866.1 994.6 L865.3 1003.4 L864.2 1012.3 L862.9 1021 L861.8 1030.2 L860.3 1038.4 L859.7 1047.5 L858.8 1056.9 L858.3 1065.3 L856.9 1074.4 L855.8 1082.7 M925.1 918.2 L923.7 927.6 L923 936.6 L921.6 944.4 L921 954.2 L920.4 962.9 L919.7 971 L919.1 980.3 L917.9 988.8 L917.4 997.7 L915.7 1005.6 L914.9 1014.8 L915.2 1023.2 L913.6 1032.3 L913.7 1041 L912.7 1049.7 L912.2 1058.5 L911 1066.9 L910.7 1076.4 L910.2 1085.3 M944 918.5 L943 927.5 L942.6 936.1 L940.8 945.3 L940.7 953.7 L939.9 962.9 L938.8 970.8 L939 979.5 L937.6 988.3 L937.1 997.8 L936.4 1005.8 L935.7 1014.9 L935 1023.9 L934.3 1032.3 L934.7 1041.2 L933.4 1050.1 L933.2 1058.8 L932.6 1068.1 L931.7 1075.7 L931.4 1084.9 M1009 916.8 L1009.4 925.8 L1009 934.5 L1009.2 942.7 L1008.4 951 L1008.1 960.8 L1008.4 969.5 L1009 977.4 L1008.9 986.2 L1008 995.6 L1008.7 1004 L1008.6 1013.1 L1007.6 1021.5 L1007.5 1030 L1008.3 1039.3 L1008 1047.6 L1008.4 1056.8 L1007.8 1065.2 L1007.2 1074.3 L1007.7 1082.1" fill="none" stroke="#e6f03c" stroke-width="1.2" opacity="1"/>

<path d="M1018.5 915.8 L1027.6 916.7 L1036.9 917.6 L1046.1 917.7 L1056 917.8 L1065.6 918.4 L1074.9 918.9 L1083.8 918.8 L1092.9 918.6 L1103.2 918.7 L1112.3 918.3 L1121.6 918.3 L1130.9 917.9 L1139.7 917.4 L1149.2 916.7 L1159.2 916.3 L1168.3 915.9 M1018.5 960.3 L1028.6 959.8 L1038.4 961.4 L1048.1 960.8 L1057.8 961.7 L1067.3 962.2 L1076.9 962.9 L1087.5 962.7 L1097.7 962.8 L1106.7 962.2 L1116.4 961.8 L1127 962.4 L1136.3 961.3 L1146.6 961.6 L1156.7 960.3 L1166.4 960.5 L1175.9 959.8 M1018.5 968.2 L1028 969.4 L1038.1 969.4 L1048.3 969.9 L1058.6 970.2 L1067.5 970.9 L1078.2 971.5 L1088.2 971.8 L1098.4 971.3 L1107.8 970.8 L1117.4 971.2 L1127.1 971 L1137.1 970.3 L1148 969.4 L1156.8 969.3 L1166.9 969.1 L1177.2 967.6 M1018.5 994.3 L1028.7 994.7 L1038.8 995.9 L1048.4 996.1 L1058.6 996.6 L1069.7 997.1 L1079.7 997.6 L1089.1 998.1 L1100 997.1 L1110.3 997.3 L1119.6 997.8 L1130.2 997.3 L1139.9 996.9 L1149.9 995.8 L1160.5 995 L1170.9 994.7 L1180.9 994.2 M1018.5 1011.6 L1028.2 1012.2 L1039.5 1012.9 L1049.5 1013.5 L1060 1014 L1069.6 1015 L1080.4 1015 L1091 1015.5 L1100.4 1014.8 L1110.8 1014.9 L1122 1015.1 L1131.3 1014.1 L1142.6 1014.3 L1152.4 1013.6 L1162.4 1013.5 L1173 1013 L1183.4 1012 M1018.5 1030 L1029.3 1030.3 L1039.6 1030.5 L1049.6 1031.6 L1060.8 1032.2 L1071 1031.8 L1081.5 1032.6 L1091.7 1032.6 L1102 1032.6 L1112.5 1031.9 L1122.8 1032 L1134.1 1031.9 L1143.8 1031.3 L1154.1 1030.9 L1164.4 1030 L1175.8 1029.9 L1185.8 1029.3 M1018.5 1038.4 L1028.8 1038.5 L1039 1039.2 L1049.8 1040.2 L1060.6 1040.9 L1070.9 1041.3 L1081.7 1040.5 L1091.7 1041.3 L1103.2 1041.1 L1113.5 1041.1 L1124.1 1040.5 L1134.2 1041.2 L1144.5 1040 L1154.7 1039.5 L1165.5 1039.6 L1175.9 1038.6 L1186.8 1037.8 M1018.5 1055.7 L1028.6 1056.9 L1039.9 1057.5 L1049.9 1057.6 L1061.4 1057.7 L1071.3 1057.8 L1082 1058.8 L1092.5 1059.1 L1103.6 1058.8 L1114.4 1058.7 L1125.2 1058.6 L1135.4 1058.5 L1146 1058.1 L1157.2 1057.7 L1167.4 1057.2 L1178.8 1056.2 L1188.9 1055.4 M1018.5 1073.6 L1029.2 1073.6 L1040.5 1073.9 L1051.1 1074.4 L1061.8 1075.3 L1072.8 1075.2 L1083.2 1075.9 L1094.5 1076.7 L1104.9 1075.9 L1115.2 1075.9 L1126.2 1075.7 L1136.7 1076 L1148 1075.1 L1159.2 1074.6 L1169.5 1074 L1180.6 1074.3 L1191 1073 M1018.5 915.8 L1018.5 925.2 L1018.5 933.9 L1018.5 942.5 L1018.5 951.5 L1018.5 960.3 L1018.5 968.2 L1018.5 977.6 L1018.5 985.7 L1018.5 994.3 L1018.5 1003.6 L1018.5 1011.6 L1018.5 1020.3 L1018.5 1030 L1018.5 1038.4 L1018.5 1047.2 L1018.5 1055.7 L1018.5 1064.6 L1018.5 1073.6 L1018.5 1082.3 M1036.9 917.6 L1037.8 925.4 L1037.3 934.5 L1037.7 942.8 L1038.4 951.6 L1038.4 961.4 L1038.1 969.4 L1038.4 978 L1038.6 987.2 L1038.8 995.9 L1039.1 1004.9 L1039.5 1012.9 L1039.7 1022.1 L1039.6 1030.5 L1039 1039.2 L1039.3 1048.5 L1039.9 1057.5 L1039.3 1065.6 L1040.5 1073.9 L1040 1083.1 M1056 917.8 L1056.5 927 L1056.1 936 L1057.1 944.8 L1057.9 953.1 L1057.8 961.7 L1058.6 970.2 L1058.4 979 L1059.3 987.4 L1058.6 996.6 L1059.9 1005 L1060 1014 L1059.9 1022.9 L1060.8 1032.2 L1060.6 1040.9 L1060.3 1049.5 L1061.4 1057.7 L1061.2 1067.2 L1061.8 1075.3 L1062.1 1084.2 M1083.8 918.8 L1084.4 928.1 L1085.5 935.8 L1086.4 944.8 L1086.7 954.1 L1087.5 962.7 L1088.2 971.8 L1088.1 979.8 L1089.2 988.6 L1089.1 998.1 L1090.5 1005.8 L1091 1015.5 L1091.3 1023.5 L1091.7 1032.6 L1091.7 1041.3 L1092.6 1050.4 L1092.5 1059.1 L1093.1 1066.9 L1094.5 1076.7 L1094.9 1084.8 M1092.9 918.6 L1094 927.9 L1094.6 936 L1095.7 945.7 L1096.8 953.4 L1097.7 962.8 L1098.4 971.3 L1098.4 980.1 L1099.2 988.7 L1100 997.1 L1100.2 1006.6 L1100.4 1014.8 L1101 1023.7 L1102 1032.6 L1103.2 1041.1 L1103.3 1050.5 L1103.6 1058.8 L1104.2 1067.6 L1104.9 1075.9 L1105.6 1085.4 M1121.6 918.3 L1122.8 926.7 L1123.1 936.1 L1124.5 944.5 L1125.4 953 L1127 962.4 L1127.1 971 L1128.4 980.1 L1128.9 988.7 L1130.2 997.3 L1130.5 1005.8 L1131.3 1014.1 L1132.5 1022.9 L1134.1 1031.9 L1134.2 1041.2 L1134.8 1049.7 L1135.4 1058.5 L1136 1067.3 L1136.7 1076 L1137.2 1084 M1130.9 917.9 L1131.4 926.4 L1133 935.8 L1133.9 944 L1135.7 952.9 L1136.3 961.3 L1137.1 970.3 L1138.9 979.6 L1139.4 987.4 L1139.9 996.9 L1141.6 1004.9 L1142.6 1014.3 L1143.1 1022.5 L1143.8 1031.3 L1144.5 1040 L1145.3 1048.6 L1146 1058.1 L1147.6 1066.2 L1148 1075.1 L1149.2 1083.5 M1168.3 915.9 L1169.8 924.3 L1171.3 933.6 L1172.9 942 L1174.4 950.2 L1175.9 959.8 L1177.2 967.6 L1178.4 977.1 L1179.7 985.8 L1180.9 994.2 L1182.2 1003.3 L1183.4 1012 L1184.7 1021 L1185.8 1029.3 L1186.8 1037.8 L1187.8 1046.6 L1188.9 1055.4 L1189.9 1064.3 L1191 1073 L1192 1081.5" fill="none" stroke="#ffffff" stroke-width="1.2" opacity="1"/>
<path d="M1018.5 1003.6 L1028.6 1004.4 L1039.1 1004.9 L1049.3 1005.5 L1059.9 1005 L1069.9 1005.6 L1080.2 1006.3 L1090.5 1005.8 L1100.2 1006.6 L1111.1 1006.5 L1120.2 1006.1 L1130.5 1005.8 L1141.6 1004.9 L1152 1005.1 L1161.4 1004 L1171.9 1004.2 L1182.2 1003.3 M1018.5 1020.3 L1028.7 1021.1 L1039.7 1022.1 L1049.1 1022.1 L1059.9 1022.9 L1070.5 1023.1 L1080.6 1022.9 L1091.3 1023.5 L1101 1023.7 L1112.6 1023.1 L1121.9 1023.7 L1132.5 1022.9 L1143.1 1022.5 L1153.6 1022.4 L1164.4 1022.4 L1173.7 1021.3 L1184.7 1021 M1018.5 1082.3 L1029.7 1082.3 L1040 1083.1 L1051.5 1083.3 L1062.1 1084.2 L1072.7 1084.6 L1084 1084.4 L1094.9 1084.8 L1105.6 1085.4 L1115.7 1085.4 L1127.5 1084.5 L1137.2 1084 L1149.2 1083.5 L1160 1083.2 L1170.6 1082.7 L1180.8 1082.8 L1192 1081.5 M1027.6 916.7 L1028.3 925.8 L1028.1 934.3 L1028.5 942.9 L1028.1 951.3 L1028.6 959.8 L1028 969.4 L1028.9 978.1 L1028.7 987 L1028.7 994.7 L1028.6 1004.4 L1028.2 1012.2 L1028.7 1021.1 L1029.3 1030.3 L1028.8 1038.5 L1029.5 1047.8 L1028.6 1056.9 L1029.7 1064.7 L1029.2 1073.6 L1029.7 1082.3 M1074.9 918.9 L1075.4 927.7 L1075.3 936.6 L1075.8 945.2 L1077.2 953.8 L1076.9 962.9 L1078.2 971.5 L1078.9 980.3 L1078.9 988.1 L1079.7 997.6 L1080.2 1006.3 L1080.4 1015 L1080.6 1022.9 L1081.5 1032.6 L1081.7 1040.5 L1081.6 1049.4 L1082 1058.8 L1082.3 1066.7 L1083.2 1075.9 L1084 1084.4 M1103.2 918.7 L1103.2 927.2 L1104.8 936 L1105.5 945.1 L1105.9 953.6 L1106.7 962.2 L1107.8 970.8 L1108.3 979.6 L1109.2 988.8 L1110.3 997.3 L1111.1 1006.5 L1110.8 1014.9 L1112.6 1023.1 L1112.5 1031.9 L1113.5 1041.1 L1113.4 1049.7 L1114.4 1058.7 L1114.5 1068 L1115.2 1075.9 L1115.7 1085.4" fill="none" stroke="#a8e84a" stroke-width="1.2" opacity="1"/>
<path d="M1018.5 933.9 L1028.1 934.3 L1037.3 934.5 L1047.4 934.9 L1056.1 936 L1066.6 935.7 L1075.3 936.6 L1085.5 935.8 L1094.6 936 L1104.8 936 L1114.5 936.5 L1123.1 936.1 L1133 935.8 L1143.1 934.8 L1151.7 935.1 L1161.7 934.5 L1171.3 933.6 M1018.5 977.6 L1028.9 978.1 L1038.4 978 L1048.7 978.8 L1058.4 979 L1068.4 979.8 L1078.9 980.3 L1088.1 979.8 L1098.4 980.1 L1108.3 979.6 L1118 979.6 L1128.4 980.1 L1138.9 979.6 L1149 979.2 L1158.6 978.5 L1167.9 977.8 L1178.4 977.1 M1018.5 985.7 L1028.7 987 L1038.6 987.2 L1048.5 987.3 L1059.3 987.4 L1068.5 988.5 L1078.9 988.1 L1089.2 988.6 L1099.2 988.7 L1109.2 988.8 L1119.1 988.1 L1128.9 988.7 L1139.4 987.4 L1149.9 987.1 L1159 986.9 L1169.3 986.3 L1179.7 985.8 M1046.1 917.7 L1046.6 925.8 L1047.4 934.9 L1047.7 943.8 L1047.8 952.4 L1048.1 960.8 L1048.3 969.9 L1048.7 978.8 L1048.5 987.3 L1048.4 996.1 L1049.3 1005.5 L1049.5 1013.5 L1049.1 1022.1 L1049.6 1031.6 L1049.8 1040.2 L1050.8 1048.8 L1049.9 1057.6 L1050.8 1066.5 L1051.1 1074.4 L1051.5 1083.3 M1065.6 918.4 L1065.6 927.1 L1066.6 935.7 L1066.3 945 L1067.5 953 L1067.3 962.2 L1067.5 970.9 L1068.4 979.8 L1068.5 988.5 L1069.7 997.1 L1069.9 1005.6 L1069.6 1015 L1070.5 1023.1 L1071 1031.8 L1070.9 1041.3 L1071.9 1049.3 L1071.3 1057.8 L1071.7 1067.3 L1072.8 1075.2 L1072.7 1084.6 M1159.2 916.3 L1160.1 925.4 L1161.7 934.5 L1162.9 942.7 L1164.2 950.9 L1166.4 960.5 L1166.9 969.1 L1167.9 977.8 L1169.3 986.3 L1170.9 994.7 L1171.9 1004.2 L1173 1013 L1173.7 1021.3 L1175.8 1029.9 L1175.9 1038.6 L1177.2 1047.6 L1178.8 1056.2 L1179.2 1065.2 L1180.6 1074.3 L1180.8 1082.8" fill="none" stroke="#a8f0ea" stroke-width="1.2" opacity="1"/>
<path d="M1018.5 925.2 L1028.3 925.8 L1037.8 925.4 L1046.6 925.8 L1056.5 927 L1065.6 927.1 L1075.4 927.7 L1084.4 928.1 L1094 927.9 L1103.2 927.2 L1113.6 927.8 L1122.8 926.7 L1131.4 926.4 L1141.1 926.1 L1150.8 925.3 L1160.1 925.4 L1169.8 924.3 M1018.5 942.5 L1028.5 942.9 L1037.7 942.8 L1047.7 943.8 L1057.1 944.8 L1066.3 945 L1075.8 945.2 L1086.4 944.8 L1095.7 945.7 L1105.5 945.1 L1114.7 944.4 L1124.5 944.5 L1133.9 944 L1143.5 944 L1153.8 942.9 L1162.9 942.7 L1172.9 942 M1018.5 951.5 L1028.1 951.3 L1038.4 951.6 L1047.8 952.4 L1057.9 953.1 L1067.5 953 L1077.2 953.8 L1086.7 954.1 L1096.8 953.4 L1105.9 953.6 L1115.6 953.1 L1125.4 953 L1135.7 952.9 L1144.7 952.3 L1154.9 951.8 L1164.2 950.9 L1174.4 950.2 M1018.5 1047.2 L1029.5 1047.8 L1039.3 1048.5 L1050.8 1048.8 L1060.3 1049.5 L1071.9 1049.3 L1081.6 1049.4 L1092.6 1050.4 L1103.3 1050.5 L1113.4 1049.7 L1124.6 1049.9 L1134.8 1049.7 L1145.3 1048.6 L1156 1048.1 L1166.8 1047.9 L1177.2 1047.6 L1187.8 1046.6 M1018.5 1064.6 L1029.7 1064.7 L1039.3 1065.6 L1050.8 1066.5 L1061.2 1067.2 L1071.7 1067.3 L1082.3 1066.7 L1093.1 1066.9 L1104.2 1067.6 L1114.5 1068 L1125.5 1066.8 L1136 1067.3 L1147.6 1066.2 L1157.2 1066.5 L1168.2 1066.2 L1179.2 1065.2 L1189.9 1064.3 M1112.3 918.3 L1113.6 927.8 L1114.5 936.5 L1114.7 944.4 L1115.6 953.1 L1116.4 961.8 L1117.4 971.2 L1118 979.6 L1119.1 988.1 L1119.6 997.8 L1120.2 1006.1 L1122 1015.1 L1121.9 1023.7 L1122.8 1032 L1124.1 1040.5 L1124.6 1049.9 L1125.2 1058.6 L1125.5 1066.8 L1126.2 1075.7 L1127.5 1084.5 M1139.7 917.4 L1141.1 926.1 L1143.1 934.8 L1143.5 944 L1144.7 952.3 L1146.6 961.6 L1148 969.4 L1149 979.2 L1149.9 987.1 L1149.9 995.8 L1152 1005.1 L1152.4 1013.6 L1153.6 1022.4 L1154.1 1030.9 L1154.7 1039.5 L1156 1048.1 L1157.2 1057.7 L1157.2 1066.5 L1159.2 1074.6 L1160 1083.2 M1149.2 916.7 L1150.8 925.3 L1151.7 935.1 L1153.8 942.9 L1154.9 951.8 L1156.7 960.3 L1156.8 969.3 L1158.6 978.5 L1159 986.9 L1160.5 995 L1161.4 1004 L1162.4 1013.5 L1164.4 1022.4 L1164.4 1030 L1165.5 1039.6 L1166.8 1047.9 L1167.4 1057.2 L1168.2 1066.2 L1169.5 1074 L1170.6 1082.7" fill="none" stroke="#e6f03c" stroke-width="1.2" opacity="1"/>

<path d="M905.2 919.6 L903.6 938.9 L902 956.9 L898.7 975 L897.2 993.6 L895.9 1012.4 L893.1 1031.1 L891.1 1048.7 L889.8 1066.1 L888.1 1085.9 M1000.2 918.9 L998.9 936.6 L998 955.3 L998.9 973.3 L998.9 991.1 L997.2 1009.8 L997.7 1028 L997.6 1047.7 L996.9 1065.6 L995.9 1084.1 M1018.5 916.7 L1018.5 934.2 L1018.5 953.6 L1018.5 970.8 L1018.5 989.1 L1018.5 1008.8 L1018.5 1026.4 L1018.5 1044.5 L1018.5 1064.4 L1018.5 1081.9" fill="none" stroke="#ffffff" stroke-width="1.1" opacity="0.75"/>
<path d="M868.7 915.4 L887 917.1 L905.2 919.6 L924.7 920.7 L943.3 920 L962.7 920.9 L981.1 919.6 L1000.2 918.9 L1018.5 916.7 M862.3 952.2 L881.2 953.9 L902 956.9 L921.7 956.5 L940.8 957.5 L960.2 957.5 L979.1 957.3 L998 955.3 L1018.5 953.6 M859.4 971.1 L879.5 974.1 L898.7 975 L919.6 975.6 L939.4 976 L958.9 976.1 L979.1 974.5 L998.9 973.3 L1018.5 970.8 M854.1 1008.7 L874.6 1010.2 L895.9 1012.4 L916.5 1011.8 L936.1 1013.8 L957.5 1012 L976.7 1011.2 L997.2 1009.8 L1018.5 1008.8 M851.6 1026.5 L872.4 1027.6 L893.1 1031.1 L914.6 1031.1 L935 1032.2 L956.4 1030.5 L977.1 1029.9 L997.7 1028 L1018.5 1026.4 M849.4 1044.7 L870.3 1046 L891.1 1048.7 L911.9 1049 L934.4 1049.6 L954.7 1049.2 L976.9 1047.8 L997.6 1047.7 L1018.5 1044.5 M845 1081.4 L867.6 1084.3 L888.1 1085.9 L909.7 1085.8 L932.3 1086.8 L953.5 1086.6 L975.9 1086 L995.9 1084.1 L1018.5 1081.9 M887 917.1 L884.4 935.9 L881.2 953.9 L879.5 974.1 L876.5 992.3 L874.6 1010.2 L872.4 1027.6 L870.3 1046 L869.2 1065.7 L867.6 1084.3 M924.7 920.7 L922.6 938.8 L921.7 956.5 L919.6 975.6 L917.5 994.2 L916.5 1011.8 L914.6 1031.1 L911.9 1049 L911.3 1067.9 L909.7 1085.8 M943.3 920 L941.8 938.7 L940.8 957.5 L939.4 976 L937.1 994 L936.1 1013.8 L935 1032.2 L934.4 1049.6 L933.3 1068.1 L932.3 1086.8" fill="none" stroke="#a8e84a" stroke-width="1.1" opacity="0.75"/>
<path d="M868.7 915.4 L865.5 934.8 L862.3 952.2 L859.4 971.1 L856.8 989.8 L854.1 1008.7 L851.6 1026.5 L849.4 1044.7 L847.2 1063.3 L845 1081.4 M962.7 920.9 L962.1 938 L960.2 957.5 L958.9 976.1 L958.7 994.4 L957.5 1012 L956.4 1030.5 L954.7 1049.2 L954.1 1068.4 L953.5 1086.6 M981.1 919.6 L980.5 938.8 L979.1 957.3 L979.1 974.5 L978.1 993.3 L976.7 1011.2 L977.1 1029.9 L976.9 1047.8 L976.3 1066.8 L975.9 1086" fill="none" stroke="#a8f0ea" stroke-width="1.1" opacity="0.75"/>
<path d="M865.5 934.8 L884.4 935.9 L903.6 938.9 L922.6 938.8 L941.8 938.7 L962.1 938 L980.5 938.8 L998.9 936.6 L1018.5 934.2 M856.8 989.8 L876.5 992.3 L897.2 993.6 L917.5 994.2 L937.1 994 L958.7 994.4 L978.1 993.3 L998.9 991.1 L1018.5 989.1 M847.2 1063.3 L869.2 1065.7 L889.8 1066.1 L911.3 1067.9 L933.3 1068.1 L954.1 1068.4 L976.3 1066.8 L996.9 1065.6 L1018.5 1064.4" fill="none" stroke="#e6f03c" stroke-width="1.1" opacity="0.75"/>

<path d="M1018.5 935.2 L1036.9 936 L1056.8 937 L1076.9 938.6 L1094.5 939 L1113.6 939.7 L1133.4 937.9 L1152.2 935.4 L1171.5 934 M1018.5 1025.8 L1040 1028.1 L1059.7 1030.3 L1080.7 1031.3 L1101.3 1032.4 L1122.5 1031.9 L1143 1030.7 L1165.5 1028.2 L1185.4 1025.5 M1018.5 1063.1 L1039.6 1066 L1061.3 1067.9 L1081.9 1068.1 L1104.9 1068.7 L1125.6 1067.3 L1146.3 1066.6 L1169.2 1066.1 L1189.8 1062.9 M1018.5 915.2 L1018.5 935.2 L1018.5 953.6 L1018.5 970.4 L1018.5 988.9 L1018.5 1008.9 L1018.5 1025.8 L1018.5 1044.9 L1018.5 1063.1 L1018.5 1082.8 M1055.1 920 L1056.8 937 L1057.1 955.8 L1058.1 974.9 L1058 994 L1059 1010.9 L1059.7 1030.3 L1060.9 1047.8 L1061.3 1067.9 L1062.8 1085.2 M1074.8 919.7 L1076.9 938.6 L1076.2 957.5 L1077.8 975.4 L1078.3 994.5 L1079.3 1013.3 L1080.7 1031.3 L1081.8 1050.1 L1081.9 1068.1 L1084.5 1086.9 M1112.1 919.7 L1113.6 939.7 L1116.1 957.6 L1118.4 976.4 L1119.7 994.9 L1121.5 1012.2 L1122.5 1031.9 L1123.4 1050.3 L1125.6 1067.3 L1126.8 1086.1 M1131.2 919.4 L1133.4 937.9 L1135.4 956.9 L1138 974.6 L1139.8 993.5 L1142.6 1012 L1143 1030.7 L1144.6 1049.4 L1146.3 1066.6 L1149.1 1084.9 M1168.3 916.6 L1171.5 934 L1174.7 952.8 L1177.6 971.9 L1180.2 989 L1182.9 1008.4 L1185.4 1025.5 L1187.6 1045 L1189.8 1062.9 L1192 1081.1" fill="none" stroke="#ffffff" stroke-width="1.1" opacity="0.75"/>
<path d="M1018.5 915.2 L1037.9 917.1 L1055.1 920 L1074.8 919.7 L1093.8 921.4 L1112.1 919.7 L1131.2 919.4 L1149.7 918.9 L1168.3 916.6 M1018.5 953.6 L1038.6 955.5 L1057.1 955.8 L1076.2 957.5 L1096.4 957.7 L1116.1 957.6 L1135.4 956.9 L1154.6 955.5 L1174.7 952.8 M1018.5 988.9 L1038.6 991.9 L1058 994 L1078.3 994.5 L1098.7 995.5 L1119.7 994.9 L1139.8 993.5 L1160.4 991.1 L1180.2 989 M1018.5 1008.9 L1038.3 1010.9 L1059 1010.9 L1079.3 1013.3 L1101.6 1013 L1121.5 1012.2 L1142.6 1012 L1161.6 1009.1 L1182.9 1008.4 M1018.5 1044.9 L1039.9 1046.5 L1060.9 1047.8 L1081.8 1050.1 L1102.9 1050.4 L1123.4 1050.3 L1144.6 1049.4 L1167.5 1047.8 L1187.6 1045 M1018.5 1082.8 L1039.3 1084.1 L1062.8 1085.2 L1084.5 1086.9 L1104.4 1086.7 L1126.8 1086.1 L1149.1 1084.9 L1170.9 1083.5 L1192 1081.1 M1037.9 917.1 L1036.9 936 L1038.6 955.5 L1038 973.3 L1038.6 991.9 L1038.3 1010.9 L1040 1028.1 L1039.9 1046.5 L1039.6 1066 L1039.3 1084.1 M1093.8 921.4 L1094.5 939 L1096.4 957.7 L1098.6 975.8 L1098.7 995.5 L1101.6 1013 L1101.3 1032.4 L1102.9 1050.4 L1104.9 1068.7 L1104.4 1086.7" fill="none" stroke="#a8e84a" stroke-width="1.1" opacity="0.75"/>
<path d="M1018.5 970.4 L1038 973.3 L1058.1 974.9 L1077.8 975.4 L1098.6 975.8 L1118.4 976.4 L1138 974.6 L1158.6 973 L1177.6 971.9" fill="none" stroke="#a8f0ea" stroke-width="1.1" opacity="0.75"/>
<path d="M1149.7 918.9 L1152.2 935.4 L1154.6 955.5 L1158.6 973 L1160.4 991.1 L1161.6 1009.1 L1165.5 1028.2 L1167.5 1047.8 L1169.2 1066.1 L1170.9 1083.5" fill="none" stroke="#e6f03c" stroke-width="1.1" opacity="0.75"/>

<path d="M897 746 L960 750 L1018 756 L1077 750 L1140 746 L1142 768 L1077 774 L1018 778 L960 774 L895 768Z" fill="#e6ea38" opacity="0.55"/>
<path d="M993 756 L1058 756 L1060 778 L992 778Z" fill="#c6f01a" opacity="0.9"/>
<path d="M1060 762 L1070 762 L1070 777 L1060 777Z" fill="#f08a1e"/>
<path d="M897 746 L896.3 753.3 L895.7 760.7 L895 768 M906.3 747.1 L905.7 754.4 L905.1 761.8 L904.5 769.1 M915.7 748.2 L915.1 755.5 L914.6 762.8 L914 770.2 M943.7 751.1 L943.3 758.4 L942.9 765.8 L942.5 773.1 M953.1 752 L952.7 759.3 L952.4 766.6 L952 774 M962.4 752.7 L962.1 760.1 L961.8 767.4 L961.5 774.7 M971.8 753.4 L971.5 760.7 L971.3 768.1 L971 775.4 M981.1 754 L980.9 761.3 L980.7 768.6 L980.5 776 M999.8 754.7 L999.7 762.1 L999.6 769.4 L999.5 776.7 M1009.2 754.9 L1009.1 762.3 L1009.1 769.6 L1009 776.9 M1027.8 754.9 L1027.9 762.3 L1027.9 769.6 L1028 776.9 M1037.2 754.7 L1037.3 762.1 L1037.4 769.4 L1037.5 776.7 M1046.5 754.4 L1046.7 761.7 L1046.8 769.1 L1047 776.4 M1065.2 753.4 L1065.5 760.7 L1065.7 768.1 L1066 775.4 M1083.9 752 L1084.3 759.3 L1084.6 766.6 L1085 774 M1093.3 751.1 L1093.7 758.4 L1094.1 765.8 L1094.5 773.1 M1121.3 748.2 L1121.9 755.5 L1122.4 762.8 L1123 770.2 M1130.7 747.1 L1131.3 754.4 L1131.9 761.8 L1132.5 769.1 M1140 746 L1140.7 753.3 L1141.3 760.7 L1142 768" fill="none" stroke="#f0f03c" stroke-width="1.1" opacity="1"/>
<path d="M897 746 L906.3 747.1 L915.7 748.2 L925 749.2 L934.4 750.2 L943.7 751.1 L953.1 752 L962.4 752.7 L971.8 753.4 L981.1 754 L990.5 754.4 L999.8 754.7 L1009.2 754.9 L1018.5 755 L1027.8 754.9 L1037.2 754.7 L1046.5 754.4 L1055.9 754 L1065.2 753.4 L1074.6 752.7 L1083.9 752 L1093.3 751.1 L1102.6 750.2 L1112 749.2 L1121.3 748.2 L1130.7 747.1 L1140 746 M896.3 753.3 L905.7 754.4 L915.1 755.5 L924.5 756.5 L933.9 757.5 L943.3 758.4 L952.7 759.3 L962.1 760.1 L971.5 760.7 L980.9 761.3 L990.3 761.7 L999.7 762.1 L1009.1 762.3 L1018.5 762.3 L1027.9 762.3 L1037.3 762.1 L1046.7 761.7 L1056.1 761.3 L1065.5 760.7 L1074.9 760.1 L1084.3 759.3 L1093.7 758.4 L1103.1 757.5 L1112.5 756.5 L1121.9 755.5 L1131.3 754.4 L1140.7 753.3 M895.7 760.7 L905.1 761.8 L914.6 762.8 L924 763.9 L933.5 764.8 L942.9 765.8 L952.4 766.6 L961.8 767.4 L971.3 768.1 L980.7 768.6 L990.2 769.1 L999.6 769.4 L1009.1 769.6 L1018.5 769.7 L1027.9 769.6 L1037.4 769.4 L1046.8 769.1 L1056.3 768.6 L1065.7 768.1 L1075.2 767.4 L1084.6 766.6 L1094.1 765.8 L1103.5 764.8 L1113 763.9 L1122.4 762.8 L1131.9 761.8 L1141.3 760.7 M895 768 L904.5 769.1 L914 770.2 L923.5 771.2 L933 772.2 L942.5 773.1 L952 774 L961.5 774.7 L971 775.4 L980.5 776 L990 776.4 L999.5 776.7 L1009 776.9 L1018.5 777 L1028 776.9 L1037.5 776.7 L1047 776.4 L1056.5 776 L1066 775.4 L1075.5 774.7 L1085 774 L1094.5 773.1 L1104 772.2 L1113.5 771.2 L1123 770.2 L1132.5 769.1 L1142 768 M925 749.2 L924.5 756.5 L924 763.9 L923.5 771.2 M934.4 750.2 L933.9 757.5 L933.5 764.8 L933 772.2 M990.5 754.4 L990.3 761.7 L990.2 769.1 L990 776.4 M1018.5 755 L1018.5 762.3 L1018.5 769.7 L1018.5 777 M1055.9 754 L1056.1 761.3 L1056.3 768.6 L1056.5 776 M1074.6 752.7 L1074.9 760.1 L1075.2 767.4 L1075.5 774.7 M1102.6 750.2 L1103.1 757.5 L1103.5 764.8 L1104 772.2 M1112 749.2 L1112.5 756.5 L1113 763.9 L1113.5 771.2" fill="none" stroke="#ffffff" stroke-width="1.1" opacity="1"/>

<path d="M861 451 L880 436 L898 426 L926 431 L910 452Z" fill="#a6f070" opacity=".85"/>
<path d="M870.2 444.8 L880.2 446 L890.2 447.2 L900.2 448.5 L910.2 449.8 M879.5 438.5 L888.5 439.8 L897.5 441 L906.5 442.2 L915.5 443.5 M898 426 L905 427.2 L912 428.5 L919 429.8 L926 431 M861 451 L870.2 444.8 L879.5 438.5 L888.8 432.2 L898 426 M872 452.2 L880.2 446 L888.5 439.8 L896.8 433.5 L905 427.2 M883 453.5 L890.2 447.2 L897.5 441 L904.8 434.8 L912 428.5 M905 456 L910.2 449.8 L915.5 443.5 L920.8 437.2 L926 431" fill="none" stroke="#ffffff" stroke-width="1.1" opacity="1"/>
<path d="M861 451 L872 452.2 L883 453.5 L894 454.8 L905 456 M888.8 432.2 L896.8 433.5 L904.8 434.8 L912.8 436 L920.8 437.2 M894 454.8 L900.2 448.5 L906.5 442.2 L912.8 436 L919 429.8" fill="none" stroke="#a8ee6a" stroke-width="1.1" opacity="1"/>

<path d="M1176 451 L1157 436 L1139 426 L1111 431 L1127 452Z" fill="#a6f070" opacity=".85"/>
<path d="M1176 451 L1165 452.2 L1154 453.5 L1143 454.8 L1132 456 M1166.8 444.8 L1156.8 446 L1146.8 447.2 L1136.8 448.5 L1126.8 449.8 M1157.5 438.5 L1148.5 439.8 L1139.5 441 L1130.5 442.2 L1121.5 443.5 M1165 452.2 L1156.8 446 L1148.5 439.8 L1140.2 433.5 L1132 427.2 M1154 453.5 L1146.8 447.2 L1139.5 441 L1132.2 434.8 L1125 428.5 M1132 456 L1126.8 449.8 L1121.5 443.5 L1116.2 437.2 L1111 431" fill="none" stroke="#ffffff" stroke-width="1.1" opacity="1"/>
<path d="M1148.2 432.2 L1140.2 433.5 L1132.2 434.8 L1124.2 436 L1116.2 437.2 M1139 426 L1132 427.2 L1125 428.5 L1118 429.8 L1111 431 M1176 451 L1166.8 444.8 L1157.5 438.5 L1148.2 432.2 L1139 426 M1143 454.8 L1136.8 448.5 L1130.5 442.2 L1124.2 436 L1118 429.8" fill="none" stroke="#a8ee6a" stroke-width="1.1" opacity="1"/>

<g clip-path="url(#cslL)">
<path d="M862 450 L845 480 L838 499 L826 540 L816 577 L804 625 L792 672 L784 716 L777 760 L767 800 L760 843 L762 868 L770 886 L834 886 L852 870 L867 843 L871 800 L875 762 L880 720 L886 690 L895 640 L897 600 L896 560 L898 520 L905 480 L925 432Z" fill="#ffffff" opacity=".10"/>
<path d="M862 450 C850.8 454.2 852 468.3 848 480 C844 491.7 842 503.8 838 520 C834 536.2 828.7 558 824 577 C819.3 596 813.8 612.2 810 634 C806.2 655.8 804.3 685.3 801 708 C797.7 730.7 793.7 751.5 790 770 C786.3 788.5 781.3 804 779 819 C776.7 834 776 848.8 776 860 C776 871.2 770.3 881.7 779 886 C787.7 890.3 818.2 890.3 828 886 C837.8 881.7 834.2 871.2 838 860 C841.8 848.8 847.3 834 851 819 C854.7 804 857.5 788.5 860 770 C862.5 751.5 865.5 730.7 866 708 C866.5 685.3 861.8 653.7 863 634 C864.2 614.3 869.2 605.7 873 590 C876.8 574.3 881.5 555 886 540 C890.5 525 895.2 514.2 900 500 C904.8 485.8 921.3 463.3 915 455 C908.7 446.7 873.2 445.8 862 450Z" fill="url(#garm)"/>
<g filter="url(#b8)">
<ellipse cx="858" cy="462" rx="24" ry="18" fill="#9cf05c" opacity="1"/>
<ellipse cx="848" cy="512" rx="17" ry="30" fill="#7cf4ee" opacity="1"/>
<ellipse cx="888" cy="458" rx="20" ry="22" fill="#a0f478" opacity="0.95"/>
<ellipse cx="880" cy="500" rx="14" ry="20" fill="#8cf4d8" opacity="0.9"/>
<ellipse cx="832" cy="600" rx="11" ry="36" fill="#b0f8f4" opacity="0.9"/>
<ellipse cx="850" cy="600" rx="8" ry="50" fill="#ffffff" opacity="0.9"/>
<ellipse cx="812" cy="700" rx="8" ry="40" fill="#e0f8f8" opacity="0.8"/>
<ellipse cx="838" cy="740" rx="10" ry="40" fill="#ffffff" opacity="0.95"/>
<ellipse cx="846" cy="790" rx="14" ry="22" fill="#90f4f4" opacity="0.95"/>
<ellipse cx="800" cy="840" rx="14" ry="18" fill="#ffffff" opacity="0.95"/>
<ellipse cx="822" cy="856" rx="14" ry="16" fill="#98f4f4" opacity="0.95"/>
<ellipse cx="858" cy="760" rx="6" ry="40" fill="#8c8c8c" opacity="0.6"/>
<ellipse cx="800" cy="780" rx="6" ry="30" fill="#909090" opacity="0.6"/>
</g>
<g filter="url(#b4)" opacity=".95" stroke="#ffffff" stroke-width="8" stroke-linecap="round">
<path d="M826 722 L858 762"/>
<path d="M790 820 L816 842"/>
<path d="M838 570 L850 610"/>
<path d="M812 640 L822 690"/>
</g></g>
<g clip-path="url(#cslR)">
<path d="M1175 450 L1192 480 L1199 499 L1211 540 L1221 577 L1233 625 L1245 672 L1253 716 L1260 760 L1270 800 L1277 843 L1275 868 L1267 886 L1203 886 L1185 870 L1170 843 L1166 800 L1162 762 L1157 720 L1151 690 L1142 640 L1140 600 L1141 560 L1139 520 L1132 480 L1112 432Z" fill="#ffffff" opacity=".10"/>
<path d="M1175 450 C1186.2 454.2 1185 468.3 1189 480 C1193 491.7 1195 503.8 1199 520 C1203 536.2 1208.3 558 1213 577 C1217.7 596 1223.2 612.2 1227 634 C1230.8 655.8 1232.7 685.3 1236 708 C1239.3 730.7 1243.3 751.5 1247 770 C1250.7 788.5 1255.7 804 1258 819 C1260.3 834 1261 848.8 1261 860 C1261 871.2 1266.7 881.7 1258 886 C1249.3 890.3 1218.8 890.3 1209 886 C1199.2 881.7 1202.8 871.2 1199 860 C1195.2 848.8 1189.7 834 1186 819 C1182.3 804 1179.5 788.5 1177 770 C1174.5 751.5 1171.5 730.7 1171 708 C1170.5 685.3 1175.2 653.7 1174 634 C1172.8 614.3 1167.8 605.7 1164 590 C1160.2 574.3 1155.5 555 1151 540 C1146.5 525 1141.8 514.2 1137 500 C1132.2 485.8 1115.7 463.3 1122 455 C1128.3 446.7 1163.8 445.8 1175 450Z" fill="url(#garm)"/>
<g filter="url(#b8)">
<ellipse cx="1179" cy="462" rx="24" ry="18" fill="#9cf05c" opacity="1"/>
<ellipse cx="1189" cy="512" rx="17" ry="30" fill="#7cf4ee" opacity="1"/>
<ellipse cx="1149" cy="458" rx="20" ry="22" fill="#a0f478" opacity="0.95"/>
<ellipse cx="1157" cy="500" rx="14" ry="20" fill="#8cf4d8" opacity="0.9"/>
<ellipse cx="1205" cy="600" rx="11" ry="36" fill="#b0f8f4" opacity="0.9"/>
<ellipse cx="1187" cy="600" rx="8" ry="50" fill="#ffffff" opacity="0.9"/>
<ellipse cx="1225" cy="700" rx="8" ry="40" fill="#e0f8f8" opacity="0.8"/>
<ellipse cx="1199" cy="740" rx="10" ry="40" fill="#ffffff" opacity="0.95"/>
<ellipse cx="1191" cy="790" rx="14" ry="22" fill="#90f4f4" opacity="0.95"/>
<ellipse cx="1237" cy="840" rx="14" ry="18" fill="#ffffff" opacity="0.95"/>
<ellipse cx="1215" cy="856" rx="14" ry="16" fill="#98f4f4" opacity="0.95"/>
<ellipse cx="1179" cy="760" rx="6" ry="40" fill="#8c8c8c" opacity="0.6"/>
<ellipse cx="1237" cy="780" rx="6" ry="30" fill="#909090" opacity="0.6"/>
</g>
<g filter="url(#b4)" opacity=".95" stroke="#ffffff" stroke-width="8" stroke-linecap="round">
<path d="M1211 722 L1179 762"/>
<path d="M1247 820 L1221 842"/>
<path d="M1199 570 L1187 610"/>
<path d="M1225 640 L1215 690"/>
</g></g>
<g clip-path="url(#cfrL)">
<g filter="url(#b8)">
<ellipse cx="945" cy="416" rx="32" ry="14" fill="#a0f050" opacity="1"/>
<ellipse cx="912" cy="443" rx="20" ry="18" fill="#78f0b8" opacity="1"/>
<ellipse cx="956" cy="470" rx="13" ry="42" fill="#a4f8d4" opacity="0.95"/>
<ellipse cx="935" cy="470" rx="10" ry="30" fill="#90f4c8" opacity="0.8"/>
<ellipse cx="940" cy="500" rx="10" ry="24" fill="#ffffff" opacity="0.8"/>
<ellipse cx="962" cy="560" rx="9" ry="40" fill="#e8fcf4" opacity="0.7"/>
<ellipse cx="940" cy="700" rx="22" ry="36" fill="#dadada" opacity="0.9"/>
<ellipse cx="966" cy="690" rx="10" ry="44" fill="#f0f0f0" opacity="0.85"/>
<ellipse cx="918" cy="700" rx="6" ry="44" fill="#b0b0b0" opacity="0.6"/>
<ellipse cx="930" cy="660" rx="6" ry="30" fill="#ffffff" opacity="0.8"/>
</g></g>
<g clip-path="url(#cfrR)">
<g filter="url(#b8)">
<ellipse cx="1092" cy="416" rx="32" ry="14" fill="#a0f050" opacity="1"/>
<ellipse cx="1125" cy="443" rx="20" ry="18" fill="#78f0b8" opacity="1"/>
<ellipse cx="1081" cy="470" rx="13" ry="42" fill="#a4f8d4" opacity="0.95"/>
<ellipse cx="1102" cy="470" rx="10" ry="30" fill="#90f4c8" opacity="0.8"/>
<ellipse cx="1097" cy="500" rx="10" ry="24" fill="#ffffff" opacity="0.8"/>
<ellipse cx="1075" cy="560" rx="9" ry="40" fill="#e8fcf4" opacity="0.7"/>
<ellipse cx="1097" cy="700" rx="22" ry="36" fill="#dadada" opacity="0.9"/>
<ellipse cx="1071" cy="690" rx="10" ry="44" fill="#f0f0f0" opacity="0.85"/>
<ellipse cx="1119" cy="700" rx="6" ry="44" fill="#b0b0b0" opacity="0.6"/>
<ellipse cx="1107" cy="660" rx="6" ry="30" fill="#ffffff" opacity="0.8"/>
</g></g>
<g clip-path="url(#cbraL)">
<path d="M903 528 L942 513 L960 527 L975 531 L975 636 L940 640 L916 628 L904 600Z M899 430 L928 428 L934 470 L942 513 L903 528 L900 470Z" fill="#f8ec3c"/>
<g filter="url(#b8)">
<ellipse cx="917" cy="592" rx="10" ry="26" fill="#e8452c" opacity=".95"/>
<ellipse cx="932" cy="590" rx="6" ry="30" fill="#f49a30" opacity=".8"/>
<ellipse cx="955" cy="575" rx="16" ry="22" fill="#d8f4d8" opacity=".9"/>
<ellipse cx="948" cy="618" rx="10" ry="7" fill="#f4c030" opacity=".6"/>
<ellipse cx="899" cy="470" rx="5" ry="50" fill="#e8402a" opacity=".9"/>
<ellipse cx="916" cy="470" rx="8" ry="50" fill="#f0a83c" opacity=".9"/>
</g></g>
<path d="M899 430 L902.6 429.8 L906.2 429.5 L909.9 429.2 L913.5 429 L917.1 428.8 L920.8 428.5 L924.4 428.2 L928 428 M899.1 433.8 L902.8 433.5 L906.4 433.1 L910.1 432.8 L913.8 432.5 L917.5 432.2 L921.1 431.9 L924.8 431.6 L928.5 431.3 M899.2 437.5 L902.9 437.2 L906.6 436.8 L910.3 436.4 L914.1 436.1 L917.8 435.7 L921.5 435.3 L925.2 434.9 L928.9 434.6 M899.3 441.3 L903 440.9 L906.8 440.4 L910.6 440 L914.3 439.6 L918.1 439.1 L921.9 438.7 L925.6 438.3 L929.4 437.8 M899.4 445.1 L903.2 444.6 L907 444.1 L910.8 443.6 L914.6 443.1 L918.4 442.6 L922.3 442.1 L926.1 441.6 L929.9 441.1 M899.5 448.9 L903.3 448.3 L907.2 447.7 L911 447.2 L914.9 446.6 L918.8 446.1 L922.6 445.5 L926.5 445 L930.3 444.4 M899.6 452.6 L903.5 452 L907.4 451.4 L911.3 450.8 L915.2 450.2 L919.1 449.5 L923 448.9 L926.9 448.3 L930.8 447.7 M899.7 456.4 L903.6 455.7 L907.6 455 L911.5 454.4 L915.5 453.7 L919.4 453 L923.4 452.3 L927.3 451.6 L931.3 451 M899.8 460.2 L903.8 459.4 L907.8 458.7 L911.8 457.9 L915.8 457.2 L919.8 456.5 L923.8 455.7 L927.7 455 L931.7 454.2 M899.8 463.9 L903.9 463.1 L907.9 462.3 L912 461.5 L916 460.7 L920.1 459.9 L924.1 459.1 L928.2 458.3 L932.2 457.5 M900.3 475.3 L904.4 474.3 L908.6 473.3 L912.8 472.3 L916.9 471.3 L921.1 470.3 L925.3 469.3 L929.5 468.4 L933.6 467.4 M900.5 479 L904.7 478 L908.9 476.9 L913.1 475.9 L917.3 474.8 L921.5 473.8 L925.7 472.7 L929.9 471.7 L934.1 470.6 M901.6 501.6 L906.2 500.2 L910.7 498.8 L915.2 497.3 L919.7 495.9 L924.2 494.5 L928.7 493.1 L933.2 491.6 L937.8 490.2 M902.2 512.9 L906.9 511.3 L911.6 509.7 L916.2 508.1 L920.9 506.4 L925.6 504.8 L930.2 503.2 L934.9 501.6 L939.6 500 M902.4 516.7 L907.1 515 L911.9 513.3 L916.6 511.6 L921.3 510 L926 508.3 L930.7 506.6 L935.5 504.9 L940.2 503.2 M902.8 524.2 L907.6 522.4 L912.5 520.6 L917.3 518.8 L922.1 517 L926.9 515.2 L931.7 513.4 L936.6 511.6 L941.4 509.7 M903 528 L907.9 526.1 L912.8 524.2 L917.6 522.4 L922.5 520.5 L927.4 518.6 L932.2 516.8 L937.1 514.9 L942 513 M899 430 L899.1 433.8 L899.2 437.5 L899.3 441.3 L899.4 445.1 L899.5 448.9 L899.6 452.6 L899.7 456.4 L899.8 460.2 L899.8 463.9 L899.9 467.7 L900.1 471.5 L900.3 475.3 L900.5 479 L900.7 482.8 L900.9 486.6 L901.1 490.3 L901.2 494.1 L901.4 497.9 L901.6 501.6 L901.8 505.4 L902 509.2 L902.2 512.9 L902.4 516.7 L902.6 520.5 L902.8 524.2 L903 528 M906.2 429.5 L906.4 433.1 L906.6 436.8 L906.8 440.4 L907 444.1 L907.2 447.7 L907.4 451.4 L907.6 455 L907.8 458.7 L907.9 462.3 L908.1 466 L908.3 469.6 L908.6 473.3 L908.9 476.9 L909.2 480.6 L909.5 484.2 L909.8 487.8 L910.1 491.5 L910.4 495.1 L910.7 498.8 L911 502.4 L911.3 506 L911.6 509.7 L911.9 513.3 L912.2 517 L912.5 520.6 L912.8 524.2 M913.5 429 L913.8 432.5 L914.1 436.1 L914.3 439.6 L914.6 443.1 L914.9 446.6 L915.2 450.2 L915.5 453.7 L915.8 457.2 L916 460.7 L916.3 464.3 L916.6 467.8 L916.9 471.3 L917.3 474.8 L917.7 478.3 L918.1 481.9 L918.5 485.4 L918.9 488.9 L919.3 492.4 L919.7 495.9 L920.1 499.4 L920.5 502.9 L920.9 506.4 L921.3 510 L921.7 513.5 L922.1 517 L922.5 520.5 M917.1 428.8 L917.5 432.2 L917.8 435.7 L918.1 439.1 L918.4 442.6 L918.8 446.1 L919.1 449.5 L919.4 453 L919.8 456.5 L920.1 459.9 L920.4 463.4 L920.8 466.9 L921.1 470.3 L921.5 473.8 L922 477.2 L922.4 480.7 L922.9 484.1 L923.3 487.6 L923.8 491 L924.2 494.5 L924.7 497.9 L925.1 501.4 L925.6 504.8 L926 508.3 L926.5 511.7 L926.9 515.2 L927.4 518.6 M920.8 428.5 L921.1 431.9 L921.5 435.3 L921.9 438.7 L922.3 442.1 L922.6 445.5 L923 448.9 L923.4 452.3 L923.8 455.7 L924.1 459.1 L924.5 462.5 L924.9 465.9 L925.3 469.3 L925.7 472.7 L926.2 476.1 L926.7 479.5 L927.2 482.9 L927.7 486.3 L928.2 489.7 L928.7 493.1 L929.2 496.4 L929.7 499.8 L930.2 503.2 L930.7 506.6 L931.2 510 L931.7 513.4 L932.2 516.8 M924.4 428.2 L924.8 431.6 L925.2 434.9 L925.6 438.3 L926.1 441.6 L926.5 445 L926.9 448.3 L927.3 451.6 L927.7 455 L928.2 458.3 L928.6 461.7 L929 465 L929.5 468.4 L929.9 471.7 L930.5 475 L931 478.3 L931.6 481.7 L932.1 485 L932.7 488.3 L933.2 491.6 L933.8 494.9 L934.4 498.3 L934.9 501.6 L935.5 504.9 L936 508.2 L936.6 511.6 L937.1 514.9" fill="none" stroke="#ffffff" stroke-width="0.9" opacity="1"/>
<path d="M900.1 471.5 L904.2 470.6 L908.3 469.6 L912.5 468.7 L916.6 467.8 L920.8 466.9 L924.9 465.9 L929 465 L933.2 464.1 M900.7 482.8 L904.9 481.7 L909.2 480.6 L913.4 479.5 L917.7 478.3 L922 477.2 L926.2 476.1 L930.5 475 L934.7 473.9 M900.9 486.6 L905.2 485.4 L909.5 484.2 L913.8 483 L918.1 481.9 L922.4 480.7 L926.7 479.5 L931 478.3 L935.3 477.2 M902 509.2 L906.6 507.6 L911.3 506 L915.9 504.5 L920.5 502.9 L925.1 501.4 L929.7 499.8 L934.4 498.3 L939 496.7 M909.9 429.2 L910.1 432.8 L910.3 436.4 L910.6 440 L910.8 443.6 L911 447.2 L911.3 450.8 L911.5 454.4 L911.8 457.9 L912 461.5 L912.2 465.1 L912.5 468.7 L912.8 472.3 L913.1 475.9 L913.4 479.5 L913.8 483 L914.1 486.6 L914.5 490.2 L914.8 493.8 L915.2 497.3 L915.5 500.9 L915.9 504.5 L916.2 508.1 L916.6 511.6 L916.9 515.2 L917.3 518.8 L917.6 522.4 M928 428 L928.5 431.3 L928.9 434.6 L929.4 437.8 L929.9 441.1 L930.3 444.4 L930.8 447.7 L931.3 451 L931.7 454.2 L932.2 457.5 L932.7 460.8 L933.2 464.1 L933.6 467.4 L934.1 470.6 L934.7 473.9 L935.3 477.2 L935.9 480.4 L936.5 483.7 L937.2 486.9 L937.8 490.2 L938.4 493.5 L939 496.7 L939.6 500 L940.2 503.2 L940.8 506.5 L941.4 509.7 L942 513" fill="none" stroke="#f6e04a" stroke-width="0.9" opacity="1"/>
<path d="M899.9 467.7 L904 466.9 L908.1 466 L912.2 465.1 L916.3 464.3 L920.4 463.4 L924.5 462.5 L928.6 461.7 L932.7 460.8 M901.1 490.3 L905.4 489.1 L909.8 487.8 L914.1 486.6 L918.5 485.4 L922.9 484.1 L927.2 482.9 L931.6 481.7 L935.9 480.4 M901.2 494.1 L905.7 492.8 L910.1 491.5 L914.5 490.2 L918.9 488.9 L923.3 487.6 L927.7 486.3 L932.1 485 L936.5 483.7 M901.4 497.9 L905.9 496.5 L910.4 495.1 L914.8 493.8 L919.3 492.4 L923.8 491 L928.2 489.7 L932.7 488.3 L937.2 486.9 M901.8 505.4 L906.4 503.9 L911 502.4 L915.5 500.9 L920.1 499.4 L924.7 497.9 L929.2 496.4 L933.8 494.9 L938.4 493.5 M902.6 520.5 L907.4 518.7 L912.2 517 L916.9 515.2 L921.7 513.5 L926.5 511.7 L931.2 510 L936 508.2 L940.8 506.5 M902.6 429.8 L902.8 433.5 L902.9 437.2 L903 440.9 L903.2 444.6 L903.3 448.3 L903.5 452 L903.6 455.7 L903.8 459.4 L903.9 463.1 L904 466.9 L904.2 470.6 L904.4 474.3 L904.7 478 L904.9 481.7 L905.2 485.4 L905.4 489.1 L905.7 492.8 L905.9 496.5 L906.2 500.2 L906.4 503.9 L906.6 507.6 L906.9 511.3 L907.1 515 L907.4 518.7 L907.6 522.4 L907.9 526.1" fill="none" stroke="#f0a030" stroke-width="0.9" opacity="1"/>

<path d="M903.1 532.7 L907.1 533.5 L911.1 534.4 L915.1 535.2 L919.1 535.9 L923 536.6 L927 537.2 L931 537.6 L935 538 L939 538.2 L943 538.3 L947 538.3 L951 538.2 L955 538 L959 537.7 L963 537.3 L967 536.8 L971 536.3 L975 535.8 M903.2 542 L907.2 542.9 L911.2 543.7 L915.2 544.5 L919.2 545.3 L923.1 546 L927.1 546.6 L931.1 547 L935.1 547.4 L939.1 547.6 L943.1 547.8 L947.1 547.8 L951.1 547.7 L955.1 547.5 L959 547.1 L963 546.8 L967 546.3 L971 545.8 L975 545.3 M903.6 569.9 L907.5 570.8 L911.5 571.7 L915.5 572.6 L919.5 573.4 L923.4 574.1 L927.4 574.7 L931.4 575.2 L935.3 575.6 L939.3 575.9 L943.3 576.1 L947.2 576.1 L951.2 576.1 L955.2 575.9 L959.1 575.6 L963.1 575.3 L967.1 574.9 L971 574.4 L975 574 M903.7 579.2 L907.7 580.2 L911.6 581.1 L915.6 581.9 L919.6 582.8 L923.5 583.5 L927.5 584.1 L931.4 584.6 L935.4 585.1 L939.4 585.4 L943.3 585.5 L947.3 585.6 L951.2 585.5 L955.2 585.4 L959.2 585.1 L963.1 584.8 L967.1 584.4 L971 584 L975 583.5 M903.8 583.9 L907.7 584.8 L911.7 585.7 L915.6 586.6 L919.6 587.4 L923.6 588.2 L927.5 588.8 L931.5 589.4 L935.4 589.8 L939.4 590.1 L943.3 590.3 L947.3 590.3 L951.3 590.3 L955.2 590.1 L959.2 589.9 L963.1 589.5 L967.1 589.2 L971 588.7 L975 588.3 M906.8 606.6 L910.6 607.6 L914.4 608.6 L918.2 609.5 L922 610.4 L925.8 611.2 L929.6 611.9 L933.3 612.5 L937.1 613 L940.9 613.4 L944.7 613.6 L948.5 613.7 L952.3 613.8 L956.1 613.7 L959.9 613.5 L963.6 613.2 L967.4 612.9 L971.2 612.5 L975 612.1 M908.7 610.9 L912.3 611.9 L916 612.9 L919.7 613.9 L923.4 614.8 L927.1 615.6 L930.8 616.4 L934.5 617 L938.1 617.5 L941.8 617.9 L945.5 618.2 L949.2 618.3 L952.9 618.4 L956.6 618.3 L960.3 618.1 L963.9 617.9 L967.6 617.6 L971.3 617.3 L975 616.9 M916 628 L919.3 629.1 L922.6 630.3 L925.8 631.3 L929.1 632.3 L932.4 633.3 L935.7 634.1 L938.9 634.9 L942.2 635.5 L945.5 636 L948.8 636.4 L952.1 636.6 L955.3 636.8 L958.6 636.8 L961.9 636.8 L965.2 636.7 L968.4 636.5 L971.7 636.3 L975 636 M911 529.7 L911.1 534.4 L911.1 539 L911.2 543.7 L911.2 548.4 L911.3 553.1 L911.3 557.7 L911.4 562.4 L911.5 567.1 L911.5 571.7 L911.6 576.4 L911.6 581.1 L911.7 585.7 L911.7 590.4 L911.8 595.1 L911.9 599.8 L912.8 604.2 L914.4 608.6 L916 612.9 L917.7 617.2 L919.3 621.6 L920.9 625.9 L922.6 630.3 M915 530.5 L915.1 535.2 L915.1 539.9 L915.2 544.5 L915.2 549.2 L915.3 553.9 L915.3 558.6 L915.4 563.2 L915.4 567.9 L915.5 572.6 L915.5 577.3 L915.6 581.9 L915.6 586.6 L915.7 591.3 L915.8 596 L915.8 600.6 L916.7 605.2 L918.2 609.5 L919.7 613.9 L921.2 618.2 L922.8 622.6 L924.3 627 L925.8 631.3 M919 531.2 L919.1 535.9 L919.1 540.6 L919.2 545.3 L919.2 550 L919.3 554.7 L919.3 559.3 L919.4 564 L919.4 568.7 L919.5 573.4 L919.5 578.1 L919.6 582.8 L919.6 587.4 L919.7 592.1 L919.7 596.8 L919.8 601.5 L920.5 606 L922 610.4 L923.4 614.8 L924.8 619.2 L926.3 623.6 L927.7 628 L929.1 632.3 M923 531.9 L923 536.6 L923.1 541.3 L923.1 546 L923.2 550.7 L923.2 555.3 L923.3 560 L923.3 564.7 L923.4 569.4 L923.4 574.1 L923.5 578.8 L923.5 583.5 L923.6 588.2 L923.6 592.9 L923.7 597.5 L923.7 602.2 L924.4 606.8 L925.8 611.2 L927.1 615.6 L928.4 620 L929.7 624.5 L931.1 628.9 L932.4 633.3 M927 532.5 L927 537.2 L927.1 541.9 L927.1 546.6 L927.2 551.2 L927.2 555.9 L927.3 560.6 L927.3 565.3 L927.3 570 L927.4 574.7 L927.4 579.4 L927.5 584.1 L927.5 588.8 L927.6 593.5 L927.6 598.2 L927.6 602.9 L928.3 607.5 L929.6 611.9 L930.8 616.4 L932 620.8 L933.2 625.2 L934.4 629.7 L935.7 634.1 M931 532.9 L931 537.6 L931.1 542.3 L931.1 547 L931.2 551.7 L931.2 556.4 L931.2 561.1 L931.3 565.8 L931.3 570.5 L931.4 575.2 L931.4 579.9 L931.4 584.6 L931.5 589.4 L931.5 594.1 L931.6 598.8 L931.6 603.5 L932.2 608 L933.3 612.5 L934.5 617 L935.6 621.5 L936.7 625.9 L937.8 630.4 L938.9 634.9 M935 533.3 L935 538 L935.1 542.7 L935.1 547.4 L935.1 552.1 L935.2 556.8 L935.2 561.5 L935.3 566.2 L935.3 570.9 L935.3 575.6 L935.4 580.4 L935.4 585.1 L935.4 589.8 L935.5 594.5 L935.5 599.2 L935.5 603.9 L936.1 608.5 L937.1 613 L938.1 617.5 L939.2 622 L940.2 626.5 L941.2 631 L942.2 635.5 M951 533.5 L951 538.2 L951 542.9 L951.1 547.7 L951.1 552.4 L951.1 557.1 L951.1 561.9 L951.2 566.6 L951.2 571.3 L951.2 576.1 L951.2 580.8 L951.2 585.5 L951.3 590.3 L951.3 595 L951.3 599.7 L951.3 604.5 L951.7 609.1 L952.3 613.8 L952.9 618.4 L953.5 623 L954.1 627.6 L954.7 632.2 L955.3 636.8 M959 532.9 L959 537.7 L959 542.4 L959 547.1 L959.1 551.9 L959.1 556.6 L959.1 561.4 L959.1 566.1 L959.1 570.9 L959.1 575.6 L959.1 580.4 L959.2 585.1 L959.2 589.9 L959.2 594.6 L959.2 599.4 L959.2 604.1 L959.4 608.8 L959.9 613.5 L960.3 618.1 L960.7 622.8 L961.1 627.5 L961.5 632.1 L961.9 636.8 M971 531.5 L971 536.3 L971 541.1 L971 545.8 L971 550.6 L971 555.4 L971 560.1 L971 564.9 L971 569.7 L971 574.4 L971 579.2 L971 584 L971 588.7 L971 593.5 L971.1 598.3 L971.1 603 L971.1 607.8 L971.2 612.5 L971.3 617.3 L971.4 622 L971.5 626.8 L971.6 631.5 L971.7 636.3" fill="none" stroke="#f8ea40" stroke-width="0.9" opacity="1"/>
<path d="M903 528 L907 528.9 L911 529.7 L915 530.5 L919 531.2 L923 531.9 L927 532.5 L931 532.9 L935 533.3 L939 533.5 L943 533.6 L947 533.6 L951 533.5 L955 533.2 L959 532.9 L963 532.5 L967 532 L971 531.5 L975 531 M903.3 551.3 L907.3 552.2 L911.3 553.1 L915.3 553.9 L919.3 554.7 L923.2 555.3 L927.2 555.9 L931.2 556.4 L935.2 556.8 L939.2 557.1 L943.1 557.2 L947.1 557.2 L951.1 557.1 L955.1 556.9 L959.1 556.6 L963.1 556.3 L967 555.8 L971 555.4 L975 554.9 M903.5 560.6 L907.4 561.5 L911.4 562.4 L915.4 563.2 L919.4 564 L923.3 564.7 L927.3 565.3 L931.3 565.8 L935.3 566.2 L939.2 566.5 L943.2 566.7 L947.2 566.7 L951.2 566.6 L955.1 566.4 L959.1 566.1 L963.1 565.8 L967.1 565.4 L971 564.9 L975 564.4 M903.5 565.3 L907.5 566.2 L911.5 567.1 L915.4 567.9 L919.4 568.7 L923.4 569.4 L927.3 570 L931.3 570.5 L935.3 570.9 L939.3 571.2 L943.2 571.4 L947.2 571.4 L951.2 571.3 L955.1 571.2 L959.1 570.9 L963.1 570.5 L967.1 570.1 L971 569.7 L975 569.2 M903.9 593.2 L907.9 594.2 L911.8 595.1 L915.8 596 L919.7 596.8 L923.7 597.5 L927.6 598.2 L931.6 598.8 L935.5 599.2 L939.5 599.5 L943.4 599.7 L947.4 599.8 L951.3 599.7 L955.3 599.6 L959.2 599.4 L963.2 599 L967.1 598.7 L971.1 598.3 L975 597.8 M904 597.9 L907.9 598.8 L911.9 599.8 L915.8 600.6 L919.8 601.5 L923.7 602.2 L927.6 602.9 L931.6 603.5 L935.5 603.9 L939.5 604.2 L943.4 604.4 L947.4 604.5 L951.3 604.5 L955.3 604.3 L959.2 604.1 L963.2 603.8 L967.1 603.4 L971.1 603 L975 602.6 M905 602.3 L908.9 603.3 L912.8 604.2 L916.7 605.2 L920.5 606 L924.4 606.8 L928.3 607.5 L932.2 608 L936.1 608.5 L940 608.8 L943.9 609.1 L947.8 609.2 L951.7 609.1 L955.6 609 L959.4 608.8 L963.3 608.5 L967.2 608.2 L971.1 607.8 L975 607.4 M910.5 615.2 L914.1 616.2 L917.7 617.2 L921.2 618.2 L924.8 619.2 L928.4 620 L932 620.8 L935.6 621.5 L939.2 622 L942.7 622.4 L946.3 622.7 L949.9 622.9 L953.5 623 L957.1 622.9 L960.7 622.8 L964.2 622.6 L967.8 622.3 L971.4 622 L975 621.7 M903 528 L903.1 532.7 L903.1 537.3 L903.2 542 L903.3 546.6 L903.3 551.3 L903.4 555.9 L903.5 560.6 L903.5 565.3 L903.6 569.9 L903.6 574.6 L903.7 579.2 L903.8 583.9 L903.8 588.5 L903.9 593.2 L904 597.9 L905 602.3 L906.8 606.6 L908.7 610.9 L910.5 615.2 L912.3 619.4 L914.2 623.7 L916 628 M907 528.9 L907.1 533.5 L907.1 538.2 L907.2 542.9 L907.2 547.5 L907.3 552.2 L907.4 556.8 L907.4 561.5 L907.5 566.2 L907.5 570.8 L907.6 575.5 L907.7 580.2 L907.7 584.8 L907.8 589.5 L907.9 594.2 L907.9 598.8 L908.9 603.3 L910.6 607.6 L912.3 611.9 L914.1 616.2 L915.8 620.5 L917.5 624.8 L919.3 629.1 M939 533.5 L939 538.2 L939.1 542.9 L939.1 547.6 L939.1 552.4 L939.2 557.1 L939.2 561.8 L939.2 566.5 L939.3 571.2 L939.3 575.9 L939.3 580.7 L939.4 585.4 L939.4 590.1 L939.4 594.8 L939.5 599.5 L939.5 604.2 L940 608.8 L940.9 613.4 L941.8 617.9 L942.7 622.4 L943.7 626.9 L944.6 631.5 L945.5 636 M943 533.6 L943 538.3 L943.1 543 L943.1 547.8 L943.1 552.5 L943.1 557.2 L943.2 561.9 L943.2 566.7 L943.2 571.4 L943.3 576.1 L943.3 580.8 L943.3 585.5 L943.3 590.3 L943.4 595 L943.4 599.7 L943.4 604.4 L943.9 609.1 L944.7 613.6 L945.5 618.2 L946.3 622.7 L947.1 627.3 L948 631.8 L948.8 636.4 M947 533.6 L947 538.3 L947.1 543 L947.1 547.8 L947.1 552.5 L947.1 557.2 L947.2 562 L947.2 566.7 L947.2 571.4 L947.2 576.1 L947.3 580.9 L947.3 585.6 L947.3 590.3 L947.3 595.1 L947.4 599.8 L947.4 604.5 L947.8 609.2 L948.5 613.7 L949.2 618.3 L949.9 622.9 L950.6 627.5 L951.3 632.1 L952.1 636.6 M975 531 L975 535.8 L975 540.5 L975 545.3 L975 550.1 L975 554.9 L975 559.6 L975 564.4 L975 569.2 L975 574 L975 578.7 L975 583.5 L975 588.3 L975 593 L975 597.8 L975 602.6 L975 607.4 L975 612.1 L975 616.9 L975 621.7 L975 626.5 L975 631.2 L975 636" fill="none" stroke="#ffffff" stroke-width="0.9" opacity="1"/>
<path d="M903.1 537.3 L907.1 538.2 L911.1 539 L915.1 539.9 L919.1 540.6 L923.1 541.3 L927.1 541.9 L931.1 542.3 L935.1 542.7 L939.1 542.9 L943.1 543 L947.1 543 L951 542.9 L955 542.7 L959 542.4 L963 542 L967 541.6 L971 541.1 L975 540.5 M903.3 546.6 L907.2 547.5 L911.2 548.4 L915.2 549.2 L919.2 550 L923.2 550.7 L927.2 551.2 L931.2 551.7 L935.1 552.1 L939.1 552.4 L943.1 552.5 L947.1 552.5 L951.1 552.4 L955.1 552.2 L959.1 551.9 L963 551.5 L967 551.1 L971 550.6 L975 550.1 M903.4 555.9 L907.4 556.8 L911.3 557.7 L915.3 558.6 L919.3 559.3 L923.3 560 L927.3 560.6 L931.2 561.1 L935.2 561.5 L939.2 561.8 L943.2 561.9 L947.2 562 L951.1 561.9 L955.1 561.7 L959.1 561.4 L963.1 561 L967 560.6 L971 560.1 L975 559.6 M903.6 574.6 L907.6 575.5 L911.6 576.4 L915.5 577.3 L919.5 578.1 L923.5 578.8 L927.4 579.4 L931.4 579.9 L935.4 580.4 L939.3 580.7 L943.3 580.8 L947.3 580.9 L951.2 580.8 L955.2 580.6 L959.1 580.4 L963.1 580 L967.1 579.6 L971 579.2 L975 578.7 M903.8 588.5 L907.8 589.5 L911.7 590.4 L915.7 591.3 L919.7 592.1 L923.6 592.9 L927.6 593.5 L931.5 594.1 L935.5 594.5 L939.4 594.8 L943.4 595 L947.3 595.1 L951.3 595 L955.2 594.9 L959.2 594.6 L963.1 594.3 L967.1 593.9 L971 593.5 L975 593 M912.3 619.4 L915.8 620.5 L919.3 621.6 L922.8 622.6 L926.3 623.6 L929.7 624.5 L933.2 625.2 L936.7 625.9 L940.2 626.5 L943.7 626.9 L947.1 627.3 L950.6 627.5 L954.1 627.6 L957.6 627.6 L961.1 627.5 L964.6 627.3 L968 627 L971.5 626.8 L975 626.5 M914.2 623.7 L917.5 624.8 L920.9 625.9 L924.3 627 L927.7 628 L931.1 628.9 L934.4 629.7 L937.8 630.4 L941.2 631 L944.6 631.5 L948 631.8 L951.3 632.1 L954.7 632.2 L958.1 632.2 L961.5 632.1 L964.9 632 L968.2 631.8 L971.6 631.5 L975 631.2 M955 533.2 L955 538 L955 542.7 L955.1 547.5 L955.1 552.2 L955.1 556.9 L955.1 561.7 L955.1 566.4 L955.1 571.2 L955.2 575.9 L955.2 580.6 L955.2 585.4 L955.2 590.1 L955.2 594.9 L955.3 599.6 L955.3 604.3 L955.6 609 L956.1 613.7 L956.6 618.3 L957.1 622.9 L957.6 627.6 L958.1 632.2 L958.6 636.8 M963 532.5 L963 537.3 L963 542 L963 546.8 L963 551.5 L963.1 556.3 L963.1 561 L963.1 565.8 L963.1 570.5 L963.1 575.3 L963.1 580 L963.1 584.8 L963.1 589.5 L963.1 594.3 L963.2 599 L963.2 603.8 L963.3 608.5 L963.6 613.2 L963.9 617.9 L964.2 622.6 L964.6 627.3 L964.9 632 L965.2 636.7 M967 532 L967 536.8 L967 541.6 L967 546.3 L967 551.1 L967 555.8 L967 560.6 L967.1 565.4 L967.1 570.1 L967.1 574.9 L967.1 579.6 L967.1 584.4 L967.1 589.2 L967.1 593.9 L967.1 598.7 L967.1 603.4 L967.2 608.2 L967.4 612.9 L967.6 617.6 L967.8 622.3 L968 627 L968.2 631.8 L968.4 636.5" fill="none" stroke="#f0a030" stroke-width="0.9" opacity="1"/>

<g clip-path="url(#cbraR)">
<path d="M1134 528 L1095 513 L1077 527 L1062 531 L1062 636 L1097 640 L1121 628 L1133 600Z M1138 430 L1109 428 L1103 470 L1095 513 L1134 528 L1137 470Z" fill="#f8ec3c"/>
<g filter="url(#b8)">
<ellipse cx="1120" cy="592" rx="10" ry="26" fill="#e8452c" opacity=".95"/>
<ellipse cx="1105" cy="590" rx="6" ry="30" fill="#f49a30" opacity=".8"/>
<ellipse cx="1082" cy="575" rx="16" ry="22" fill="#a0ec50" opacity=".9"/>
<ellipse cx="1089" cy="618" rx="10" ry="7" fill="#f4c030" opacity=".6"/>
<ellipse cx="1138" cy="470" rx="5" ry="50" fill="#e8402a" opacity=".9"/>
<ellipse cx="1121" cy="470" rx="8" ry="50" fill="#f0a83c" opacity=".9"/>
</g></g>
<path d="M1138 430 L1134.4 429.8 L1130.8 429.5 L1127.1 429.2 L1123.5 429 L1119.9 428.8 L1116.2 428.5 L1112.6 428.2 L1109 428 M1137.7 441.3 L1134 440.9 L1130.2 440.4 L1126.4 440 L1122.7 439.6 L1118.9 439.1 L1115.1 438.7 L1111.4 438.3 L1107.6 437.8 M1137.5 448.9 L1133.7 448.3 L1129.8 447.7 L1126 447.2 L1122.1 446.6 L1118.2 446.1 L1114.4 445.5 L1110.5 445 L1106.7 444.4 M1137.3 456.4 L1133.4 455.7 L1129.4 455 L1125.5 454.4 L1121.5 453.7 L1117.6 453 L1113.6 452.3 L1109.7 451.6 L1105.7 451 M1137.2 463.9 L1133.1 463.1 L1129.1 462.3 L1125 461.5 L1121 460.7 L1116.9 459.9 L1112.9 459.1 L1108.8 458.3 L1104.8 457.5 M1136.9 471.5 L1132.8 470.6 L1128.7 469.6 L1124.5 468.7 L1120.4 467.8 L1116.2 466.9 L1112.1 465.9 L1108 465 L1103.8 464.1 M1136.7 475.3 L1132.6 474.3 L1128.4 473.3 L1124.2 472.3 L1120.1 471.3 L1115.9 470.3 L1111.7 469.3 L1107.5 468.4 L1103.4 467.4 M1136.3 482.8 L1132.1 481.7 L1127.8 480.6 L1123.6 479.5 L1119.3 478.3 L1115 477.2 L1110.8 476.1 L1106.5 475 L1102.3 473.9 M1136.1 486.6 L1131.8 485.4 L1127.5 484.2 L1123.2 483 L1118.9 481.9 L1114.6 480.7 L1110.3 479.5 L1106 478.3 L1101.7 477.2 M1135 509.2 L1130.4 507.6 L1125.7 506 L1121.1 504.5 L1116.5 502.9 L1111.9 501.4 L1107.3 499.8 L1102.6 498.3 L1098 496.7 M1134.8 512.9 L1130.1 511.3 L1125.4 509.7 L1120.8 508.1 L1116.1 506.4 L1111.4 504.8 L1106.8 503.2 L1102.1 501.6 L1097.4 500 M1134 528 L1129.1 526.1 L1124.2 524.2 L1119.4 522.4 L1114.5 520.5 L1109.6 518.6 L1104.8 516.8 L1099.9 514.9 L1095 513 M1138 430 L1137.9 433.8 L1137.8 437.5 L1137.7 441.3 L1137.6 445.1 L1137.5 448.9 L1137.4 452.6 L1137.3 456.4 L1137.2 460.2 L1137.2 463.9 L1137.1 467.7 L1136.9 471.5 L1136.7 475.3 L1136.5 479 L1136.3 482.8 L1136.1 486.6 L1135.9 490.3 L1135.8 494.1 L1135.6 497.9 L1135.4 501.6 L1135.2 505.4 L1135 509.2 L1134.8 512.9 L1134.6 516.7 L1134.4 520.5 L1134.2 524.2 L1134 528 M1123.5 429 L1123.2 432.5 L1122.9 436.1 L1122.7 439.6 L1122.4 443.1 L1122.1 446.6 L1121.8 450.2 L1121.5 453.7 L1121.2 457.2 L1121 460.7 L1120.7 464.3 L1120.4 467.8 L1120.1 471.3 L1119.7 474.8 L1119.3 478.3 L1118.9 481.9 L1118.5 485.4 L1118.1 488.9 L1117.7 492.4 L1117.3 495.9 L1116.9 499.4 L1116.5 502.9 L1116.1 506.4 L1115.7 510 L1115.3 513.5 L1114.9 517 L1114.5 520.5 M1116.2 428.5 L1115.9 431.9 L1115.5 435.3 L1115.1 438.7 L1114.7 442.1 L1114.4 445.5 L1114 448.9 L1113.6 452.3 L1113.2 455.7 L1112.9 459.1 L1112.5 462.5 L1112.1 465.9 L1111.7 469.3 L1111.3 472.7 L1110.8 476.1 L1110.3 479.5 L1109.8 482.9 L1109.3 486.3 L1108.8 489.7 L1108.3 493.1 L1107.8 496.4 L1107.3 499.8 L1106.8 503.2 L1106.3 506.6 L1105.8 510 L1105.3 513.4 L1104.8 516.8" fill="none" stroke="#ffffff" stroke-width="0.9" opacity="1"/>
<path d="M1137.9 433.8 L1134.2 433.5 L1130.6 433.1 L1126.9 432.8 L1123.2 432.5 L1119.5 432.2 L1115.9 431.9 L1112.2 431.6 L1108.5 431.3 M1137.8 437.5 L1134.1 437.2 L1130.4 436.8 L1126.7 436.4 L1122.9 436.1 L1119.2 435.7 L1115.5 435.3 L1111.8 434.9 L1108.1 434.6 M1137.6 445.1 L1133.8 444.6 L1130 444.1 L1126.2 443.6 L1122.4 443.1 L1118.6 442.6 L1114.7 442.1 L1110.9 441.6 L1107.1 441.1 M1137.4 452.6 L1133.5 452 L1129.6 451.4 L1125.7 450.8 L1121.8 450.2 L1117.9 449.5 L1114 448.9 L1110.1 448.3 L1106.2 447.7 M1137.2 460.2 L1133.2 459.4 L1129.2 458.7 L1125.2 457.9 L1121.2 457.2 L1117.2 456.5 L1113.2 455.7 L1109.3 455 L1105.3 454.2 M1137.1 467.7 L1133 466.9 L1128.9 466 L1124.8 465.1 L1120.7 464.3 L1116.6 463.4 L1112.5 462.5 L1108.4 461.7 L1104.3 460.8 M1136.5 479 L1132.3 478 L1128.1 476.9 L1123.9 475.9 L1119.7 474.8 L1115.5 473.8 L1111.3 472.7 L1107.1 471.7 L1102.9 470.6 M1135.9 490.3 L1131.6 489.1 L1127.2 487.8 L1122.9 486.6 L1118.5 485.4 L1114.1 484.1 L1109.8 482.9 L1105.4 481.7 L1101.1 480.4 M1135.8 494.1 L1131.3 492.8 L1126.9 491.5 L1122.5 490.2 L1118.1 488.9 L1113.7 487.6 L1109.3 486.3 L1104.9 485 L1100.5 483.7 M1135.6 497.9 L1131.1 496.5 L1126.6 495.1 L1122.2 493.8 L1117.7 492.4 L1113.2 491 L1108.8 489.7 L1104.3 488.3 L1099.8 486.9 M1135.4 501.6 L1130.8 500.2 L1126.3 498.8 L1121.8 497.3 L1117.3 495.9 L1112.8 494.5 L1108.3 493.1 L1103.8 491.6 L1099.2 490.2 M1135.2 505.4 L1130.6 503.9 L1126 502.4 L1121.5 500.9 L1116.9 499.4 L1112.3 497.9 L1107.8 496.4 L1103.2 494.9 L1098.6 493.5 M1134.6 516.7 L1129.9 515 L1125.1 513.3 L1120.4 511.6 L1115.7 510 L1111 508.3 L1106.3 506.6 L1101.5 504.9 L1096.8 503.2 M1134.4 520.5 L1129.6 518.7 L1124.8 517 L1120.1 515.2 L1115.3 513.5 L1110.5 511.7 L1105.8 510 L1101 508.2 L1096.2 506.5 M1134.2 524.2 L1129.4 522.4 L1124.5 520.6 L1119.7 518.8 L1114.9 517 L1110.1 515.2 L1105.3 513.4 L1100.4 511.6 L1095.6 509.7 M1130.8 429.5 L1130.6 433.1 L1130.4 436.8 L1130.2 440.4 L1130 444.1 L1129.8 447.7 L1129.6 451.4 L1129.4 455 L1129.2 458.7 L1129.1 462.3 L1128.9 466 L1128.7 469.6 L1128.4 473.3 L1128.1 476.9 L1127.8 480.6 L1127.5 484.2 L1127.2 487.8 L1126.9 491.5 L1126.6 495.1 L1126.3 498.8 L1126 502.4 L1125.7 506 L1125.4 509.7 L1125.1 513.3 L1124.8 517 L1124.5 520.6 L1124.2 524.2 M1127.1 429.2 L1126.9 432.8 L1126.7 436.4 L1126.4 440 L1126.2 443.6 L1126 447.2 L1125.7 450.8 L1125.5 454.4 L1125.2 457.9 L1125 461.5 L1124.8 465.1 L1124.5 468.7 L1124.2 472.3 L1123.9 475.9 L1123.6 479.5 L1123.2 483 L1122.9 486.6 L1122.5 490.2 L1122.2 493.8 L1121.8 497.3 L1121.5 500.9 L1121.1 504.5 L1120.8 508.1 L1120.4 511.6 L1120.1 515.2 L1119.7 518.8 L1119.4 522.4 M1119.9 428.8 L1119.5 432.2 L1119.2 435.7 L1118.9 439.1 L1118.6 442.6 L1118.2 446.1 L1117.9 449.5 L1117.6 453 L1117.2 456.5 L1116.9 459.9 L1116.6 463.4 L1116.2 466.9 L1115.9 470.3 L1115.5 473.8 L1115 477.2 L1114.6 480.7 L1114.1 484.1 L1113.7 487.6 L1113.2 491 L1112.8 494.5 L1112.3 497.9 L1111.9 501.4 L1111.4 504.8 L1111 508.3 L1110.5 511.7 L1110.1 515.2 L1109.6 518.6" fill="none" stroke="#f6e04a" stroke-width="0.9" opacity="1"/>
<path d="M1134.4 429.8 L1134.2 433.5 L1134.1 437.2 L1134 440.9 L1133.8 444.6 L1133.7 448.3 L1133.5 452 L1133.4 455.7 L1133.2 459.4 L1133.1 463.1 L1133 466.9 L1132.8 470.6 L1132.6 474.3 L1132.3 478 L1132.1 481.7 L1131.8 485.4 L1131.6 489.1 L1131.3 492.8 L1131.1 496.5 L1130.8 500.2 L1130.6 503.9 L1130.4 507.6 L1130.1 511.3 L1129.9 515 L1129.6 518.7 L1129.4 522.4 L1129.1 526.1 M1112.6 428.2 L1112.2 431.6 L1111.8 434.9 L1111.4 438.3 L1110.9 441.6 L1110.5 445 L1110.1 448.3 L1109.7 451.6 L1109.3 455 L1108.8 458.3 L1108.4 461.7 L1108 465 L1107.5 468.4 L1107.1 471.7 L1106.5 475 L1106 478.3 L1105.4 481.7 L1104.9 485 L1104.3 488.3 L1103.8 491.6 L1103.2 494.9 L1102.6 498.3 L1102.1 501.6 L1101.5 504.9 L1101 508.2 L1100.4 511.6 L1099.9 514.9 M1109 428 L1108.5 431.3 L1108.1 434.6 L1107.6 437.8 L1107.1 441.1 L1106.7 444.4 L1106.2 447.7 L1105.7 451 L1105.3 454.2 L1104.8 457.5 L1104.3 460.8 L1103.8 464.1 L1103.4 467.4 L1102.9 470.6 L1102.3 473.9 L1101.7 477.2 L1101.1 480.4 L1100.5 483.7 L1099.8 486.9 L1099.2 490.2 L1098.6 493.5 L1098 496.7 L1097.4 500 L1096.8 503.2 L1096.2 506.5 L1095.6 509.7 L1095 513" fill="none" stroke="#f0a030" stroke-width="0.9" opacity="1"/>

<path d="M1133.9 532.7 L1129.9 533.5 L1125.9 534.4 L1121.9 535.2 L1117.9 535.9 L1114 536.6 L1110 537.2 L1106 537.6 L1102 538 L1098 538.2 L1094 538.3 L1090 538.3 L1086 538.2 L1082 538 L1078 537.7 L1074 537.3 L1070 536.8 L1066 536.3 L1062 535.8 M1133.9 537.3 L1129.9 538.2 L1125.9 539 L1121.9 539.9 L1117.9 540.6 L1113.9 541.3 L1109.9 541.9 L1105.9 542.3 L1101.9 542.7 L1097.9 542.9 L1093.9 543 L1089.9 543 L1086 542.9 L1082 542.7 L1078 542.4 L1074 542 L1070 541.6 L1066 541.1 L1062 540.5 M1133.8 542 L1129.8 542.9 L1125.8 543.7 L1121.8 544.5 L1117.8 545.3 L1113.9 546 L1109.9 546.6 L1105.9 547 L1101.9 547.4 L1097.9 547.6 L1093.9 547.8 L1089.9 547.8 L1085.9 547.7 L1081.9 547.5 L1078 547.1 L1074 546.8 L1070 546.3 L1066 545.8 L1062 545.3 M1133.7 551.3 L1129.7 552.2 L1125.7 553.1 L1121.7 553.9 L1117.7 554.7 L1113.8 555.3 L1109.8 555.9 L1105.8 556.4 L1101.8 556.8 L1097.8 557.1 L1093.9 557.2 L1089.9 557.2 L1085.9 557.1 L1081.9 556.9 L1077.9 556.6 L1073.9 556.3 L1070 555.8 L1066 555.4 L1062 554.9 M1133.6 555.9 L1129.6 556.8 L1125.7 557.7 L1121.7 558.6 L1117.7 559.3 L1113.7 560 L1109.7 560.6 L1105.8 561.1 L1101.8 561.5 L1097.8 561.8 L1093.8 561.9 L1089.8 562 L1085.9 561.9 L1081.9 561.7 L1077.9 561.4 L1073.9 561 L1070 560.6 L1066 560.1 L1062 559.6 M1133.4 574.6 L1129.4 575.5 L1125.4 576.4 L1121.5 577.3 L1117.5 578.1 L1113.5 578.8 L1109.6 579.4 L1105.6 579.9 L1101.6 580.4 L1097.7 580.7 L1093.7 580.8 L1089.7 580.9 L1085.8 580.8 L1081.8 580.6 L1077.9 580.4 L1073.9 580 L1069.9 579.6 L1066 579.2 L1062 578.7 M1133.3 579.2 L1129.3 580.2 L1125.4 581.1 L1121.4 581.9 L1117.4 582.8 L1113.5 583.5 L1109.5 584.1 L1105.6 584.6 L1101.6 585.1 L1097.6 585.4 L1093.7 585.5 L1089.7 585.6 L1085.8 585.5 L1081.8 585.4 L1077.8 585.1 L1073.9 584.8 L1069.9 584.4 L1066 584 L1062 583.5 M1133.2 588.5 L1129.2 589.5 L1125.3 590.4 L1121.3 591.3 L1117.3 592.1 L1113.4 592.9 L1109.4 593.5 L1105.5 594.1 L1101.5 594.5 L1097.6 594.8 L1093.6 595 L1089.7 595.1 L1085.7 595 L1081.8 594.9 L1077.8 594.6 L1073.9 594.3 L1069.9 593.9 L1066 593.5 L1062 593 M1133.1 593.2 L1129.1 594.2 L1125.2 595.1 L1121.2 596 L1117.3 596.8 L1113.3 597.5 L1109.4 598.2 L1105.4 598.8 L1101.5 599.2 L1097.5 599.5 L1093.6 599.7 L1089.6 599.8 L1085.7 599.7 L1081.7 599.6 L1077.8 599.4 L1073.8 599 L1069.9 598.7 L1065.9 598.3 L1062 597.8 M1133 597.9 L1129.1 598.8 L1125.1 599.8 L1121.2 600.6 L1117.2 601.5 L1113.3 602.2 L1109.4 602.9 L1105.4 603.5 L1101.5 603.9 L1097.5 604.2 L1093.6 604.4 L1089.6 604.5 L1085.7 604.5 L1081.7 604.3 L1077.8 604.1 L1073.8 603.8 L1069.9 603.4 L1065.9 603 L1062 602.6 M1132 602.3 L1128.1 603.3 L1124.2 604.2 L1120.3 605.2 L1116.5 606 L1112.6 606.8 L1108.7 607.5 L1104.8 608 L1100.9 608.5 L1097 608.8 L1093.1 609.1 L1089.2 609.2 L1085.3 609.1 L1081.4 609 L1077.6 608.8 L1073.7 608.5 L1069.8 608.2 L1065.9 607.8 L1062 607.4 M1124.7 619.4 L1121.2 620.5 L1117.7 621.6 L1114.2 622.6 L1110.7 623.6 L1107.3 624.5 L1103.8 625.2 L1100.3 625.9 L1096.8 626.5 L1093.3 626.9 L1089.9 627.3 L1086.4 627.5 L1082.9 627.6 L1079.4 627.6 L1075.9 627.5 L1072.4 627.3 L1069 627 L1065.5 626.8 L1062 626.5 M1134 528 L1133.9 532.7 L1133.9 537.3 L1133.8 542 L1133.7 546.6 L1133.7 551.3 L1133.6 555.9 L1133.5 560.6 L1133.5 565.3 L1133.4 569.9 L1133.4 574.6 L1133.3 579.2 L1133.2 583.9 L1133.2 588.5 L1133.1 593.2 L1133 597.9 L1132 602.3 L1130.2 606.6 L1128.3 610.9 L1126.5 615.2 L1124.7 619.4 L1122.8 623.7 L1121 628 M1130 528.9 L1129.9 533.5 L1129.9 538.2 L1129.8 542.9 L1129.8 547.5 L1129.7 552.2 L1129.6 556.8 L1129.6 561.5 L1129.5 566.2 L1129.5 570.8 L1129.4 575.5 L1129.3 580.2 L1129.3 584.8 L1129.2 589.5 L1129.1 594.2 L1129.1 598.8 L1128.1 603.3 L1126.4 607.6 L1124.7 611.9 L1122.9 616.2 L1121.2 620.5 L1119.5 624.8 L1117.7 629.1 M1118 531.2 L1117.9 535.9 L1117.9 540.6 L1117.8 545.3 L1117.8 550 L1117.7 554.7 L1117.7 559.3 L1117.6 564 L1117.6 568.7 L1117.5 573.4 L1117.5 578.1 L1117.4 582.8 L1117.4 587.4 L1117.3 592.1 L1117.3 596.8 L1117.2 601.5 L1116.5 606 L1115 610.4 L1113.6 614.8 L1112.2 619.2 L1110.7 623.6 L1109.3 628 L1107.9 632.3 M1114 531.9 L1114 536.6 L1113.9 541.3 L1113.9 546 L1113.8 550.7 L1113.8 555.3 L1113.7 560 L1113.7 564.7 L1113.6 569.4 L1113.6 574.1 L1113.5 578.8 L1113.5 583.5 L1113.4 588.2 L1113.4 592.9 L1113.3 597.5 L1113.3 602.2 L1112.6 606.8 L1111.2 611.2 L1109.9 615.6 L1108.6 620 L1107.3 624.5 L1105.9 628.9 L1104.6 633.3 M1110 532.5 L1110 537.2 L1109.9 541.9 L1109.9 546.6 L1109.8 551.2 L1109.8 555.9 L1109.7 560.6 L1109.7 565.3 L1109.7 570 L1109.6 574.7 L1109.6 579.4 L1109.5 584.1 L1109.5 588.8 L1109.4 593.5 L1109.4 598.2 L1109.4 602.9 L1108.7 607.5 L1107.4 611.9 L1106.2 616.4 L1105 620.8 L1103.8 625.2 L1102.6 629.7 L1101.3 634.1 M1106 532.9 L1106 537.6 L1105.9 542.3 L1105.9 547 L1105.8 551.7 L1105.8 556.4 L1105.8 561.1 L1105.7 565.8 L1105.7 570.5 L1105.6 575.2 L1105.6 579.9 L1105.6 584.6 L1105.5 589.4 L1105.5 594.1 L1105.4 598.8 L1105.4 603.5 L1104.8 608 L1103.7 612.5 L1102.5 617 L1101.4 621.5 L1100.3 625.9 L1099.2 630.4 L1098.1 634.9 M1102 533.3 L1102 538 L1101.9 542.7 L1101.9 547.4 L1101.9 552.1 L1101.8 556.8 L1101.8 561.5 L1101.7 566.2 L1101.7 570.9 L1101.7 575.6 L1101.6 580.4 L1101.6 585.1 L1101.6 589.8 L1101.5 594.5 L1101.5 599.2 L1101.5 603.9 L1100.9 608.5 L1099.9 613 L1098.9 617.5 L1097.8 622 L1096.8 626.5 L1095.8 631 L1094.8 635.5 M1090 533.6 L1090 538.3 L1089.9 543 L1089.9 547.8 L1089.9 552.5 L1089.9 557.2 L1089.8 562 L1089.8 566.7 L1089.8 571.4 L1089.8 576.1 L1089.7 580.9 L1089.7 585.6 L1089.7 590.3 L1089.7 595.1 L1089.6 599.8 L1089.6 604.5 L1089.2 609.2 L1088.5 613.7 L1087.8 618.3 L1087.1 622.9 L1086.4 627.5 L1085.7 632.1 L1084.9 636.6 M1082 533.2 L1082 538 L1082 542.7 L1081.9 547.5 L1081.9 552.2 L1081.9 556.9 L1081.9 561.7 L1081.9 566.4 L1081.9 571.2 L1081.8 575.9 L1081.8 580.6 L1081.8 585.4 L1081.8 590.1 L1081.8 594.9 L1081.7 599.6 L1081.7 604.3 L1081.4 609 L1080.9 613.7 L1080.4 618.3 L1079.9 622.9 L1079.4 627.6 L1078.9 632.2 L1078.4 636.8 M1074 532.5 L1074 537.3 L1074 542 L1074 546.8 L1074 551.5 L1073.9 556.3 L1073.9 561 L1073.9 565.8 L1073.9 570.5 L1073.9 575.3 L1073.9 580 L1073.9 584.8 L1073.9 589.5 L1073.9 594.3 L1073.8 599 L1073.8 603.8 L1073.7 608.5 L1073.4 613.2 L1073.1 617.9 L1072.8 622.6 L1072.4 627.3 L1072.1 632 L1071.8 636.7 M1070 532 L1070 536.8 L1070 541.6 L1070 546.3 L1070 551.1 L1070 555.8 L1070 560.6 L1069.9 565.4 L1069.9 570.1 L1069.9 574.9 L1069.9 579.6 L1069.9 584.4 L1069.9 589.2 L1069.9 593.9 L1069.9 598.7 L1069.9 603.4 L1069.8 608.2 L1069.6 612.9 L1069.4 617.6 L1069.2 622.3 L1069 627 L1068.8 631.8 L1068.6 636.5 M1066 531.5 L1066 536.3 L1066 541.1 L1066 545.8 L1066 550.6 L1066 555.4 L1066 560.1 L1066 564.9 L1066 569.7 L1066 574.4 L1066 579.2 L1066 584 L1066 588.7 L1066 593.5 L1065.9 598.3 L1065.9 603 L1065.9 607.8 L1065.8 612.5 L1065.7 617.3 L1065.6 622 L1065.5 626.8 L1065.4 631.5 L1065.3 636.3 M1062 531 L1062 535.8 L1062 540.5 L1062 545.3 L1062 550.1 L1062 554.9 L1062 559.6 L1062 564.4 L1062 569.2 L1062 574 L1062 578.7 L1062 583.5 L1062 588.3 L1062 593 L1062 597.8 L1062 602.6 L1062 607.4 L1062 612.1 L1062 616.9 L1062 621.7 L1062 626.5 L1062 631.2 L1062 636" fill="none" stroke="#f8ea40" stroke-width="0.9" opacity="1"/>
<path d="M1133.7 546.6 L1129.8 547.5 L1125.8 548.4 L1121.8 549.2 L1117.8 550 L1113.8 550.7 L1109.8 551.2 L1105.8 551.7 L1101.9 552.1 L1097.9 552.4 L1093.9 552.5 L1089.9 552.5 L1085.9 552.4 L1081.9 552.2 L1077.9 551.9 L1074 551.5 L1070 551.1 L1066 550.6 L1062 550.1 M1133.5 560.6 L1129.6 561.5 L1125.6 562.4 L1121.6 563.2 L1117.6 564 L1113.7 564.7 L1109.7 565.3 L1105.7 565.8 L1101.7 566.2 L1097.8 566.5 L1093.8 566.7 L1089.8 566.7 L1085.8 566.6 L1081.9 566.4 L1077.9 566.1 L1073.9 565.8 L1069.9 565.4 L1066 564.9 L1062 564.4 M1133.5 565.3 L1129.5 566.2 L1125.5 567.1 L1121.6 567.9 L1117.6 568.7 L1113.6 569.4 L1109.7 570 L1105.7 570.5 L1101.7 570.9 L1097.7 571.2 L1093.8 571.4 L1089.8 571.4 L1085.8 571.3 L1081.9 571.2 L1077.9 570.9 L1073.9 570.5 L1069.9 570.1 L1066 569.7 L1062 569.2 M1133.4 569.9 L1129.5 570.8 L1125.5 571.7 L1121.5 572.6 L1117.5 573.4 L1113.6 574.1 L1109.6 574.7 L1105.6 575.2 L1101.7 575.6 L1097.7 575.9 L1093.7 576.1 L1089.8 576.1 L1085.8 576.1 L1081.8 575.9 L1077.9 575.6 L1073.9 575.3 L1069.9 574.9 L1066 574.4 L1062 574 M1133.2 583.9 L1129.3 584.8 L1125.3 585.7 L1121.4 586.6 L1117.4 587.4 L1113.4 588.2 L1109.5 588.8 L1105.5 589.4 L1101.6 589.8 L1097.6 590.1 L1093.7 590.3 L1089.7 590.3 L1085.7 590.3 L1081.8 590.1 L1077.8 589.9 L1073.9 589.5 L1069.9 589.2 L1066 588.7 L1062 588.3 M1130.2 606.6 L1126.4 607.6 L1122.6 608.6 L1118.8 609.5 L1115 610.4 L1111.2 611.2 L1107.4 611.9 L1103.7 612.5 L1099.9 613 L1096.1 613.4 L1092.3 613.6 L1088.5 613.7 L1084.7 613.8 L1080.9 613.7 L1077.1 613.5 L1073.4 613.2 L1069.6 612.9 L1065.8 612.5 L1062 612.1 M1128.3 610.9 L1124.7 611.9 L1121 612.9 L1117.3 613.9 L1113.6 614.8 L1109.9 615.6 L1106.2 616.4 L1102.5 617 L1098.9 617.5 L1095.2 617.9 L1091.5 618.2 L1087.8 618.3 L1084.1 618.4 L1080.4 618.3 L1076.7 618.1 L1073.1 617.9 L1069.4 617.6 L1065.7 617.3 L1062 616.9 M1126.5 615.2 L1122.9 616.2 L1119.3 617.2 L1115.8 618.2 L1112.2 619.2 L1108.6 620 L1105 620.8 L1101.4 621.5 L1097.8 622 L1094.3 622.4 L1090.7 622.7 L1087.1 622.9 L1083.5 623 L1079.9 622.9 L1076.3 622.8 L1072.8 622.6 L1069.2 622.3 L1065.6 622 L1062 621.7 M1122.8 623.7 L1119.5 624.8 L1116.1 625.9 L1112.7 627 L1109.3 628 L1105.9 628.9 L1102.6 629.7 L1099.2 630.4 L1095.8 631 L1092.4 631.5 L1089 631.8 L1085.7 632.1 L1082.3 632.2 L1078.9 632.2 L1075.5 632.1 L1072.1 632 L1068.8 631.8 L1065.4 631.5 L1062 631.2 M1121 628 L1117.7 629.1 L1114.4 630.3 L1111.2 631.3 L1107.9 632.3 L1104.6 633.3 L1101.3 634.1 L1098.1 634.9 L1094.8 635.5 L1091.5 636 L1088.2 636.4 L1084.9 636.6 L1081.7 636.8 L1078.4 636.8 L1075.1 636.8 L1071.8 636.7 L1068.6 636.5 L1065.3 636.3 L1062 636 M1126 529.7 L1125.9 534.4 L1125.9 539 L1125.8 543.7 L1125.8 548.4 L1125.7 553.1 L1125.7 557.7 L1125.6 562.4 L1125.5 567.1 L1125.5 571.7 L1125.4 576.4 L1125.4 581.1 L1125.3 585.7 L1125.3 590.4 L1125.2 595.1 L1125.1 599.8 L1124.2 604.2 L1122.6 608.6 L1121 612.9 L1119.3 617.2 L1117.7 621.6 L1116.1 625.9 L1114.4 630.3 M1122 530.5 L1121.9 535.2 L1121.9 539.9 L1121.8 544.5 L1121.8 549.2 L1121.7 553.9 L1121.7 558.6 L1121.6 563.2 L1121.6 567.9 L1121.5 572.6 L1121.5 577.3 L1121.4 581.9 L1121.4 586.6 L1121.3 591.3 L1121.2 596 L1121.2 600.6 L1120.3 605.2 L1118.8 609.5 L1117.3 613.9 L1115.8 618.2 L1114.2 622.6 L1112.7 627 L1111.2 631.3 M1098 533.5 L1098 538.2 L1097.9 542.9 L1097.9 547.6 L1097.9 552.4 L1097.8 557.1 L1097.8 561.8 L1097.8 566.5 L1097.7 571.2 L1097.7 575.9 L1097.7 580.7 L1097.6 585.4 L1097.6 590.1 L1097.6 594.8 L1097.5 599.5 L1097.5 604.2 L1097 608.8 L1096.1 613.4 L1095.2 617.9 L1094.3 622.4 L1093.3 626.9 L1092.4 631.5 L1091.5 636 M1094 533.6 L1094 538.3 L1093.9 543 L1093.9 547.8 L1093.9 552.5 L1093.9 557.2 L1093.8 561.9 L1093.8 566.7 L1093.8 571.4 L1093.7 576.1 L1093.7 580.8 L1093.7 585.5 L1093.7 590.3 L1093.6 595 L1093.6 599.7 L1093.6 604.4 L1093.1 609.1 L1092.3 613.6 L1091.5 618.2 L1090.7 622.7 L1089.9 627.3 L1089 631.8 L1088.2 636.4 M1086 533.5 L1086 538.2 L1086 542.9 L1085.9 547.7 L1085.9 552.4 L1085.9 557.1 L1085.9 561.9 L1085.8 566.6 L1085.8 571.3 L1085.8 576.1 L1085.8 580.8 L1085.8 585.5 L1085.7 590.3 L1085.7 595 L1085.7 599.7 L1085.7 604.5 L1085.3 609.1 L1084.7 613.8 L1084.1 618.4 L1083.5 623 L1082.9 627.6 L1082.3 632.2 L1081.7 636.8 M1078 532.9 L1078 537.7 L1078 542.4 L1078 547.1 L1077.9 551.9 L1077.9 556.6 L1077.9 561.4 L1077.9 566.1 L1077.9 570.9 L1077.9 575.6 L1077.9 580.4 L1077.8 585.1 L1077.8 589.9 L1077.8 594.6 L1077.8 599.4 L1077.8 604.1 L1077.6 608.8 L1077.1 613.5 L1076.7 618.1 L1076.3 622.8 L1075.9 627.5 L1075.5 632.1 L1075.1 636.8" fill="none" stroke="#ffffff" stroke-width="0.9" opacity="1"/>
<path d="M1134 528 L1130 528.9 L1126 529.7 L1122 530.5 L1118 531.2 L1114 531.9 L1110 532.5 L1106 532.9 L1102 533.3 L1098 533.5 L1094 533.6 L1090 533.6 L1086 533.5 L1082 533.2 L1078 532.9 L1074 532.5 L1070 532 L1066 531.5 L1062 531" fill="none" stroke="#f0a030" stroke-width="0.9" opacity="1"/>

<rect x="975" y="531" width="87" height="104" fill="#c9c7bd"/>
<path d="M975 536.2 L980.1 536.2 L985.2 536.2 L990.4 536.2 L995.5 536.2 L1000.6 536.2 L1005.7 536.2 L1010.8 536.2 L1015.9 536.2 L1021.1 536.2 L1026.2 536.2 L1031.3 536.2 L1036.4 536.2 L1041.5 536.2 L1046.6 536.2 L1051.8 536.2 L1056.9 536.2 L1062 536.2 M975 541.4 L980.1 541.4 L985.2 541.4 L990.4 541.4 L995.5 541.4 L1000.6 541.4 L1005.7 541.4 L1010.8 541.4 L1015.9 541.4 L1021.1 541.4 L1026.2 541.4 L1031.3 541.4 L1036.4 541.4 L1041.5 541.4 L1046.6 541.4 L1051.8 541.4 L1056.9 541.4 L1062 541.4 M975 557 L980.1 557 L985.2 557 L990.4 557 L995.5 557 L1000.6 557 L1005.7 557 L1010.8 557 L1015.9 557 L1021.1 557 L1026.2 557 L1031.3 557 L1036.4 557 L1041.5 557 L1046.6 557 L1051.8 557 L1056.9 557 L1062 557 M975 562.2 L980.1 562.2 L985.2 562.2 L990.4 562.2 L995.5 562.2 L1000.6 562.2 L1005.7 562.2 L1010.8 562.2 L1015.9 562.2 L1021.1 562.2 L1026.2 562.2 L1031.3 562.2 L1036.4 562.2 L1041.5 562.2 L1046.6 562.2 L1051.8 562.2 L1056.9 562.2 L1062 562.2 M975 577.8 L980.1 577.8 L985.2 577.8 L990.4 577.8 L995.5 577.8 L1000.6 577.8 L1005.7 577.8 L1010.8 577.8 L1015.9 577.8 L1021.1 577.8 L1026.2 577.8 L1031.3 577.8 L1036.4 577.8 L1041.5 577.8 L1046.6 577.8 L1051.8 577.8 L1056.9 577.8 L1062 577.8 M975 583 L980.1 583 L985.2 583 L990.4 583 L995.5 583 L1000.6 583 L1005.7 583 L1010.8 583 L1015.9 583 L1021.1 583 L1026.2 583 L1031.3 583 L1036.4 583 L1041.5 583 L1046.6 583 L1051.8 583 L1056.9 583 L1062 583 M975 588.2 L980.1 588.2 L985.2 588.2 L990.4 588.2 L995.5 588.2 L1000.6 588.2 L1005.7 588.2 L1010.8 588.2 L1015.9 588.2 L1021.1 588.2 L1026.2 588.2 L1031.3 588.2 L1036.4 588.2 L1041.5 588.2 L1046.6 588.2 L1051.8 588.2 L1056.9 588.2 L1062 588.2 M975 614.2 L980.1 614.2 L985.2 614.2 L990.4 614.2 L995.5 614.2 L1000.6 614.2 L1005.7 614.2 L1010.8 614.2 L1015.9 614.2 L1021.1 614.2 L1026.2 614.2 L1031.3 614.2 L1036.4 614.2 L1041.5 614.2 L1046.6 614.2 L1051.8 614.2 L1056.9 614.2 L1062 614.2 M975 619.4 L980.1 619.4 L985.2 619.4 L990.4 619.4 L995.5 619.4 L1000.6 619.4 L1005.7 619.4 L1010.8 619.4 L1015.9 619.4 L1021.1 619.4 L1026.2 619.4 L1031.3 619.4 L1036.4 619.4 L1041.5 619.4 L1046.6 619.4 L1051.8 619.4 L1056.9 619.4 L1062 619.4 M975 635 L980.1 635 L985.2 635 L990.4 635 L995.5 635 L1000.6 635 L1005.7 635 L1010.8 635 L1015.9 635 L1021.1 635 L1026.2 635 L1031.3 635 L1036.4 635 L1041.5 635 L1046.6 635 L1051.8 635 L1056.9 635 L1062 635 M985.2 531 L985.2 536.2 L985.2 541.4 L985.2 546.6 L985.2 551.8 L985.2 557 L985.2 562.2 L985.2 567.4 L985.2 572.6 L985.2 577.8 L985.2 583 L985.2 588.2 L985.2 593.4 L985.2 598.6 L985.2 603.8 L985.2 609 L985.2 614.2 L985.2 619.4 L985.2 624.6 L985.2 629.8 L985.2 635 M995.5 531 L995.5 536.2 L995.5 541.4 L995.5 546.6 L995.5 551.8 L995.5 557 L995.5 562.2 L995.5 567.4 L995.5 572.6 L995.5 577.8 L995.5 583 L995.5 588.2 L995.5 593.4 L995.5 598.6 L995.5 603.8 L995.5 609 L995.5 614.2 L995.5 619.4 L995.5 624.6 L995.5 629.8 L995.5 635 M1010.8 531 L1010.8 536.2 L1010.8 541.4 L1010.8 546.6 L1010.8 551.8 L1010.8 557 L1010.8 562.2 L1010.8 567.4 L1010.8 572.6 L1010.8 577.8 L1010.8 583 L1010.8 588.2 L1010.8 593.4 L1010.8 598.6 L1010.8 603.8 L1010.8 609 L1010.8 614.2 L1010.8 619.4 L1010.8 624.6 L1010.8 629.8 L1010.8 635 M1015.9 531 L1015.9 536.2 L1015.9 541.4 L1015.9 546.6 L1015.9 551.8 L1015.9 557 L1015.9 562.2 L1015.9 567.4 L1015.9 572.6 L1015.9 577.8 L1015.9 583 L1015.9 588.2 L1015.9 593.4 L1015.9 598.6 L1015.9 603.8 L1015.9 609 L1015.9 614.2 L1015.9 619.4 L1015.9 624.6 L1015.9 629.8 L1015.9 635 M1026.2 531 L1026.2 536.2 L1026.2 541.4 L1026.2 546.6 L1026.2 551.8 L1026.2 557 L1026.2 562.2 L1026.2 567.4 L1026.2 572.6 L1026.2 577.8 L1026.2 583 L1026.2 588.2 L1026.2 593.4 L1026.2 598.6 L1026.2 603.8 L1026.2 609 L1026.2 614.2 L1026.2 619.4 L1026.2 624.6 L1026.2 629.8 L1026.2 635 M1031.3 531 L1031.3 536.2 L1031.3 541.4 L1031.3 546.6 L1031.3 551.8 L1031.3 557 L1031.3 562.2 L1031.3 567.4 L1031.3 572.6 L1031.3 577.8 L1031.3 583 L1031.3 588.2 L1031.3 593.4 L1031.3 598.6 L1031.3 603.8 L1031.3 609 L1031.3 614.2 L1031.3 619.4 L1031.3 624.6 L1031.3 629.8 L1031.3 635 M1036.4 531 L1036.4 536.2 L1036.4 541.4 L1036.4 546.6 L1036.4 551.8 L1036.4 557 L1036.4 562.2 L1036.4 567.4 L1036.4 572.6 L1036.4 577.8 L1036.4 583 L1036.4 588.2 L1036.4 593.4 L1036.4 598.6 L1036.4 603.8 L1036.4 609 L1036.4 614.2 L1036.4 619.4 L1036.4 624.6 L1036.4 629.8 L1036.4 635 M1062 531 L1062 536.2 L1062 541.4 L1062 546.6 L1062 551.8 L1062 557 L1062 562.2 L1062 567.4 L1062 572.6 L1062 577.8 L1062 583 L1062 588.2 L1062 593.4 L1062 598.6 L1062 603.8 L1062 609 L1062 614.2 L1062 619.4 L1062 624.6 L1062 629.8 L1062 635" fill="none" stroke="#ffffff" stroke-width="1" opacity="1"/>
<path d="M975 531 L980.1 531 L985.2 531 L990.4 531 L995.5 531 L1000.6 531 L1005.7 531 L1010.8 531 L1015.9 531 L1021.1 531 L1026.2 531 L1031.3 531 L1036.4 531 L1041.5 531 L1046.6 531 L1051.8 531 L1056.9 531 L1062 531 M975 546.6 L980.1 546.6 L985.2 546.6 L990.4 546.6 L995.5 546.6 L1000.6 546.6 L1005.7 546.6 L1010.8 546.6 L1015.9 546.6 L1021.1 546.6 L1026.2 546.6 L1031.3 546.6 L1036.4 546.6 L1041.5 546.6 L1046.6 546.6 L1051.8 546.6 L1056.9 546.6 L1062 546.6 M975 551.8 L980.1 551.8 L985.2 551.8 L990.4 551.8 L995.5 551.8 L1000.6 551.8 L1005.7 551.8 L1010.8 551.8 L1015.9 551.8 L1021.1 551.8 L1026.2 551.8 L1031.3 551.8 L1036.4 551.8 L1041.5 551.8 L1046.6 551.8 L1051.8 551.8 L1056.9 551.8 L1062 551.8 M975 567.4 L980.1 567.4 L985.2 567.4 L990.4 567.4 L995.5 567.4 L1000.6 567.4 L1005.7 567.4 L1010.8 567.4 L1015.9 567.4 L1021.1 567.4 L1026.2 567.4 L1031.3 567.4 L1036.4 567.4 L1041.5 567.4 L1046.6 567.4 L1051.8 567.4 L1056.9 567.4 L1062 567.4 M975 572.6 L980.1 572.6 L985.2 572.6 L990.4 572.6 L995.5 572.6 L1000.6 572.6 L1005.7 572.6 L1010.8 572.6 L1015.9 572.6 L1021.1 572.6 L1026.2 572.6 L1031.3 572.6 L1036.4 572.6 L1041.5 572.6 L1046.6 572.6 L1051.8 572.6 L1056.9 572.6 L1062 572.6 M975 593.4 L980.1 593.4 L985.2 593.4 L990.4 593.4 L995.5 593.4 L1000.6 593.4 L1005.7 593.4 L1010.8 593.4 L1015.9 593.4 L1021.1 593.4 L1026.2 593.4 L1031.3 593.4 L1036.4 593.4 L1041.5 593.4 L1046.6 593.4 L1051.8 593.4 L1056.9 593.4 L1062 593.4 M975 598.6 L980.1 598.6 L985.2 598.6 L990.4 598.6 L995.5 598.6 L1000.6 598.6 L1005.7 598.6 L1010.8 598.6 L1015.9 598.6 L1021.1 598.6 L1026.2 598.6 L1031.3 598.6 L1036.4 598.6 L1041.5 598.6 L1046.6 598.6 L1051.8 598.6 L1056.9 598.6 L1062 598.6 M975 603.8 L980.1 603.8 L985.2 603.8 L990.4 603.8 L995.5 603.8 L1000.6 603.8 L1005.7 603.8 L1010.8 603.8 L1015.9 603.8 L1021.1 603.8 L1026.2 603.8 L1031.3 603.8 L1036.4 603.8 L1041.5 603.8 L1046.6 603.8 L1051.8 603.8 L1056.9 603.8 L1062 603.8 M975 609 L980.1 609 L985.2 609 L990.4 609 L995.5 609 L1000.6 609 L1005.7 609 L1010.8 609 L1015.9 609 L1021.1 609 L1026.2 609 L1031.3 609 L1036.4 609 L1041.5 609 L1046.6 609 L1051.8 609 L1056.9 609 L1062 609 M975 624.6 L980.1 624.6 L985.2 624.6 L990.4 624.6 L995.5 624.6 L1000.6 624.6 L1005.7 624.6 L1010.8 624.6 L1015.9 624.6 L1021.1 624.6 L1026.2 624.6 L1031.3 624.6 L1036.4 624.6 L1041.5 624.6 L1046.6 624.6 L1051.8 624.6 L1056.9 624.6 L1062 624.6 M975 629.8 L980.1 629.8 L985.2 629.8 L990.4 629.8 L995.5 629.8 L1000.6 629.8 L1005.7 629.8 L1010.8 629.8 L1015.9 629.8 L1021.1 629.8 L1026.2 629.8 L1031.3 629.8 L1036.4 629.8 L1041.5 629.8 L1046.6 629.8 L1051.8 629.8 L1056.9 629.8 L1062 629.8 M975 531 L975 536.2 L975 541.4 L975 546.6 L975 551.8 L975 557 L975 562.2 L975 567.4 L975 572.6 L975 577.8 L975 583 L975 588.2 L975 593.4 L975 598.6 L975 603.8 L975 609 L975 614.2 L975 619.4 L975 624.6 L975 629.8 L975 635 M980.1 531 L980.1 536.2 L980.1 541.4 L980.1 546.6 L980.1 551.8 L980.1 557 L980.1 562.2 L980.1 567.4 L980.1 572.6 L980.1 577.8 L980.1 583 L980.1 588.2 L980.1 593.4 L980.1 598.6 L980.1 603.8 L980.1 609 L980.1 614.2 L980.1 619.4 L980.1 624.6 L980.1 629.8 L980.1 635 M990.4 531 L990.4 536.2 L990.4 541.4 L990.4 546.6 L990.4 551.8 L990.4 557 L990.4 562.2 L990.4 567.4 L990.4 572.6 L990.4 577.8 L990.4 583 L990.4 588.2 L990.4 593.4 L990.4 598.6 L990.4 603.8 L990.4 609 L990.4 614.2 L990.4 619.4 L990.4 624.6 L990.4 629.8 L990.4 635 M1000.6 531 L1000.6 536.2 L1000.6 541.4 L1000.6 546.6 L1000.6 551.8 L1000.6 557 L1000.6 562.2 L1000.6 567.4 L1000.6 572.6 L1000.6 577.8 L1000.6 583 L1000.6 588.2 L1000.6 593.4 L1000.6 598.6 L1000.6 603.8 L1000.6 609 L1000.6 614.2 L1000.6 619.4 L1000.6 624.6 L1000.6 629.8 L1000.6 635 M1005.7 531 L1005.7 536.2 L1005.7 541.4 L1005.7 546.6 L1005.7 551.8 L1005.7 557 L1005.7 562.2 L1005.7 567.4 L1005.7 572.6 L1005.7 577.8 L1005.7 583 L1005.7 588.2 L1005.7 593.4 L1005.7 598.6 L1005.7 603.8 L1005.7 609 L1005.7 614.2 L1005.7 619.4 L1005.7 624.6 L1005.7 629.8 L1005.7 635 M1021.1 531 L1021.1 536.2 L1021.1 541.4 L1021.1 546.6 L1021.1 551.8 L1021.1 557 L1021.1 562.2 L1021.1 567.4 L1021.1 572.6 L1021.1 577.8 L1021.1 583 L1021.1 588.2 L1021.1 593.4 L1021.1 598.6 L1021.1 603.8 L1021.1 609 L1021.1 614.2 L1021.1 619.4 L1021.1 624.6 L1021.1 629.8 L1021.1 635 M1041.5 531 L1041.5 536.2 L1041.5 541.4 L1041.5 546.6 L1041.5 551.8 L1041.5 557 L1041.5 562.2 L1041.5 567.4 L1041.5 572.6 L1041.5 577.8 L1041.5 583 L1041.5 588.2 L1041.5 593.4 L1041.5 598.6 L1041.5 603.8 L1041.5 609 L1041.5 614.2 L1041.5 619.4 L1041.5 624.6 L1041.5 629.8 L1041.5 635 M1046.6 531 L1046.6 536.2 L1046.6 541.4 L1046.6 546.6 L1046.6 551.8 L1046.6 557 L1046.6 562.2 L1046.6 567.4 L1046.6 572.6 L1046.6 577.8 L1046.6 583 L1046.6 588.2 L1046.6 593.4 L1046.6 598.6 L1046.6 603.8 L1046.6 609 L1046.6 614.2 L1046.6 619.4 L1046.6 624.6 L1046.6 629.8 L1046.6 635 M1051.8 531 L1051.8 536.2 L1051.8 541.4 L1051.8 546.6 L1051.8 551.8 L1051.8 557 L1051.8 562.2 L1051.8 567.4 L1051.8 572.6 L1051.8 577.8 L1051.8 583 L1051.8 588.2 L1051.8 593.4 L1051.8 598.6 L1051.8 603.8 L1051.8 609 L1051.8 614.2 L1051.8 619.4 L1051.8 624.6 L1051.8 629.8 L1051.8 635 M1056.9 531 L1056.9 536.2 L1056.9 541.4 L1056.9 546.6 L1056.9 551.8 L1056.9 557 L1056.9 562.2 L1056.9 567.4 L1056.9 572.6 L1056.9 577.8 L1056.9 583 L1056.9 588.2 L1056.9 593.4 L1056.9 598.6 L1056.9 603.8 L1056.9 609 L1056.9 614.2 L1056.9 619.4 L1056.9 624.6 L1056.9 629.8 L1056.9 635" fill="none" stroke="#f4d84a" stroke-width="1" opacity="1"/>

<path d="M984 637.5 L1067 637.5" stroke="#111" stroke-width="2"/>
<path d="M909 641 L942 640 L942 646 L909 648Z" fill="#e83ad0"/><path d="M1098 640 L1128 641 L1128 648 L1098 646Z" fill="#e83ad0"/>
<path d="M942 640 L984 636" stroke="#f2e03c" stroke-width="2"/><path d="M1067 636 L1098 640" stroke="#e8402a" stroke-width="2"/>
<path d="M857.5 459.1 L860.8 456.6 L866 457.7 L875.8 454.6 L885.3 453.3 L894.6 450.6 L903.9 449.5 L913.6 446.5 L918.9 443.3 L921.4 439.6 M848.6 474.3 L852.9 474.8 L858.9 472.1 L864.8 470.7 L877.3 471.1 L886.6 466.8 L897.5 463.8 L904.1 460.7 L912.3 459.7 L914.1 459.1 M838.1 499.3 L842.2 499.3 L846.7 499.2 L857.1 497.8 L865.1 495.9 L876 492.7 L885.2 492.2 L895.1 490 L899.8 485.6 L904.2 484.7 M835.6 505.9 L838.3 507.8 L845.1 508.6 L854 506.7 L864 505.6 L873.9 500.9 L886 501.1 L891.8 496.6 L898.3 496.2 L902.6 492.8 M830.5 523.8 L835.2 524.9 L839.4 525.9 L850.4 522.8 L859.5 522.7 L869.1 520.1 L881 519 L889.8 516.6 L895.4 512.9 L899.3 511.1 M827.9 534.4 L832.6 535.1 L836.6 534.5 L845.8 532.4 L856.4 532.7 L869.5 530.8 L878.6 529 L887.1 525.7 L894.9 522.7 L897.9 521.6 M823.1 551.3 L825.5 550.4 L834 551.4 L841.6 549.4 L854.4 549.9 L864.5 548.9 L876.1 546.4 L886.5 543.7 L894.7 542 L897 540.6 M820.7 559.7 L825.6 561.6 L832.4 560.3 L841.9 560.1 L854.1 560.1 L865.4 556.2 L876.2 555.2 L884.8 554.4 L891.8 552.4 L896.5 550.2 M818.4 568 L822.9 569.6 L831.1 570.6 L840.4 567.8 L851.6 567.6 L864.7 566.1 L874.5 563.1 L884.8 563 L891.5 559.9 L896 559.7 M816 575.6 L819 577.5 L827 577.8 L837.8 577.1 L848.6 575.1 L862.6 576.9 L873.8 573.4 L884.2 573 L892.2 571.5 L896.2 567.6 M811.6 595.4 L815.5 595.7 L823.1 596.9 L834.2 594.7 L848.7 593.9 L860.1 593.7 L875.2 591.2 L883.6 591.9 L891.1 589.2 L896.7 589 M807.2 612.1 L811.6 611.6 L819.3 614.7 L832.2 613.4 L845.2 614.1 L860.5 612.4 L871 612.2 L882.8 608.8 L891 608.3 L896.7 607.2 M805 620.8 L809.5 620.6 L818.8 622.3 L829.1 623.4 L844.8 623.3 L859.4 619.9 L871.1 620.1 L882.3 619.8 L892.9 616.5 L896.2 616.4 M800.6 637.6 L803.9 638 L812.8 639.6 L827.7 639.7 L841.1 638.6 L855.4 639.7 L868.3 639 L881.5 637.1 L891.5 637.1 L895.2 634.1 M798.3 646 L801.7 647.4 L812.5 650.3 L825.8 650.3 L837.5 650 L854.7 648.6 L869.8 648.3 L879.2 646.1 L888.1 646.2 L894.2 645.1 M796.1 657.1 L799.4 655.4 L811.4 656.9 L821.4 659.2 L835.4 659 L853.2 658 L866.7 655.6 L879 656.6 L888.5 655.2 L892.5 652.8 M793.8 663.9 L799.2 664.4 L806.5 665.7 L821.1 667.1 L834.2 668.6 L850.2 666 L864.8 667.4 L876.5 665.2 L886.2 666 L890.8 663.7 M790.1 682.5 L794.5 682.7 L805.1 685.6 L817.9 684.1 L829.7 685.6 L844.9 686.2 L861.7 684.1 L873.3 684.5 L881.5 682.5 L887.5 682.8 M788.5 692 L793.7 691.1 L801.5 692.5 L813.3 694.4 L829.7 695.6 L845 695.6 L859.3 693.9 L871.1 693 L882.3 692.2 L885.8 689.6 M786.9 699.8 L790.8 701.7 L800.8 702.2 L814.5 703.8 L826.4 701.8 L843.7 703.7 L858.1 703 L868.5 702.2 L880.1 701.8 L883.9 699 M785.2 708 L791.4 710.4 L798 711.9 L812.8 713.1 L826.5 713.4 L840 712.4 L856.8 711.7 L867 712.8 L877.8 709.2 L882 708.4 M783.7 718.3 L790 719.6 L798.7 718.9 L810.1 719.9 L823.8 720.3 L839.4 720.1 L854.6 721.8 L867.7 721.7 L874 721.2 L880.2 719.2 M782.2 728.4 L787.1 726.8 L796.8 728.1 L810 730.1 L824.3 730.5 L837.7 731.3 L853.5 730.5 L864.4 729.9 L874.8 728.5 L879 727.3 M780.8 735.9 L786.2 735.7 L794 739.7 L806.4 739.9 L821.1 738.4 L837 741.2 L852.5 738.5 L864.6 739.8 L872.9 739.3 L877.9 737.9 M776.3 762.9 L782.5 762.6 L789.9 765.7 L803 766.2 L816.9 766.2 L833.8 767.1 L849.4 769 L862 766.7 L869.7 765.6 L874.6 765.5 M774.1 770.2 L779.1 774.2 L789.2 773.6 L800.3 776.6 L814.6 777.2 L832.9 775.3 L848.1 777.4 L859 776.5 L868.9 776.3 L873.6 776.5 M771.9 781.6 L776.4 780 L787.2 783.4 L799.7 782.8 L812.9 786.4 L829.8 785.8 L846.8 785.2 L858.6 784.7 L867.7 786.3 L872.6 783.7 M769.7 789.9 L776.4 791.4 L785.3 793.2 L798 793.2 L813.7 795.2 L829.1 795.5 L843 794.9 L856.5 796.5 L867.4 794.3 L871.6 795.8 M767.5 796.5 L771.3 798.6 L781 802.1 L795 801.7 L812.1 803.3 L827.7 803.9 L842.6 806.1 L855.2 804.8 L865.4 803.2 L870.7 802.5 M763 824 L768.1 826.2 L778.7 828.1 L791.2 827.9 L806 829.5 L822.8 830.7 L840.1 832 L854.3 831.9 L861.9 831.5 L868 830.7 M760.7 851.3 L765.4 851.8 L774.9 853.7 L786 857.1 L802.2 858.4 L816.8 858.5 L831.4 859.9 L843.7 859.5 L853.9 858.1 L858.7 856.6 M762.6 869.2 L767 869.2 L776.1 872.2 L785.3 872.4 L797.6 875.5 L813.2 874.3 L825.3 875.1 L834.9 873.3 L844.6 873.2 L848.1 873.6 M766.3 876.2 L768.6 877.8 L777.5 880.3 L788.1 881.4 L797.9 880 L811.1 881.8 L822 880.3 L831.4 881.3 L836.4 880.3 L841.1 878.4 M770 886.3 L772.3 887.7 L778.1 888.5 L787.7 889.3 L798.4 888.3 L807.6 888.6 L817.9 889.6 L825.7 888.2 L830 888.3 L834 887.5 M863.7 449.9 L860.8 456.6 L857.4 466.5 L852.9 474.8 L848 483.5 L845.4 489.9 L842.2 499.3 L838.3 507.8 L836.4 514.8 L835.2 524.9 L832.6 535.1 L830 541.5 L825.5 550.4 L825.6 561.6 L822.9 569.6 L819 577.5 L817 586 L815.5 595.7 L814.8 602.9 L811.6 611.6 L809.5 620.6 L808.7 630.4 L803.9 638 L801.7 647.4 L799.4 655.4 L799.2 664.4 L796.9 674 L794.5 682.7 L793.7 691.1 L790.8 701.7 L791.4 710.4 L790 719.6 L787.1 726.8 L786.2 735.7 L784.9 744.9 L782.2 756 L782.5 762.6 L779.1 774.2 L776.4 780 L776.4 791.4 L771.3 798.6 L772.1 807.9 L768.7 815.9 L768.1 826.2 L767.1 834.2 L765.3 843.1 L765.4 851.8 L766.1 862.9 L767 869.2 L768.6 877.8 L772.3 887.7 M869.5 449.4 L866 457.7 L862.8 464.7 L858.9 472.1 L854.7 482.8 L850.4 490.8 L846.7 499.2 L845.1 508.6 L842 515.7 L839.4 525.9 L836.6 534.5 L834.6 541.7 L834 551.4 L832.4 560.3 L831.1 570.6 L827 577.8 L825.3 586.3 L823.1 596.9 L823.2 604 L819.3 614.7 L818.8 622.3 L814.8 630.9 L812.8 639.6 L812.5 650.3 L811.4 656.9 L806.5 665.7 L805.6 676 L805.1 685.6 L801.5 692.5 L800.8 702.2 L798 711.9 L798.7 718.9 L796.8 728.1 L794 739.7 L792.7 748.3 L792.5 756.5 L789.9 765.7 L789.2 773.6 L787.2 783.4 L785.3 793.2 L781 802.1 L779.4 811 L779.6 818.1 L778.7 828.1 L777.7 837.2 L773.9 844.3 L774.9 853.7 L773.7 862.3 L776.1 872.2 L777.5 880.3 L778.1 888.5 M889.7 445.1 L885.3 453.3 L880.4 460.3 L877.3 471.1 L873 477.5 L868.3 488.1 L865.1 495.9 L864 505.6 L860.8 512.8 L859.5 522.7 L856.4 532.7 L855.8 541.6 L854.4 549.9 L854.1 560.1 L851.6 567.6 L848.6 575.1 L848.8 587.2 L848.7 593.9 L847.5 603.8 L845.2 614.1 L844.8 623.3 L840.9 630.3 L841.1 638.6 L837.5 650 L835.4 659 L834.2 668.6 L832.1 676.4 L829.7 685.6 L829.7 695.6 L826.4 701.8 L826.5 713.4 L823.8 720.3 L824.3 730.5 L821.1 738.4 L821.1 748.8 L820.2 758.1 L816.9 766.2 L814.6 777.2 L812.9 786.4 L813.7 795.2 L812.1 803.3 L808.2 812.8 L809 821.1 L806 829.5 L806.5 839.6 L805 850 L802.2 858.4 L799.6 866.3 L797.6 875.5 L797.9 880 L798.4 888.3 M899.9 442.1 L894.6 450.6 L890 458.8 L886.6 466.8 L882.1 475.6 L880 484.9 L876 492.7 L873.9 500.9 L871.8 511.3 L869.1 520.1 L869.5 530.8 L867.9 537.9 L864.5 548.9 L865.4 556.2 L864.7 566.1 L862.6 576.9 L862.1 584.9 L860.1 593.7 L859.3 601.8 L860.5 612.4 L859.4 619.9 L858.1 628.9 L855.4 639.7 L854.7 648.6 L853.2 658 L850.2 666 L849.1 675.9 L844.9 686.2 L845 695.6 L843.7 703.7 L840 712.4 L839.4 720.1 L837.7 731.3 L837 741.2 L835.4 749.4 L835.4 759.5 L833.8 767.1 L832.9 775.3 L829.8 785.8 L829.1 795.5 L827.7 803.9 L824.9 812.6 L826.3 821.9 L822.8 830.7 L821.4 840.5 L821 851.1 L816.8 858.5 L813.6 865.5 L813.2 874.3 L811.1 881.8 L807.6 888.6 M908.3 439.6 L903.9 449.5 L898.8 458 L897.5 463.8 L894.1 472.1 L888.8 482.4 L885.2 492.2 L886 501.1 L882.1 508.8 L881 519 L878.6 529 L878 535.8 L876.1 546.4 L876.2 555.2 L874.5 563.1 L873.8 573.4 L875.1 582.6 L875.2 591.2 L873.2 600.3 L871 612.2 L871.1 620.1 L870.9 628.2 L868.3 639 L869.8 648.3 L866.7 655.6 L864.8 667.4 L863.2 674.8 L861.7 684.1 L859.3 693.9 L858.1 703 L856.8 711.7 L854.6 721.8 L853.5 730.5 L852.5 738.5 L848.9 748.7 L848.4 758.2 L849.4 769 L848.1 777.4 L846.8 785.2 L843 794.9 L842.6 806.1 L841.4 814.7 L840.4 822.6 L840.1 832 L840 841.4 L836.4 848.9 L831.4 859.9 L829.6 867.3 L825.3 875.1 L822 880.3 L817.9 889.6 M915.2 437.4 L913.6 446.5 L909.8 454.7 L904.1 460.7 L900.8 469.8 L896.1 478.4 L895.1 490 L891.8 496.6 L889.7 508.1 L889.8 516.6 L887.1 525.7 L886.3 533.7 L886.5 543.7 L884.8 554.4 L884.8 563 L884.2 573 L883.1 583 L883.6 591.9 L883.3 601.5 L882.8 608.8 L882.3 619.8 L883.2 628.1 L881.5 637.1 L879.2 646.1 L879 656.6 L876.5 665.2 L874.4 674.7 L873.3 684.5 L871.1 693 L868.5 702.2 L867 712.8 L867.7 721.7 L864.4 729.9 L864.6 739.8 L861.3 750.4 L861.2 756.8 L862 766.7 L859 776.5 L858.6 784.7 L856.5 796.5 L855.2 804.8 L854.7 813.8 L854.1 822.7 L854.3 831.9 L852.5 840.8 L847.3 852.1 L843.7 859.5 L839.6 867.3 L834.9 873.3 L831.4 881.3 L825.7 888.2 M920.2 433.1 L918.9 443.3 L912.9 451 L912.3 459.7 L908.7 468.7 L902.9 476.2 L899.8 485.6 L898.3 496.2 L898.3 504.9 L895.4 512.9 L894.9 522.7 L892.4 532.5 L894.7 542 L891.8 552.4 L891.5 559.9 L892.2 571.5 L892.4 580.3 L891.1 589.2 L892.8 600 L891 608.3 L892.9 616.5 L892.4 626.2 L891.5 637.1 L888.1 646.2 L888.5 655.2 L886.2 666 L884.3 672.8 L881.5 682.5 L882.3 692.2 L880.1 701.8 L877.8 709.2 L874 721.2 L874.8 728.5 L872.9 739.3 L873.2 748.6 L871.9 758.1 L869.7 765.6 L868.9 776.3 L867.7 786.3 L867.4 794.3 L865.4 803.2 L864.2 813.8 L864.2 822.8 L861.9 831.5 L862.7 843 L859.3 850.8 L853.9 858.1 L850.8 866.6 L844.6 873.2 L836.4 880.3 L830 888.3 M925 431.4 L921.4 439.6 L917.7 448.2 L914.1 459.1 L910.5 467.6 L906.8 474.2 L904.2 484.7 L902.6 492.8 L900.9 501.7 L899.3 511.1 L897.9 521.6 L897.4 532.6 L897 540.6 L896.5 550.2 L896 559.7 L896.2 567.6 L896.5 577.2 L896.7 589 L896.9 596.4 L896.7 607.2 L896.2 616.4 L895.7 627.1 L895.2 634.1 L894.2 645.1 L892.5 652.8 L890.8 663.7 L889.1 673.4 L887.5 682.8 L885.8 689.6 L883.9 699 L882 708.4 L880.2 719.2 L879 727.3 L877.9 737.9 L876.8 746.1 L875.6 756.5 L874.6 765.5 L873.6 776.5 L872.6 783.7 L871.6 795.8 L870.7 802.5 L869.8 812.3 L868.9 823.1 L868 830.7 L867.2 840.8 L863.3 850.1 L858.7 856.6 L854.1 866.4 L848.1 873.6 L841.1 878.4 L834 887.5" fill="none" stroke="#ffffff" stroke-width="1.2" opacity="1"/>
<path d="M853.1 464.3 L857.4 466.5 L862.8 464.7 L869.8 465.3 L880.4 460.3 L890 458.8 L898.8 458 L909.8 454.7 L912.9 451 L917.7 448.2 M844.4 482.6 L848 483.5 L854.7 482.8 L863.8 478.9 L873 477.5 L882.1 475.6 L894.1 472.1 L900.8 469.8 L908.7 468.7 L910.5 467.6 M841.3 490.2 L845.4 489.9 L850.4 490.8 L859.7 490 L868.3 488.1 L880 484.9 L888.8 482.4 L896.1 478.4 L902.9 476.2 L906.8 474.2 M833 514.4 L836.4 514.8 L842 515.7 L850.5 513.5 L860.8 512.8 L871.8 511.3 L882.1 508.8 L889.7 508.1 L898.3 504.9 L900.9 501.7 M813.8 584.6 L817 586 L825.3 586.3 L837.7 586.3 L848.8 587.2 L862.1 584.9 L875.1 582.6 L883.1 583 L892.4 580.3 L896.5 577.2 M802.8 631.2 L808.7 630.4 L814.8 630.9 L828 632.2 L840.9 630.3 L858.1 628.9 L870.9 628.2 L883.2 628.1 L892.4 626.2 L895.7 627.1 M778 755 L782.2 756 L792.5 756.5 L805.2 756.5 L820.2 758.1 L835.4 759.5 L848.4 758.2 L861.2 756.8 L871.9 758.1 L875.6 756.5 M761.5 834.2 L767.1 834.2 L777.7 837.2 L789.9 838.6 L806.5 839.6 L821.4 840.5 L840 841.4 L852.5 840.8 L862.7 843 L867.2 840.8 M760.1 842.1 L765.3 843.1 L773.9 844.3 L788.6 847.1 L805 850 L821 851.1 L836.4 848.9 L847.3 852.1 L859.3 850.8 L863.3 850.1 M761.4 860.5 L766.1 862.9 L773.7 862.3 L785.9 865.7 L799.6 866.3 L813.6 865.5 L829.6 867.3 L839.6 867.3 L850.8 866.6 L854.1 866.4 M862 448.6 L857.5 459.1 L853.1 464.3 L848.6 474.3 L844.4 482.6 L841.3 490.2 L838.1 499.3 L835.6 505.9 L833 514.4 L830.5 523.8 L827.9 534.4 L825.4 540.8 L823.1 551.3 L820.7 559.7 L818.4 568 L816 575.6 L813.8 584.6 L811.6 595.4 L809.4 604 L807.2 612.1 L805 620.8 L802.8 631.2 L800.6 637.6 L798.3 646 L796.1 657.1 L793.8 663.9 L791.7 672.5 L790.1 682.5 L788.5 692 L786.9 699.8 L785.2 708 L783.7 718.3 L782.2 728.4 L780.8 735.9 L779.4 743.9 L778 755 L776.3 762.9 L774.1 770.2 L771.9 781.6 L769.7 789.9 L767.5 796.5 L765.9 806.8 L764.4 817.2 L763 824 L761.5 834.2 L760.1 842.1 L760.7 851.3 L761.4 860.5 L762.6 869.2 L766.3 876.2 L770 886.3" fill="none" stroke="#b4f4ee" stroke-width="1.2" opacity="1"/>
<path d="M862 448.6 L863.7 449.9 L869.5 449.4 L879.5 446.8 L889.7 445.1 L899.9 442.1 L908.3 439.6 L915.2 437.4 L920.2 433.1 L925 431.4 M825.4 540.8 L830 541.5 L834.6 541.7 L845.4 542.2 L855.8 541.6 L867.9 537.9 L878 535.8 L886.3 533.7 L892.4 532.5 L897.4 532.6 M809.4 604 L814.8 602.9 L823.2 604 L834.1 604.3 L847.5 603.8 L859.3 601.8 L873.2 600.3 L883.3 601.5 L892.8 600 L896.9 596.4 M791.7 672.5 L796.9 674 L805.6 676 L816.6 675.9 L832.1 676.4 L849.1 675.9 L863.2 674.8 L874.4 674.7 L884.3 672.8 L889.1 673.4 M779.4 743.9 L784.9 744.9 L792.7 748.3 L806 748.2 L821.1 748.8 L835.4 749.4 L848.9 748.7 L861.3 750.4 L873.2 748.6 L876.8 746.1 M765.9 806.8 L772.1 807.9 L779.4 811 L792.9 812.3 L808.2 812.8 L824.9 812.6 L841.4 814.7 L854.7 813.8 L864.2 813.8 L869.8 812.3 M764.4 817.2 L768.7 815.9 L779.6 818.1 L793.4 818.7 L809 821.1 L826.3 821.9 L840.4 822.6 L854.1 822.7 L864.2 822.8 L868.9 823.1 M879.5 446.8 L875.8 454.6 L869.8 465.3 L864.8 470.7 L863.8 478.9 L859.7 490 L857.1 497.8 L854 506.7 L850.5 513.5 L850.4 522.8 L845.8 532.4 L845.4 542.2 L841.6 549.4 L841.9 560.1 L840.4 567.8 L837.8 577.1 L837.7 586.3 L834.2 594.7 L834.1 604.3 L832.2 613.4 L829.1 623.4 L828 632.2 L827.7 639.7 L825.8 650.3 L821.4 659.2 L821.1 667.1 L816.6 675.9 L817.9 684.1 L813.3 694.4 L814.5 703.8 L812.8 713.1 L810.1 719.9 L810 730.1 L806.4 739.9 L806 748.2 L805.2 756.5 L803 766.2 L800.3 776.6 L799.7 782.8 L798 793.2 L795 801.7 L792.9 812.3 L793.4 818.7 L791.2 827.9 L789.9 838.6 L788.6 847.1 L786 857.1 L785.9 865.7 L785.3 872.4 L788.1 881.4 L787.7 889.3" fill="none" stroke="#a8ee6a" stroke-width="1.2" opacity="1"/>

<path d="M862 450 L845 480 L838 499 L826 540 L816 577 L804 625 L792 672" fill="none" stroke="#a8ee60" stroke-width="1.3" opacity=".9"/>
<g clip-path="url(#ccfL)">
<path d="M770 886 L771 915 L774 943 L824 941 L830 915 L834 886Z" fill="#b4e49c" opacity=".9"/>
<ellipse cx="805" cy="925" rx="14" ry="12" fill="#8cf0d8" filter="url(#b4)" opacity=".9"/>
<ellipse cx="779" cy="927" rx="7" ry="14" fill="#d0f040" filter="url(#b4)" opacity=".9"/>
</g>
<path d="M770 886 L772.8 887.5 L777.8 888.9 L784.7 890 L793 890.8 L802 891 L811 890.8 L819.3 890 L826.2 888.9 L831.2 887.5 L834 886 M770.8 908.9 L773.4 910.4 L778.1 911.7 L784.6 912.7 L792.4 913.4 L800.9 913.5 L809.3 913.2 L817.1 912.4 L823.6 911.2 L828.3 909.7 L830.9 908.2 M774 943 L776.2 944.5 L780.1 945.7 L785.5 946.6 L792 947 L799 947 L806 946.5 L812.5 945.5 L817.9 944.2 L821.8 942.6 L824 941 M770 886 L770.4 897.4 L770.8 908.9 L771.6 920.3 L772.8 931.6 L774 943 M772.8 887.5 L773.1 899 L773.4 910.4 L774.1 921.8 L775.1 933.1 L776.2 944.5 M784.7 890 L784.6 901.4 L784.6 912.7 L784.8 924.1 L785.1 935.3 L785.5 946.6 M811 890.8 L810.2 902 L809.3 913.2 L808.4 924.3 L807.2 935.4 L806 946.5 M831.2 887.5 L829.8 898.6 L828.3 909.7 L826.5 920.8 L824.2 931.7 L821.8 942.6" fill="none" stroke="#e6f03c" stroke-width="1.1" opacity="1"/>
<path d="M770.4 897.4 L773.1 899 L777.9 900.3 L784.6 901.4 L792.7 902.1 L801.4 902.3 L810.2 902 L818.2 901.2 L824.9 900.1 L829.8 898.6 L832.5 897.1 M772.8 931.6 L775.1 933.1 L779.3 934.4 L785.1 935.3 L792.1 935.8 L799.6 935.9 L807.2 935.4 L814.2 934.5 L820 933.2 L824.2 931.7 L826.5 930.1 M777.8 888.9 L777.9 900.3 L778.1 911.7 L778.6 923.1 L779.3 934.4 L780.1 945.7 M802 891 L801.4 902.3 L800.9 913.5 L800.3 924.7 L799.6 935.9 L799 947 M819.3 890 L818.2 901.2 L817.1 912.4 L815.8 923.5 L814.2 934.5 L812.5 945.5 M834 886 L832.5 897.1 L830.9 908.2 L829 919.2 L826.5 930.1 L824 941" fill="none" stroke="#9cea50" stroke-width="1.1" opacity="1"/>
<path d="M771.6 920.3 L774.1 921.8 L778.6 923.1 L784.8 924.1 L792.2 924.6 L800.3 924.7 L808.4 924.3 L815.8 923.5 L822 922.3 L826.5 920.8 L829 919.2 M793 890.8 L792.7 902.1 L792.4 913.4 L792.2 924.6 L792.1 935.8 L792 947 M826.2 888.9 L824.9 900.1 L823.6 911.2 L822 922.3 L820 933.2 L817.9 944.2" fill="none" stroke="#ffffff" stroke-width="1.1" opacity="1"/>

<path d="M1175 451.2 L1173 448.7 L1167.1 448.5 L1158.9 448.3 L1148.4 446.7 L1139.5 444.1 L1130.5 439.7 L1121.8 437.1 L1114.9 433.9 L1112 432 M1179.5 457 L1175.5 459.1 L1171.4 458 L1162.8 455.9 L1152.8 454.1 L1140.9 450.7 L1134.4 447 L1124.7 443.8 L1118.1 443.7 L1115.6 439.2 M1183.9 466.7 L1181.6 467.1 L1173.9 466.7 L1166 463.8 L1158.1 462 L1147.1 458 L1135.2 455.7 L1127.3 454.8 L1121.7 452.8 L1119.3 450 M1188.4 472.6 L1185.8 473.3 L1179.1 472 L1171.7 473 L1161.1 470.7 L1150 466.4 L1140.1 465.7 L1132.5 461.2 L1125.4 459.9 L1122.9 456.6 M1192.6 480.2 L1189.1 480.7 L1184.4 480.3 L1175.5 481.2 L1164.2 478.5 L1155.9 476.4 L1144.1 475 L1135.2 472.4 L1129.3 468.4 L1126.5 466.3 M1195.7 490.6 L1193.6 491 L1185.3 491.5 L1178.7 488.8 L1169.3 485.7 L1158.1 485.6 L1148.8 482.7 L1138.2 479.6 L1132.7 477.7 L1130.2 475.3 M1198.9 498.5 L1195.6 499.2 L1190.6 497.8 L1180.2 496.4 L1169.8 496.8 L1162 492.3 L1150.3 492.3 L1143.4 490.1 L1137.7 485.8 L1132.8 483.3 M1204 515.3 L1201.6 515 L1192.8 517.5 L1184.7 516.5 L1176.2 512.1 L1163.4 512.1 L1153.3 509.9 L1146.4 506.2 L1139.4 504 L1136.1 504.5 M1211.6 542.8 L1207.5 543.2 L1202.6 541.4 L1192.5 543.2 L1180.9 541.7 L1170.8 538.3 L1157.9 537.9 L1149.6 534.4 L1143.1 533.7 L1139.6 532.7 M1213.9 552.1 L1211 550.3 L1202.9 549.7 L1193 550.2 L1181.8 549.5 L1170 548.5 L1159.8 545.3 L1151.2 543.6 L1142.2 543.4 L1140 541.6 M1218.6 569.1 L1213.7 568 L1206 569.1 L1196.3 567.6 L1184.9 569 L1174.6 565.6 L1163.5 563.5 L1151 562.5 L1145.9 559.9 L1141 560.6 M1221 577.1 L1217.9 577.1 L1208 576.5 L1200 577.5 L1188.1 575.7 L1173.8 574.5 L1163.6 574.5 L1151.2 572.9 L1143.3 570.5 L1140.8 568.4 M1223.2 586.6 L1219.7 587 L1210.4 585.2 L1201.3 587.1 L1186.8 586.8 L1176.6 584.2 L1163 583.6 L1153.7 582.1 L1144.8 580.9 L1140.5 578.6 M1225.4 593.1 L1221.3 595 L1212.7 595.2 L1201.5 594.8 L1190.4 596 L1176 594.9 L1162.1 592.5 L1153.3 591.8 L1144.2 588.4 L1140.3 589.6 M1229.8 612.9 L1225.8 612.1 L1216.9 614.2 L1206 614.6 L1190.8 613.8 L1176.4 612.5 L1164.7 609.6 L1152.9 610.2 L1146 606.9 L1140.3 607 M1234.2 628.5 L1230.5 629.3 L1220.2 631.2 L1209.1 629.8 L1193.8 631.6 L1180.1 629.1 L1166.4 629.1 L1156.2 626.9 L1145 625.7 L1141.3 626 M1236.4 639.9 L1232.6 638.1 L1223 639.5 L1212.3 640.9 L1196.9 639.3 L1181.4 639.7 L1167 639 L1154 637.4 L1148.1 636.2 L1141.8 635.3 M1243.2 666.2 L1238.8 665.5 L1229 666.4 L1215.7 665.6 L1201.6 666.1 L1188.3 666.4 L1173.7 666.5 L1161.4 666.7 L1151.8 664.2 L1146.2 662.5 M1245.3 673.8 L1239.8 675.6 L1229.9 675.8 L1218.4 675.6 L1204.4 677.7 L1190.5 675.5 L1175.7 676.9 L1161.9 674.9 L1151.8 674.6 L1147.9 672.6 M1246.9 683.3 L1243.3 683.9 L1233.6 684.5 L1219.4 684.8 L1204.5 684.2 L1192.1 684.7 L1174.7 684.5 L1162.1 684.3 L1153.6 682.1 L1149.5 682.3 M1248.5 692.7 L1242.1 693.1 L1234.8 693.2 L1221.9 692.4 L1207.1 694.3 L1191.7 695.8 L1177.1 695 L1166.2 694.1 L1156.1 692.2 L1151.2 692.3 M1250.1 699.1 L1244.4 699.8 L1236.2 702.1 L1225.3 704.3 L1209 703.3 L1192.7 704.2 L1179.4 702 L1168.2 700.9 L1157 701.4 L1153.1 702.1 M1253.3 717.3 L1249.2 719.4 L1238.3 719.5 L1225.8 722.3 L1213.5 721.4 L1198.9 723.1 L1182 720.6 L1169.6 721.2 L1162 720.1 L1156.8 719.9 M1256.2 737.3 L1249.9 738.5 L1243.7 738.7 L1231.3 739.4 L1216.1 740 L1199.1 738.6 L1186.2 739.7 L1171.8 739.7 L1163.3 738 L1159.1 739 M1257.6 745.3 L1253.5 747.1 L1243.4 747 L1231 747.7 L1217.5 750.1 L1200.6 749.9 L1185.7 747.6 L1174.8 749.7 L1164.6 749.7 L1160.2 747.9 M1259 753.3 L1254.9 756.1 L1243.9 757.5 L1232.4 756.5 L1217.5 758.1 L1202.6 757.7 L1186.4 758.9 L1176 758.7 L1165.9 758.6 L1161.4 755 M1260.7 761.6 L1254.2 764.1 L1246.7 764.3 L1234.2 764.6 L1217.8 768.5 L1205 766.2 L1189.5 767.7 L1176.6 768.5 L1167.8 768.2 L1162.4 766.5 M1262.9 772.9 L1256.6 773.8 L1248.1 775.4 L1236.9 776.7 L1221.8 775.8 L1205.4 777.6 L1188.9 777.1 L1177.9 777.4 L1167.9 776.5 L1163.4 776.1 M1265.1 779.9 L1260.6 782.9 L1250.2 783 L1237.8 785.2 L1222 784.5 L1206.4 786.3 L1190.6 787.7 L1178.8 786.8 L1169.2 784.1 L1164.4 784.4 M1269.5 798.4 L1264.2 800 L1256.1 800.2 L1242.7 801.2 L1226.5 801.7 L1210.8 804 L1194.1 804.6 L1180.7 803.8 L1172.1 804.7 L1166.3 802.2 M1271.1 806 L1267.3 807.4 L1255.6 809.9 L1242.6 812.5 L1228.9 811.2 L1210.1 812.3 L1195.2 813.2 L1182.7 815.3 L1171.1 812.2 L1167.2 811.8 M1272.6 815.1 L1266.1 816.9 L1257.2 819.3 L1245.8 821.7 L1228.3 822 L1210.9 822.9 L1197.6 824.4 L1181.9 822.3 L1174.6 823.7 L1168.1 823.3 M1274 823.3 L1269.1 824.5 L1259.7 828.6 L1245 827.6 L1230.5 832.2 L1213.6 831.3 L1196.9 833.5 L1185.5 832.3 L1173.4 834.1 L1169 831.6 M1275.5 833.4 L1269.5 835.7 L1261.9 836.5 L1248 837.9 L1230.7 840.7 L1215.8 841.8 L1199.1 842.8 L1186.3 843.5 L1175.3 841.5 L1169.8 839.7 M1276.9 842.6 L1271.3 842.3 L1263.7 844.9 L1250.4 845.5 L1233 849.4 L1217.7 850.2 L1201.6 849.1 L1189.6 851.5 L1178.9 850.6 L1173.7 850.7 M1276.3 851.5 L1271.3 852.8 L1263 855.1 L1249.2 856.8 L1234.7 857.8 L1219.2 859.5 L1206.3 859.7 L1192 858.5 L1183.1 859 L1178.3 856.5 M1275.6 860.7 L1272.3 860.5 L1263.6 863.5 L1252.1 865.4 L1237.3 866.7 L1221.7 865.6 L1209.2 868.5 L1196.9 866.5 L1187.6 867 L1182.9 865.8 M1274.4 869.4 L1269.9 872.2 L1262.5 873.5 L1252.5 872.1 L1239.2 873.7 L1225.2 874.9 L1212.8 874.3 L1201.7 874.4 L1194.1 874.2 L1188.9 873.9 M1267 887.1 L1262.4 888.6 L1258.8 888.1 L1250.1 888 L1240.9 890.2 L1229.6 889 L1219.4 887.8 L1213.3 888.4 L1206.1 887.5 L1203 885 M1175 451.2 L1179.5 457 L1183.9 466.7 L1188.4 472.6 L1192.6 480.2 L1195.7 490.6 L1198.9 498.5 L1201.4 506.5 L1204 515.3 L1206.5 525.1 L1209.1 532.4 L1211.6 542.8 L1213.9 552.1 L1216.3 560.7 L1218.6 569.1 L1221 577.1 L1223.2 586.6 L1225.4 593.1 L1227.6 603.7 L1229.8 612.9 L1232 621.9 L1234.2 628.5 L1236.4 639.9 L1238.7 648 L1240.9 657.1 L1243.2 666.2 L1245.3 673.8 L1246.9 683.3 L1248.5 692.7 L1250.1 699.1 L1251.8 708 L1253.3 717.3 L1254.8 727.1 L1256.2 737.3 L1257.6 745.3 L1259 753.3 L1260.7 761.6 L1262.9 772.9 L1265.1 779.9 L1267.3 789.3 L1269.5 798.4 L1271.1 806 L1272.6 815.1 L1274 823.3 L1275.5 833.4 L1276.9 842.6 L1276.3 851.5 L1275.6 860.7 L1274.4 869.4 L1270.7 879.3 L1267 887.1 M1173 448.7 L1175.5 459.1 L1181.6 467.1 L1185.8 473.3 L1189.1 480.7 L1193.6 491 L1195.6 499.2 L1198.1 506.1 L1201.6 515 L1203.7 525.5 L1205.6 534.1 L1207.5 543.2 L1211 550.3 L1211.8 559.3 L1213.7 568 L1217.9 577.1 L1219.7 587 L1221.3 595 L1223.7 603.6 L1225.8 612.1 L1226.2 623 L1230.5 629.3 L1232.6 638.1 L1234.8 648.9 L1237.5 656.8 L1238.8 665.5 L1239.8 675.6 L1243.3 683.9 L1242.1 693.1 L1244.4 699.8 L1246.1 711.2 L1249.2 719.4 L1249.3 728.7 L1249.9 738.5 L1253.5 747.1 L1254.9 756.1 L1254.2 764.1 L1256.6 773.8 L1260.6 782.9 L1260.8 791.9 L1264.2 800 L1267.3 807.4 L1266.1 816.9 L1269.1 824.5 L1269.5 835.7 L1271.3 842.3 L1271.3 852.8 L1272.3 860.5 L1269.9 872.2 L1266.2 877.3 L1262.4 888.6 M1167.1 448.5 L1171.4 458 L1173.9 466.7 L1179.1 472 L1184.4 480.3 L1185.3 491.5 L1190.6 497.8 L1191 507.2 L1192.8 517.5 L1195.2 526.1 L1199.3 533.5 L1202.6 541.4 L1202.9 549.7 L1206.1 559 L1206 569.1 L1208 576.5 L1210.4 585.2 L1212.7 595.2 L1213.8 604.7 L1216.9 614.2 L1220.3 621.7 L1220.2 631.2 L1223 639.5 L1224.6 649.5 L1228.2 656.2 L1229 666.4 L1229.9 675.8 L1233.6 684.5 L1234.8 693.2 L1236.2 702.1 L1237.4 712.6 L1238.3 719.5 L1242.3 727.7 L1243.7 738.7 L1243.4 747 L1243.9 757.5 L1246.7 764.3 L1248.1 775.4 L1250.2 783 L1253 791.6 L1256.1 800.2 L1255.6 809.9 L1257.2 819.3 L1259.7 828.6 L1261.9 836.5 L1263.7 844.9 L1263 855.1 L1263.6 863.5 L1262.5 873.5 L1261.2 880 L1258.8 888.1 M1148.4 446.7 L1152.8 454.1 L1158.1 462 L1161.1 470.7 L1164.2 478.5 L1169.3 485.7 L1169.8 496.8 L1172 504.1 L1176.2 512.1 L1177.8 522.5 L1180.8 531.6 L1180.9 541.7 L1181.8 549.5 L1184.5 557.2 L1184.9 569 L1188.1 575.7 L1186.8 586.8 L1190.4 596 L1191.3 604.7 L1190.8 613.8 L1192.7 621.7 L1193.8 631.6 L1196.9 639.3 L1196.8 648.1 L1201.2 657 L1201.6 666.1 L1204.4 677.7 L1204.5 684.2 L1207.1 694.3 L1209 703.3 L1210.4 713.5 L1213.5 721.4 L1214.8 730.4 L1216.1 740 L1217.5 750.1 L1217.5 758.1 L1217.8 768.5 L1221.8 775.8 L1222 784.5 L1223.9 794.7 L1226.5 801.7 L1228.9 811.2 L1228.3 822 L1230.5 832.2 L1230.7 840.7 L1233 849.4 L1234.7 857.8 L1237.3 866.7 L1239.2 873.7 L1240.5 881.2 L1240.9 890.2 M1139.5 444.1 L1140.9 450.7 L1147.1 458 L1150 466.4 L1155.9 476.4 L1158.1 485.6 L1162 492.3 L1161.3 501.3 L1163.4 512.1 L1167.5 520.7 L1169.5 530.3 L1170.8 538.3 L1170 548.5 L1171.7 556.9 L1174.6 565.6 L1173.8 574.5 L1176.6 584.2 L1176 594.9 L1177.1 603.7 L1176.4 612.5 L1179.9 622.7 L1180.1 629.1 L1181.4 639.7 L1182.1 648.2 L1183.8 657.9 L1188.3 666.4 L1190.5 675.5 L1192.1 684.7 L1191.7 695.8 L1192.7 704.2 L1194.4 713 L1198.9 723.1 L1199.8 731.3 L1199.1 738.6 L1200.6 749.9 L1202.6 757.7 L1205 766.2 L1205.4 777.6 L1206.4 786.3 L1207.2 794.9 L1210.8 804 L1210.1 812.3 L1210.9 822.9 L1213.6 831.3 L1215.8 841.8 L1217.7 850.2 L1219.2 859.5 L1221.7 865.6 L1225.2 874.9 L1229 881.5 L1229.6 889 M1130.5 439.7 L1134.4 447 L1135.2 455.7 L1140.1 465.7 L1144.1 475 L1148.8 482.7 L1150.3 492.3 L1151.3 501.1 L1153.3 509.9 L1155.6 518.5 L1156.8 526.9 L1157.9 537.9 L1159.8 545.3 L1162.6 554.2 L1163.5 563.5 L1163.6 574.5 L1163 583.6 L1162.1 592.5 L1162.6 603.3 L1164.7 609.6 L1165.7 621.7 L1166.4 629.1 L1167 639 L1169.6 646.4 L1171 657.7 L1173.7 666.5 L1175.7 676.9 L1174.7 684.5 L1177.1 695 L1179.4 702 L1182.4 713.7 L1182 720.6 L1185.7 730.9 L1186.2 739.7 L1185.7 747.6 L1186.4 758.9 L1189.5 767.7 L1188.9 777.1 L1190.6 787.7 L1192.2 795.6 L1194.1 804.6 L1195.2 813.2 L1197.6 824.4 L1196.9 833.5 L1199.1 842.8 L1201.6 849.1 L1206.3 859.7 L1209.2 868.5 L1212.8 874.3 L1216.9 882.8 L1219.4 887.8 M1121.8 437.1 L1124.7 443.8 L1127.3 454.8 L1132.5 461.2 L1135.2 472.4 L1138.2 479.6 L1143.4 490.1 L1145.3 496.3 L1146.4 506.2 L1146.6 514.7 L1148.5 525 L1149.6 534.4 L1151.2 543.6 L1151.7 552.2 L1151 562.5 L1151.2 572.9 L1153.7 582.1 L1153.3 591.8 L1152.9 600.6 L1152.9 610.2 L1153.6 619.5 L1156.2 626.9 L1154 637.4 L1157.8 645.7 L1157.3 656.4 L1161.4 666.7 L1161.9 674.9 L1162.1 684.3 L1166.2 694.1 L1168.2 700.9 L1169.8 710.2 L1169.6 721.2 L1172.2 731.7 L1171.8 739.7 L1174.8 749.7 L1176 758.7 L1176.6 768.5 L1177.9 777.4 L1178.8 786.8 L1180.6 795.4 L1180.7 803.8 L1182.7 815.3 L1181.9 822.3 L1185.5 832.3 L1186.3 843.5 L1189.6 851.5 L1192 858.5 L1196.9 866.5 L1201.7 874.4 L1206.2 881.1 L1213.3 888.4 M1114.9 433.9 L1118.1 443.7 L1121.7 452.8 L1125.4 459.9 L1129.3 468.4 L1132.7 477.7 L1137.7 485.8 L1138.8 496.8 L1139.4 504 L1141.2 515.4 L1142.6 522.9 L1143.1 533.7 L1142.2 543.4 L1145.8 552.6 L1145.9 559.9 L1143.3 570.5 L1144.8 580.9 L1144.2 588.4 L1143.5 597.5 L1146 606.9 L1143.8 617.4 L1145 625.7 L1148.1 636.2 L1149.1 647.3 L1150.9 654.3 L1151.8 664.2 L1151.8 674.6 L1153.6 682.1 L1156.1 692.2 L1157 701.4 L1159.8 709.8 L1162 720.1 L1163.8 728.8 L1163.3 738 L1164.6 749.7 L1165.9 758.6 L1167.8 768.2 L1167.9 776.5 L1169.2 784.1 L1171.3 795.3 L1172.1 804.7 L1171.1 812.2 L1174.6 823.7 L1173.4 834.1 L1175.3 841.5 L1178.9 850.6 L1183.1 859 L1187.6 867 L1194.1 874.2 L1199.3 880.1 L1206.1 887.5 M1112 432 L1115.6 439.2 L1119.3 450 L1122.9 456.6 L1126.5 466.3 L1130.2 475.3 L1132.8 483.3 L1134.4 494.5 L1136.1 504.5 L1137.7 513.3 L1139.1 523.5 L1139.6 532.7 L1140 541.6 L1140.5 551.3 L1141 560.6 L1140.8 568.4 L1140.5 578.6 L1140.3 589.6 L1140.1 598.2 L1140.3 607 L1140.8 614.9 L1141.3 626 L1141.8 635.3 L1142.8 645 L1144.5 655 L1146.2 662.5 L1147.9 672.6 L1149.5 682.3 L1151.2 692.3 L1153.1 702.1 L1155 708.5 L1156.8 719.9 L1158 727.1 L1159.1 739 L1160.2 747.9 L1161.4 755 L1162.4 766.5 L1163.4 776.1 L1164.4 784.4 L1165.4 792.8 L1166.3 802.2 L1167.2 811.8 L1168.1 823.3 L1169 831.6 L1169.8 839.7 L1173.7 850.7 L1178.3 856.5 L1182.9 865.8 L1188.9 873.9 L1195.9 879.4 L1203 885" fill="none" stroke="#ffffff" stroke-width="1.2" opacity="1"/>
<path d="M1201.4 506.5 L1198.1 506.1 L1191 507.2 L1183.9 505.2 L1172 504.1 L1161.3 501.3 L1151.3 501.1 L1145.3 496.3 L1138.8 496.8 L1134.4 494.5 M1206.5 525.1 L1203.7 525.5 L1195.2 526.1 L1188.8 524 L1177.8 522.5 L1167.5 520.7 L1155.6 518.5 L1146.6 514.7 L1141.2 515.4 L1137.7 513.3 M1209.1 532.4 L1205.6 534.1 L1199.3 533.5 L1190.1 533.5 L1180.8 531.6 L1169.5 530.3 L1156.8 526.9 L1148.5 525 L1142.6 522.9 L1139.1 523.5 M1216.3 560.7 L1211.8 559.3 L1206.1 559 L1197.3 560.1 L1184.5 557.2 L1171.7 556.9 L1162.6 554.2 L1151.7 552.2 L1145.8 552.6 L1140.5 551.3 M1251.8 708 L1246.1 711.2 L1237.4 712.6 L1224 711.1 L1210.4 713.5 L1194.4 713 L1182.4 713.7 L1169.8 710.2 L1159.8 709.8 L1155 708.5 M1254.8 727.1 L1249.3 728.7 L1242.3 727.7 L1228.5 728.9 L1214.8 730.4 L1199.8 731.3 L1185.7 730.9 L1172.2 731.7 L1163.8 728.8 L1158 727.1 M1270.7 879.3 L1266.2 877.3 L1261.2 880 L1250.9 881.9 L1240.5 881.2 L1229 881.5 L1216.9 882.8 L1206.2 881.1 L1199.3 880.1 L1195.9 879.4" fill="none" stroke="#b4f4ee" stroke-width="1.2" opacity="1"/>
<path d="M1227.6 603.7 L1223.7 603.6 L1213.8 604.7 L1203.6 605.6 L1191.3 604.7 L1177.1 603.7 L1162.6 603.3 L1152.9 600.6 L1143.5 597.5 L1140.1 598.2 M1232 621.9 L1226.2 623 L1220.3 621.7 L1206.4 621.2 L1192.7 621.7 L1179.9 622.7 L1165.7 621.7 L1153.6 619.5 L1143.8 617.4 L1140.8 614.9 M1238.7 648 L1234.8 648.9 L1224.6 649.5 L1211.8 649.5 L1196.8 648.1 L1182.1 648.2 L1169.6 646.4 L1157.8 645.7 L1149.1 647.3 L1142.8 645 M1240.9 657.1 L1237.5 656.8 L1228.2 656.2 L1215.7 658.5 L1201.2 657 L1183.8 657.9 L1171 657.7 L1157.3 656.4 L1150.9 654.3 L1144.5 655 M1267.3 789.3 L1260.8 791.9 L1253 791.6 L1238.2 792.3 L1223.9 794.7 L1207.2 794.9 L1192.2 795.6 L1180.6 795.4 L1171.3 795.3 L1165.4 792.8 M1158.9 448.3 L1162.8 455.9 L1166 463.8 L1171.7 473 L1175.5 481.2 L1178.7 488.8 L1180.2 496.4 L1183.9 505.2 L1184.7 516.5 L1188.8 524 L1190.1 533.5 L1192.5 543.2 L1193 550.2 L1197.3 560.1 L1196.3 567.6 L1200 577.5 L1201.3 587.1 L1201.5 594.8 L1203.6 605.6 L1206 614.6 L1206.4 621.2 L1209.1 629.8 L1212.3 640.9 L1211.8 649.5 L1215.7 658.5 L1215.7 665.6 L1218.4 675.6 L1219.4 684.8 L1221.9 692.4 L1225.3 704.3 L1224 711.1 L1225.8 722.3 L1228.5 728.9 L1231.3 739.4 L1231 747.7 L1232.4 756.5 L1234.2 764.6 L1236.9 776.7 L1237.8 785.2 L1238.2 792.3 L1242.7 801.2 L1242.6 812.5 L1245.8 821.7 L1245 827.6 L1248 837.9 L1250.4 845.5 L1249.2 856.8 L1252.1 865.4 L1252.5 872.1 L1250.9 881.9 L1250.1 888" fill="none" stroke="#a8ee6a" stroke-width="1.2" opacity="1"/>

<path d="M1175 450 L1192 480 L1199 499 L1211 540 L1221 577 L1233 625 L1245 672" fill="none" stroke="#a8ee60" stroke-width="1.3" opacity=".9"/>
<g clip-path="url(#ccfR)">
<path d="M1267 886 L1266 915 L1263 943 L1213 941 L1207 915 L1203 886Z" fill="#b4e49c" opacity=".9"/>
<ellipse cx="1232" cy="925" rx="14" ry="12" fill="#8cf0d8" filter="url(#b4)" opacity=".9"/>
<ellipse cx="1258" cy="927" rx="7" ry="14" fill="#d0f040" filter="url(#b4)" opacity=".9"/>
</g>
<path d="M1267 886 L1264.2 887.5 L1259.2 888.9 L1252.3 890 L1244 890.8 L1235 891 L1226 890.8 L1217.7 890 L1210.8 888.9 L1205.8 887.5 L1203 886 M1265.4 920.3 L1262.9 921.8 L1258.4 923.1 L1252.2 924.1 L1244.8 924.6 L1236.7 924.7 L1228.6 924.3 L1221.2 923.5 L1215 922.3 L1210.5 920.8 L1208 919.2 M1263 943 L1260.8 944.5 L1256.9 945.7 L1251.5 946.6 L1245 947 L1238 947 L1231 946.5 L1224.5 945.5 L1219.1 944.2 L1215.2 942.6 L1213 941 M1244 890.8 L1244.3 902.1 L1244.6 913.4 L1244.8 924.6 L1244.9 935.8 L1245 947 M1235 891 L1235.6 902.3 L1236.1 913.5 L1236.7 924.7 L1237.4 935.9 L1238 947 M1217.7 890 L1218.8 901.2 L1219.9 912.4 L1221.2 923.5 L1222.8 934.5 L1224.5 945.5 M1210.8 888.9 L1212.1 900.1 L1213.4 911.2 L1215 922.3 L1217 933.2 L1219.1 944.2 M1205.8 887.5 L1207.2 898.6 L1208.7 909.7 L1210.5 920.8 L1212.8 931.7 L1215.2 942.6 M1203 886 L1204.5 897.1 L1206.1 908.2 L1208 919.2 L1210.5 930.1 L1213 941" fill="none" stroke="#e6f03c" stroke-width="1.1" opacity="1"/>
<path d="M1266.6 897.4 L1263.9 899 L1259.1 900.3 L1252.4 901.4 L1244.3 902.1 L1235.6 902.3 L1226.8 902 L1218.8 901.2 L1212.1 900.1 L1207.2 898.6 L1204.5 897.1 M1266.2 908.9 L1263.6 910.4 L1258.9 911.7 L1252.4 912.7 L1244.6 913.4 L1236.1 913.5 L1227.7 913.2 L1219.9 912.4 L1213.4 911.2 L1208.7 909.7 L1206.1 908.2 M1267 886 L1266.6 897.4 L1266.2 908.9 L1265.4 920.3 L1264.2 931.6 L1263 943 M1252.3 890 L1252.4 901.4 L1252.4 912.7 L1252.2 924.1 L1251.9 935.3 L1251.5 946.6 M1226 890.8 L1226.8 902 L1227.7 913.2 L1228.6 924.3 L1229.8 935.4 L1231 946.5" fill="none" stroke="#9cea50" stroke-width="1.1" opacity="1"/>
<path d="M1264.2 931.6 L1261.9 933.1 L1257.7 934.4 L1251.9 935.3 L1244.9 935.8 L1237.4 935.9 L1229.8 935.4 L1222.8 934.5 L1217 933.2 L1212.8 931.7 L1210.5 930.1 M1264.2 887.5 L1263.9 899 L1263.6 910.4 L1262.9 921.8 L1261.9 933.1 L1260.8 944.5 M1259.2 888.9 L1259.1 900.3 L1258.9 911.7 L1258.4 923.1 L1257.7 934.4 L1256.9 945.7" fill="none" stroke="#ffffff" stroke-width="1.1" opacity="1"/>

<path d="M974 389.3 L974.9 390.4 L973.7 392.4 L974.4 391.7 L973.2 391.7 L973.6 392.7 L973.8 392.4 L973.5 389.9 L974 390.8 M966.2 393.1 L967.3 395.2 L966.8 396.7 L967.7 397.9 L968.5 398.3 L969.8 397.4 L969.8 398.1 L970.3 396.4 L970.5 397.3 M951 402.2 L951.9 404.7 L955 406.4 L957 408.3 L958.4 409.5 L959.2 410.7 L962 409.6 L962.8 411.1 L965.2 410.8 M943.6 408 L945.9 409.4 L949.2 412.4 L951.5 414.2 L955.1 415.2 L958.4 417.1 L960.7 417.5 L962.1 417.7 L965.8 419.2 M927.9 414.9 L932.2 418.4 L938 420.3 L943.3 424.9 L947.7 427.5 L952.9 428.8 L957.8 431.8 L962.4 431.9 L966.9 434.2 M919.8 418.4 L925.5 421.1 L931.6 424.7 L937.6 428.1 L944.1 431.5 L950.5 434.1 L955.8 437.8 L960.9 440.2 L967.4 442.3 M911.8 421.5 L918.2 425.6 L926.5 430.1 L932.3 433.5 L940.6 436.7 L946.9 441.1 L953.8 443.2 L960.2 447.8 L968 449.8 M903.7 424.2 L911.7 428.6 L919.1 435 L928.6 438.3 L935.8 442.3 L943.9 447.2 L952.9 450.8 L961.2 455.3 L968.6 457.8 M895.9 438.5 L904.5 443.2 L915.2 447.6 L923.4 453.3 L933.9 456.7 L942.5 461.8 L951.4 466.5 L959.8 469.7 L969.9 472.8 M890.1 473.1 L901.4 478.1 L910.5 482.8 L921.6 485.7 L931 490.3 L942.3 493.3 L952.7 497.9 L962.4 500.7 L972.5 503.9 M890.7 481 L901.5 485.7 L911.8 491 L920.9 493.6 L933 497.9 L943.1 502 L952.2 504.6 L963 508.9 L973.5 510.9 M891.2 488.9 L901.2 495.1 L912.5 498.2 L922.2 502.7 L933.2 506.3 L942.9 510.3 L953.1 513.4 L964.5 516.6 L974.4 518.6 M891.7 498.3 L902.3 502.4 L912.4 507.3 L922.8 510.6 L934.3 514.1 L944.8 517.5 L954.6 521.6 L964.8 524.7 L975.4 528 M892.8 516.6 L902.5 520.4 L913.5 524.5 L923.9 527.3 L934.4 531.8 L945.8 535.4 L955.7 536.6 L967 539.6 L976.9 543.1 M896.8 551 L907.6 553.6 L917.4 558.6 L927.4 561.2 L937.9 564.3 L948.4 566.6 L959.8 569.7 L970.3 571.2 L979.7 573.6 M897.9 559.1 L909 562.6 L918.9 565.7 L928.9 569 L940 572.1 L950.3 575.1 L959.4 577.4 L970.9 579.8 L980.4 582 M900.5 577.6 L911.5 580.3 L920.7 583.1 L930 586.9 L941.8 588.9 L951.2 591.7 L960.5 593 L971.1 595.3 L981.7 596.6 M901.8 585.5 L912.7 588.3 L921.2 590.6 L932.8 594.3 L942.1 596 L951.5 598.2 L963.2 600.3 L972.1 602.9 L982.6 604.7 M903.1 593.4 L913.4 597.3 L924.2 599.1 L932.8 601.9 L942.9 604.5 L952.4 607.9 L962.9 609.6 L974.1 611.3 L983.5 611.3 M904.3 602.8 L915 605.8 L924.5 608.2 L935 611 L944.1 613.3 L954.3 614.7 L964.7 617.7 L974.7 617.6 L984.4 619.8 M905.1 611.8 L914.4 614.1 L925.6 616.9 L934.9 618.3 L945.7 620.8 L955.5 623.4 L965.8 624.2 L976.3 626.9 L985.4 628.4 M906 619.3 L916.5 622.4 L926.5 625.6 L935.9 628.5 L946 629.6 L956.6 630.8 L967 632.6 L977.1 633.5 L986.3 634.7 M906.9 628.8 L916.4 631.1 L926.3 634.1 L937.4 636.3 L946.3 637 L957.2 638.7 L967.5 641 L977.9 642.7 L987.1 643.4 M908.6 645.9 L917.8 648.4 L928.4 650.4 L938.9 652.1 L949.2 653.8 L957.7 656.4 L967.5 657.4 L977.5 657.7 L987.9 658.6 M909.9 671.8 L919.9 674.5 L929.4 676.3 L939.4 678.3 L949.6 679.5 L959.5 680.5 L969.1 680.2 L978.9 681.1 L989.1 681 M910.2 681.4 L920.2 682.7 L930.5 683.6 L939.2 686.5 L948.9 688 L959.8 689.2 L970.4 688.7 L979.3 689.2 L989.5 690.2 M910.6 689.5 L920.9 692.3 L930.9 693 L940.8 694.4 L950.4 695.4 L961 697.3 L970.2 697 L979.2 697.4 L989.9 698.3 M910.9 697.8 L921.4 699.5 L931.2 701 L940.9 703.3 L949.6 704.5 L960.5 704 L970 705 L980.8 704.5 L990.2 704.3 M911 706.5 L921.2 708.4 L931.4 710.4 L940.6 711.3 L950.1 712.2 L961 712.1 L971 712.2 L981.6 713.1 L990.6 713.8 M911 724 L921 725.1 L930.5 727.4 L940.1 728.1 L951 728.9 L960.7 728.8 L970.6 727.9 L982 728.5 L991.3 728.1 M911 734.1 L920.8 734.5 L930.4 735.2 L942 736.9 L952 737.6 L960.9 736.1 L970.7 737.2 L981.7 736.4 L991.6 736.7 M911 741.4 L921.3 742.8 L930.5 744.5 L940.7 745.2 L952 744.9 L961.5 744.5 L971 745.3 L981.6 744.6 L992 743.7 M973.7 392.4 L966.8 396.7 L959.7 400.9 L955 406.4 L949.2 412.4 L943.3 417.2 L938 420.3 L931.6 424.7 L926.5 430.1 L919.1 435 L914.7 440.7 L915.2 447.6 L912.7 457.2 L912.9 464.8 L911.9 473.5 L910.5 482.8 L911.8 491 L912.5 498.2 L912.4 507.3 L914 515.9 L913.5 524.5 L914.1 533.1 L915.5 540.6 L916.1 549.2 L917.4 558.6 L918.9 565.7 L920.3 575 L920.7 583.1 L921.2 590.6 L924.2 599.1 L924.5 608.2 L925.6 616.9 L926.5 625.6 L926.3 634.1 L926.8 642.5 L928.4 650.4 L929.8 658.4 L929.4 668.3 L929.4 676.3 L930.5 683.6 L930.9 693 L931.2 701 L931.4 710.4 L931.2 718.2 L930.5 727.4 L930.4 735.2 L930.5 744.5 M974.4 391.7 L967.7 397.9 L960.9 402.7 L957 408.3 L951.5 414.2 L948 419.4 L943.3 424.9 L937.6 428.1 L932.3 433.5 L928.6 438.3 L923.5 443.9 L923.4 453.3 L923.3 461.5 L922 469.8 L921.7 477.1 L921.6 485.7 L920.9 493.6 L922.2 502.7 L922.8 510.6 L924.3 519.3 L923.9 527.3 L925 537 L925.4 544.9 L926.9 553.6 L927.4 561.2 L928.9 569 L930.2 577.4 L930 586.9 L932.8 594.3 L932.8 601.9 L935 611 L934.9 618.3 L935.9 628.5 L937.4 636.3 L938 644.5 L938.9 652.1 L937.9 660.8 L939.5 668.5 L939.4 678.3 L939.2 686.5 L940.8 694.4 L940.9 703.3 L940.6 711.3 L941.4 720 L940.1 728.1 L942 736.9 L940.7 745.2 M973.2 391.7 L968.5 398.3 L962.6 403.9 L958.4 409.5 L955.1 415.2 L951 421 L947.7 427.5 L944.1 431.5 L940.6 436.7 L935.8 442.3 L934.4 449.3 L933.9 456.7 L932.9 466.7 L932.5 473.8 L931.1 481.2 L931 490.3 L933 497.9 L933.2 506.3 L934.3 514.1 L933.9 523.5 L934.4 531.8 L936.2 539.6 L936.7 546.9 L937.9 555.9 L937.9 564.3 L940 572.1 L940.6 580.6 L941.8 588.9 L942.1 596 L942.9 604.5 L944.1 613.3 L945.7 620.8 L946 629.6 L946.3 637 L947.6 646 L949.2 653.8 L949.2 662.7 L949 670.3 L949.6 679.5 L948.9 688 L950.4 695.4 L949.6 704.5 L950.1 712.2 L951.3 719.7 L951 728.9 L952 737.6 L952 744.9 M973.6 392.7 L969.8 397.4 L964.3 403.4 L959.2 410.7 L958.4 417.1 L955.9 423.6 L952.9 428.8 L950.5 434.1 L946.9 441.1 L943.9 447.2 L942.5 454 L942.5 461.8 L941.4 470.3 L942.5 477.4 L940.8 486.7 L942.3 493.3 L943.1 502 L942.9 510.3 L944.8 517.5 L944.9 527.3 L945.8 535.4 L947.1 541.6 L947.9 549.9 L946.9 558.5 L948.4 566.6 L950.3 575.1 L950 584 L951.2 591.7 L951.5 598.2 L952.4 607.9 L954.3 614.7 L955.5 623.4 L956.6 630.8 L957.2 638.7 L958.4 647.4 L957.7 656.4 L959.5 664.9 L959.6 671.8 L959.5 680.5 L959.8 689.2 L961 697.3 L960.5 704 L961 712.1 L961.9 721.5 L960.7 728.8 L960.9 736.1 L961.5 744.5 M973.8 392.4 L969.8 398.1 L964.3 403.7 L962 409.6 L960.7 417.5 L959 423.4 L957.8 431.8 L955.8 437.8 L953.8 443.2 L952.9 450.8 L950.5 457.5 L951.4 466.5 L952.1 473.3 L951.5 481 L950.8 489.9 L952.7 497.9 L952.2 504.6 L953.1 513.4 L954.6 521.6 L954.6 529.1 L955.7 536.6 L956.4 545.5 L956.8 552.9 L958.8 561.2 L959.8 569.7 L959.4 577.4 L961.1 585.6 L960.5 593 L963.2 600.3 L962.9 609.6 L964.7 617.7 L965.8 624.2 L967 632.6 L967.5 641 L966.8 649.8 L967.5 657.4 L968.9 664.4 L968.8 673.7 L969.1 680.2 L970.4 688.7 L970.2 697 L970 705 L971 712.2 L970.8 721.8 L970.6 727.9 L970.7 737.2 L971 745.3 M973.5 389.9 L970.3 396.4 L966.2 404.6 L962.8 411.1 L962.1 417.7 L963.3 424.6 L962.4 431.9 L960.9 440.2 L960.2 447.8 L961.2 455.3 L960 462.2 L959.8 469.7 L961.8 477 L960.6 484.8 L961.4 493.4 L962.4 500.7 L963 508.9 L964.5 516.6 L964.8 524.7 L966.1 533.1 L967 539.6 L966.2 548.7 L967.6 555.8 L968.4 564 L970.3 571.2 L970.9 579.8 L971.5 587.6 L971.1 595.3 L972.1 602.9 L974.1 611.3 L974.7 617.6 L976.3 626.9 L977.1 633.5 L977.9 642.7 L978.1 650.8 L977.5 657.7 L978.2 664.8 L978.4 673.5 L978.9 681.1 L979.3 689.2 L979.2 697.4 L980.8 704.5 L981.6 713.1 L981.9 720.6 L982 728.5 L981.7 736.4 L981.6 744.6 M974 390.8 L970.5 397.3 L967.1 404.7 L965.2 410.8 L965.8 419.2 L966.3 425.9 L966.9 434.2 L967.4 442.3 L968 449.8 L968.6 457.8 L969.2 466 L969.9 472.8 L970.5 481.8 L971.1 487.7 L971.7 497.1 L972.5 503.9 L973.5 510.9 L974.4 518.6 L975.4 528 L976.3 534.9 L976.9 543.1 L977.6 549.7 L978.3 559 L979 565 L979.7 573.6 L980.4 582 L981 588.9 L981.7 596.6 L982.6 604.7 L983.5 611.3 L984.4 619.8 L985.4 628.4 L986.3 634.7 L987.1 643.4 L987.5 651.9 L987.9 658.6 L988.3 666.2 L988.7 675.1 L989.1 681 L989.5 690.2 L989.9 698.3 L990.2 704.3 L990.6 713.8 L990.9 720.1 L991.3 728.1 L991.6 736.7 L992 743.7" fill="none" stroke="#ffffff" stroke-width="1.2" opacity="1"/>
<path d="M958.5 398.5 L958.9 398.7 L959.7 400.9 L960.9 402.7 L962.6 403.9 L964.3 403.4 L964.3 403.7 L966.2 404.6 L967.1 404.7 M897.5 428.6 L905.8 435.1 L914.7 440.7 L923.5 443.9 L934.4 449.3 L942.5 454 L950.5 457.5 L960 462.2 L969.2 466 M892.7 455.4 L903.5 461 L912.9 464.8 L922 469.8 L932.5 473.8 L942.5 477.4 L951.5 481 L960.6 484.8 L971.1 487.7 M907.7 638 L917.7 639.4 L926.8 642.5 L938 644.5 L947.6 646 L958.4 647.4 L966.8 649.8 L978.1 650.8 L987.5 651.9 M909.2 654.2 L919.7 657.8 L929.8 658.4 L937.9 660.8 L949.2 662.7 L959.5 664.9 L968.9 664.4 L978.2 664.8 L988.3 666.2 M911 716.1 L920.4 717.7 L931.2 718.2 L941.4 720 L951.3 719.7 L961.9 721.5 L970.8 721.8 L981.9 720.6 L990.9 720.1 M974 389.3 L966.2 393.1 L958.5 398.5 L951 402.2 L943.6 408 L935.9 410.5 L927.9 414.9 L919.8 418.4 L911.8 421.5 L903.7 424.2 L897.5 428.6 L895.9 438.5 L894.3 447.2 L892.7 455.4 L891.1 464 L890.1 473.1 L890.7 481 L891.2 488.9 L891.7 498.3 L892.2 507 L892.8 516.6 L893.6 524.7 L894.7 533.6 L895.8 541.3 L896.8 551 L897.9 559.1 L899.2 568.2 L900.5 577.6 L901.8 585.5 L903.1 593.4 L904.3 602.8 L905.1 611.8 L906 619.3 L906.9 628.8 L907.7 638 L908.6 645.9 L909.2 654.2 L909.5 664 L909.9 671.8 L910.2 681.4 L910.6 689.5 L910.9 697.8 L911 706.5 L911 716.1 L911 724 L911 734.1 L911 741.4" fill="none" stroke="#b4f4ee" stroke-width="1.2" opacity="1"/>
<path d="M935.9 410.5 L940 413.6 L943.3 417.2 L948 419.4 L951 421 L955.9 423.6 L959 423.4 L963.3 424.6 L966.3 425.9 M894.3 447.2 L904.3 451.6 L912.7 457.2 L923.3 461.5 L932.9 466.7 L941.4 470.3 L952.1 473.3 L961.8 477 L970.5 481.8 M891.1 464 L901.5 468.5 L911.9 473.5 L921.7 477.1 L931.1 481.2 L940.8 486.7 L950.8 489.9 L961.4 493.4 L971.7 497.1 M892.2 507 L901.9 511 L914 515.9 L924.3 519.3 L933.9 523.5 L944.9 527.3 L954.6 529.1 L966.1 533.1 L976.3 534.9 M893.6 524.7 L904 527.8 L914.1 533.1 L925 537 L936.2 539.6 L947.1 541.6 L956.4 545.5 L966.2 548.7 L977.6 549.7 M894.7 533.6 L904.7 537 L915.5 540.6 L925.4 544.9 L936.7 546.9 L947.9 549.9 L956.8 552.9 L967.6 555.8 L978.3 559 M895.8 541.3 L906.3 546.1 L916.1 549.2 L926.9 553.6 L937.9 555.9 L946.9 558.5 L958.8 561.2 L968.4 564 L979 565 M899.2 568.2 L909.7 570.7 L920.3 575 L930.2 577.4 L940.6 580.6 L950 584 L961.1 585.6 L971.5 587.6 L981 588.9 M909.5 664 L919.1 664.9 L929.4 668.3 L939.5 668.5 L949 670.3 L959.6 671.8 L968.8 673.7 L978.4 673.5 L988.7 675.1 M974.9 390.4 L967.3 395.2 L958.9 398.7 L951.9 404.7 L945.9 409.4 L940 413.6 L932.2 418.4 L925.5 421.1 L918.2 425.6 L911.7 428.6 L905.8 435.1 L904.5 443.2 L904.3 451.6 L903.5 461 L901.5 468.5 L901.4 478.1 L901.5 485.7 L901.2 495.1 L902.3 502.4 L901.9 511 L902.5 520.4 L904 527.8 L904.7 537 L906.3 546.1 L907.6 553.6 L909 562.6 L909.7 570.7 L911.5 580.3 L912.7 588.3 L913.4 597.3 L915 605.8 L914.4 614.1 L916.5 622.4 L916.4 631.1 L917.7 639.4 L917.8 648.4 L919.7 657.8 L919.1 664.9 L919.9 674.5 L920.2 682.7 L920.9 692.3 L921.4 699.5 L921.2 708.4 L920.4 717.7 L921 725.1 L920.8 734.5 L921.3 742.8" fill="none" stroke="#a8ee6a" stroke-width="1.2" opacity="1"/>

<path d="M974 390 L965 408 L968 450 L972 500 L976 532 L982 600 L987 641 L990 700 L992 744" fill="none" stroke="#8ee860" stroke-width="1.6"/>
<path d="M974 390 C971.7 391.2 965.8 393.7 960 397 C954.2 400.3 949.3 405 939 410 C928.7 415 910.8 420.3 898 427 C885.2 433.7 870.8 441.2 862 450 C853.2 458.8 849 471.8 845 480 C841 488.2 839.2 495.8 838 499" fill="none" stroke="#b6f050" stroke-width="1.6"/>
<path d="M896 560.1 L895.3 559.7 L897.1 559.8 L898 560.1 M896.2 569.6 L897.6 571.3 L898.6 570.8 L899.4 567.9 M896.7 587 L898.4 589.2 L901.2 589.4 L902.1 587.2 M896.9 598.7 L898.7 596.3 L901 597.5 L903.4 597 M896.7 605.8 L897.9 607.7 L901 607.6 L904.5 605.4 M896.2 614.9 L899.3 617.1 L901.5 617.1 L905.4 613 M895.7 624.2 L899.6 626 L903.1 626.2 L906.3 622.5 M895.3 633.2 L899.4 634.3 L902.9 633.7 L907.2 633.6 M894.3 643.2 L899.5 644.2 L902.9 644.4 L908.2 640.8 M892.7 652.4 L897.2 653.7 L904.1 651.9 L909 649.5 M891 662.5 L896.6 662.4 L903.7 660 L909.4 658.4 M889.3 672.4 L897.3 670.2 L902.1 670.4 L909.8 669.9 M887.7 680 L896.5 679.4 L903.9 678.4 L910.1 678.4 M878.1 737 L888.9 735.2 L901.3 735.6 L911 733.4 M877 744.4 L887.2 743.9 L899 742.9 L911 742.2 M896 560.1 L896.2 569.6 L896.5 579.8 L896.7 587 L896.9 598.7 L896.7 605.8 L896.2 614.9 L895.7 624.2 L895.3 633.2 L894.3 643.2 L892.7 652.4 L891 662.5 L889.3 672.4 L887.7 680 L886 691.2 L884.2 698.3 L882.4 708.3 L880.6 718.4 L879.2 725 L878.1 737 L877 744.4 M897.1 559.8 L898.6 570.8 L900.3 579.3 L901.2 589.4 L901 597.5 L901 607.6 L901.5 617.1 L903.1 626.2 L902.9 633.7 L902.9 644.4 L904.1 651.9 L903.7 660 L902.1 670.4 L903.9 678.4 L901.9 690.3 L901.1 697.7 L901.3 706.2 L901.8 716.5 L901.8 726.9 L901.3 735.6 L899 742.9 M898 560.1 L899.4 567.9 L900.7 577.9 L902.1 587.2 L903.4 597 L904.5 605.4 L905.4 613 L906.3 622.5 L907.2 633.6 L908.2 640.8 L909 649.5 L909.4 658.4 L909.8 669.9 L910.1 678.4 L910.5 688.4 L910.9 697.1 L911 704.8 L911 714 L911 723.1 L911 733.4 L911 742.2" fill="none" stroke="#ffffff" stroke-width="1.1" opacity="0.9"/>
<path d="M896.5 579.8 L899.2 579.6 L900.3 579.3 L900.7 577.9 M886 691.2 L894.9 691 L901.9 690.3 L910.5 688.4 M884.2 698.3 L893.9 700.2 L901.1 697.7 L910.9 697.1 M882.4 708.3 L893.2 707.9 L901.3 706.2 L911 704.8 M880.6 718.4 L890 718.4 L901.8 716.5 L911 714 M879.2 725 L888.7 727.4 L901.8 726.9 L911 723.1 M895.3 559.7 L897.6 571.3 L899.2 579.6 L898.4 589.2 L898.7 596.3 L897.9 607.7 L899.3 617.1 L899.6 626 L899.4 634.3 L899.5 644.2 L897.2 653.7 L896.6 662.4 L897.3 670.2 L896.5 679.4 L894.9 691 L893.9 700.2 L893.2 707.9 L890 718.4 L888.7 727.4 L888.9 735.2 L887.2 743.9" fill="none" stroke="#b4f4ee" stroke-width="1.1" opacity="0.9"/>

<path d="M911 741 L950 742 L992 744" fill="none" stroke="#9ee860" stroke-width="1.400"/>
<path d="M1070.8 393.6 L1070.6 395.5 L1070.1 396.4 L1069 397.3 L1068.3 396.9 L1067.3 397.8 L1066.9 397.2 L1066.6 397.1 L1066.5 396.8 M1109.1 415 L1104.1 417.5 L1099.6 420.9 L1095.3 423.9 L1089.8 426.8 L1084.7 428.8 L1080.2 431.1 L1076 432.3 L1070.1 434.4 M1117.2 418.9 L1111.9 421.9 L1104.9 424.8 L1099.2 428.7 L1093.2 431.6 L1087.4 435.1 L1080.7 437.8 L1075.9 439.3 L1069.6 441.7 M1133.3 424.4 L1124.4 429.1 L1117.5 434.9 L1108.8 439.6 L1100.6 442.2 L1092.1 447.9 L1085 450 L1076.1 454.1 L1068.4 457.6 M1141.1 437.2 L1132.6 443.6 L1122.2 448.2 L1114.1 452.4 L1104.4 457.1 L1095.7 462.5 L1086.5 465.6 L1076.4 469.2 L1067.1 472.8 M1145.9 464.6 L1136.4 469.6 L1126.3 472.8 L1115.6 478.6 L1106.2 481.6 L1095.5 486.2 L1084.5 489.1 L1075.8 493.4 L1065.3 496.3 M1146.3 481.7 L1135.2 486 L1124.8 490.7 L1115 494.3 L1104.5 499.1 L1094.9 501.8 L1084.7 504.9 L1074.5 509 L1063.5 512.3 M1145.8 490.1 L1136.4 494.8 L1124.9 498.9 L1114.7 502.4 L1103.8 507.3 L1094.4 511.2 L1083.7 513.5 L1072.8 517 L1062.6 519.8 M1145.3 499.5 L1135.3 502.7 L1123.9 506.3 L1114.5 511.1 L1103.2 514 L1093 519.1 L1082.1 522 L1072.6 524.7 L1061.6 527.4 M1144.2 516 L1133.2 520.8 L1123.4 523.9 L1112.4 527.3 L1101.6 531.7 L1091.2 533.8 L1080.9 537.3 L1071.6 539.9 L1060.1 542.5 M1140.2 550.5 L1129.6 554 L1118.9 558.5 L1109.8 560.7 L1098.9 564.1 L1087.7 567.4 L1078.1 570.3 L1068.5 572.3 L1057.3 573.2 M1131.9 612.2 L1121.8 614.2 L1111.5 616.4 L1101.8 620.2 L1090.9 622 L1081.4 623.6 L1071.2 625.4 L1061.6 626 L1051.6 627.6 M1131 619 L1120.2 623.5 L1110.1 625 L1101.2 626.7 L1091.7 629.1 L1081.7 631.3 L1070.9 633.2 L1059.9 634.3 L1050.7 635.9 M1130.1 629.2 L1120.6 631.6 L1109.3 633.5 L1100.1 635 L1090.5 637.1 L1080.1 639.1 L1069.3 641.8 L1060.2 642.6 L1049.9 643.3 M1127.8 654 L1118.6 657.4 L1107.5 658.9 L1098.5 660.7 L1087.8 662.6 L1079.3 663.1 L1068 664.9 L1059.6 666.7 L1048.7 665.4 M1127.5 663.7 L1116.8 665 L1106.9 667.5 L1098.8 670.2 L1087.6 671.6 L1078.4 671.1 L1068.9 672.4 L1059.2 672.9 L1048.3 675 M1127.1 672.2 L1117.2 673.5 L1107.3 676.5 L1097.5 678.6 L1087.6 679.9 L1076.9 680.6 L1067.9 681.7 L1057.5 681.4 L1047.9 682.6 M1126.4 689.5 L1117.5 690.4 L1106.3 692.3 L1096 694 L1087 694.7 L1077.6 696.2 L1066.3 696.1 L1057.1 696.9 L1047.1 697.4 M1126 707.9 L1115.3 708.9 L1106.7 709.9 L1096.3 710.8 L1086.8 712.4 L1075.4 713 L1065.6 712.9 L1055.7 713 L1046.4 713.3 M1126 716.3 L1115.7 716.3 L1105.9 719.3 L1096.1 719.7 L1086.6 720.5 L1076.9 721.6 L1066.5 721.5 L1055.3 720.4 L1046.1 721.1 M1126 734.1 L1116.1 734.7 L1106.6 735.9 L1096 735.3 L1084.7 737.2 L1076.3 736.7 L1064.9 736.8 L1056.1 737.1 L1045.4 735.5 M1126 741.4 L1115.3 743.5 L1105.3 744.7 L1095.4 744 L1085.3 744.3 L1076.1 744.1 L1065.1 744.7 L1054.2 744 L1045 745 M1063 389.9 L1070.8 393.6 L1078.5 398.9 L1086 401.8 L1093.4 406.6 L1101.1 410.8 L1109.1 415 L1117.2 418.9 L1125.2 420.4 L1133.3 424.4 L1139.5 428.6 L1141.1 437.2 L1142.7 447.6 L1144.3 454.5 L1145.9 464.6 L1146.9 472.6 L1146.3 481.7 L1145.8 490.1 L1145.3 499.5 L1144.8 506.8 L1144.2 516 L1143.4 525.7 L1142.3 533.2 L1141.2 542.2 L1140.2 550.5 L1139.1 558.6 L1137.8 568 L1136.5 577.3 L1135.2 585.2 L1133.9 593.7 L1132.7 602.2 L1131.9 612.2 L1131 619 L1130.1 629.2 L1129.3 637.5 L1128.4 646.5 L1127.8 654 L1127.5 663.7 L1127.1 672.2 L1126.8 680.4 L1126.4 689.5 L1126.1 697.6 L1126 707.9 L1126 716.3 L1126 724.7 L1126 734.1 L1126 741.4 M1062.7 390.4 L1070.1 396.4 L1076.2 400.9 L1082.7 406 L1087.7 411.4 L1093.3 415.7 L1099.6 420.9 L1104.9 424.8 L1111 430 L1117.5 434.9 L1121.1 439 L1122.2 448.2 L1124.4 456.6 L1125.3 465 L1126.3 472.8 L1125.4 482.3 L1124.8 490.7 L1124.9 498.9 L1123.9 506.3 L1124.7 515.7 L1123.4 523.9 L1122.2 532 L1121.7 541.6 L1120 548.8 L1118.9 558.5 L1118.8 565.7 L1116.9 574.3 L1115.9 583.5 L1115.6 591 L1112.9 599.7 L1112.9 607.6 L1111.5 616.4 L1110.1 625 L1109.3 633.5 L1109.1 641.6 L1107.7 651.4 L1107.5 658.9 L1106.9 667.5 L1107.3 676.5 L1107.3 684.5 L1106.3 692.3 L1105.4 701.5 L1106.7 709.9 L1105.9 719.3 L1105.6 726.3 L1106.6 735.9 L1105.3 744.7 M1062.2 392 L1068.3 396.9 L1074.3 402.6 L1078.1 409 L1083.3 414.7 L1086.1 420.1 L1089.8 426.8 L1093.2 431.6 L1096.2 437.6 L1100.6 442.2 L1104.1 450.2 L1104.4 457.1 L1104.5 466.6 L1105 474 L1106.2 481.6 L1106.2 490.9 L1104.5 499.1 L1103.8 507.3 L1103.2 514 L1103 522.8 L1101.6 531.7 L1101.7 538.8 L1101.3 547.5 L1099.7 556 L1098.9 564.1 L1097 573.1 L1096.6 580.7 L1096.5 589.4 L1094.9 596 L1092.8 605.8 L1093.5 612.7 L1090.9 622 L1091.7 629.1 L1090.5 637.1 L1090.2 645.6 L1088.1 655.2 L1087.8 662.6 L1087.6 671.6 L1087.6 679.9 L1087 686.8 L1087 694.7 L1085.7 704 L1086.8 712.4 L1086.6 720.5 L1085.8 728.1 L1084.7 737.2 L1085.3 744.3 M1062.7 391.6 L1066.9 397.2 L1071.3 403.4 L1075.1 409.9 L1075.8 416.9 L1077.3 423.8 L1080.2 431.1 L1080.7 437.8 L1083 443.7 L1085 450 L1084.8 457.5 L1086.5 465.6 L1085.3 474.1 L1085.2 481.4 L1084.5 489.1 L1086 496.7 L1084.7 504.9 L1083.7 513.5 L1082.1 522 L1081.1 530.2 L1080.9 537.3 L1080.6 545.1 L1079.3 553.1 L1079.8 560.8 L1078.1 570.3 L1078.2 577.9 L1075.7 586.2 L1076.4 592.2 L1074.2 600.7 L1072.8 608.3 L1072.5 616.6 L1071.2 625.4 L1070.9 633.2 L1069.3 641.8 L1069.9 648.8 L1069.5 657.1 L1068 664.9 L1068.9 672.4 L1067.9 681.7 L1068 689.5 L1066.3 696.1 L1065.6 705 L1065.6 712.9 L1066.5 721.5 L1066 729.1 L1064.9 736.8 L1065.1 744.7 M1063 390.1 L1066.5 396.8 L1069.9 404 L1071.8 410.4 L1071.2 418.1 L1070.7 427.1 L1070.1 434.4 L1069.6 441.7 L1069 450.4 L1068.4 457.6 L1067.8 464.8 L1067.1 472.8 L1066.5 480.3 L1065.9 488.1 L1065.3 496.3 L1064.5 504.7 L1063.5 512.3 L1062.6 519.8 L1061.6 527.4 L1060.7 534.4 L1060.1 542.5 L1059.4 550.2 L1058.7 558 L1058 566.3 L1057.3 573.2 L1056.6 581.1 L1056 588.8 L1055.3 596.8 L1054.4 605.2 L1053.5 612.6 L1052.6 620.7 L1051.6 627.6 L1050.7 635.9 L1049.9 643.3 L1049.5 650.2 L1049.1 658.5 L1048.7 665.4 L1048.3 675 L1047.9 682.6 L1047.5 689 L1047.1 697.4 L1046.8 704.4 L1046.4 713.3 L1046.1 721.1 L1045.7 728.9 L1045.4 735.5 L1045 745" fill="none" stroke="#ffffff" stroke-width="1.2" opacity="1"/>
<path d="M1101.1 410.8 L1098 414.1 L1093.3 415.7 L1088.8 418.3 L1086.1 420.1 L1082.1 423.4 L1077.3 423.8 L1074.3 425.7 L1070.7 427.1 M1125.2 420.4 L1118.2 426 L1111 430 L1104.4 433 L1096.2 437.6 L1090.9 441.4 L1083 443.7 L1075.3 447.4 L1069 450.4 M1144.3 454.5 L1135.3 461.2 L1125.3 465 L1115.4 470 L1105 474 L1094.5 477.5 L1085.2 481.4 L1076 484.7 L1065.9 488.1 M1142.3 533.2 L1131 536.7 L1121.7 541.6 L1110.2 545.5 L1101.3 547.5 L1090.1 551.1 L1079.3 553.1 L1069.6 555.8 L1058.7 558 M1139.1 558.6 L1129.4 562.1 L1118.8 565.7 L1108.6 568.6 L1097 573.1 L1087.6 574.9 L1078.2 577.9 L1066.4 579.8 L1056.6 581.1 M1135.2 585.2 L1124.3 588.7 L1115.6 591 L1104.4 594.9 L1094.9 596 L1084.3 600.1 L1074.2 600.7 L1064.4 603.7 L1054.4 605.2 M1132.7 602.2 L1122.7 605.2 L1112.9 607.6 L1102.9 610 L1093.5 612.7 L1082.7 614.7 L1072.5 616.6 L1062.9 619.1 L1052.6 620.7 M1126.1 697.6 L1115.9 700 L1105.4 701.5 L1097 702.9 L1085.7 704 L1075.7 703.8 L1065.6 705 L1056 704.7 L1046.8 704.4 M1063.1 391.7 L1070.6 395.5 L1077.5 399.6 L1084.7 404.3 L1091.5 408.5 L1098 414.1 L1104.1 417.5 L1111.9 421.9 L1118.2 426 L1124.4 429.1 L1131.4 434.8 L1132.6 443.6 L1134.1 452.7 L1135.3 461.2 L1136.4 469.6 L1136.6 476.9 L1135.2 486 L1136.4 494.8 L1135.3 502.7 L1134.6 511.7 L1133.2 520.8 L1133.3 528.6 L1131 536.7 L1130.1 545.8 L1129.6 554 L1129.4 562.1 L1127.2 570.9 L1126.6 579 L1124.3 588.7 L1124.2 596 L1122.7 605.2 L1121.8 614.2 L1120.2 623.5 L1120.6 631.6 L1120 638.9 L1117.9 649 L1118.6 657.4 L1116.8 665 L1117.2 673.5 L1116.6 683.5 L1117.5 690.4 L1115.9 700 L1115.3 708.9 L1115.7 716.3 L1116.7 726.3 L1116.1 734.7 L1115.3 743.5 M1062.8 392.6 L1069 397.3 L1075.9 402.1 L1081.2 408 L1085.4 414 L1088.8 418.3 L1095.3 423.9 L1099.2 428.7 L1104.4 433 L1108.8 439.6 L1112.7 445.7 L1114.1 452.4 L1114.4 462.2 L1115.4 470 L1115.6 478.6 L1116.5 486.1 L1115 494.3 L1114.7 502.4 L1114.5 511.1 L1113 520.4 L1112.4 527.3 L1111.2 536.2 L1110.2 545.5 L1110.1 553.3 L1109.8 560.7 L1108.6 568.6 L1106.5 578.5 L1106.1 587 L1104.4 594.9 L1104 601.9 L1102.9 610 L1101.8 620.2 L1101.2 626.7 L1100.1 635 L1099.5 644.1 L1099.4 651.7 L1098.5 660.7 L1098.8 670.2 L1097.5 678.6 L1096.1 686.6 L1096 694 L1097 702.9 L1096.3 710.8 L1096.1 719.7 L1096.2 727.1 L1096 735.3 L1095.4 744 M1063.9 391.7 L1066.6 397.1 L1070.1 403.7 L1072.6 411.8 L1074.2 419 L1074.3 425.7 L1076 432.3 L1075.9 439.3 L1075.3 447.4 L1076.1 454.1 L1076.9 461.5 L1076.4 469.2 L1075.4 476.9 L1076 484.7 L1075.8 493.4 L1075.7 500.8 L1074.5 509 L1072.8 517 L1072.6 524.7 L1071.2 532.9 L1071.6 539.9 L1070.2 548.5 L1069.6 555.8 L1067.4 563.8 L1068.5 572.3 L1066.4 579.8 L1067.1 587.9 L1066 594.3 L1064.4 603.7 L1063.1 610.9 L1062.9 619.1 L1061.6 626 L1059.9 634.3 L1060.2 642.6 L1059.2 650.4 L1058.5 658.2 L1059.6 666.7 L1059.2 672.9 L1057.5 681.4 L1058.4 689.7 L1057.1 696.9 L1056 704.7 L1055.7 713 L1055.3 720.4 L1054.9 729.5 L1056.1 737.1 L1054.2 744" fill="none" stroke="#b4f4ee" stroke-width="1.2" opacity="1"/>
<path d="M1063 389.9 L1063.1 391.7 L1062.7 390.4 L1062.8 392.6 L1062.2 392 L1063.2 392.5 L1062.7 391.6 L1063.9 391.7 L1063 390.1 M1078.5 398.9 L1077.5 399.6 L1076.2 400.9 L1075.9 402.1 L1074.3 402.6 L1072.5 402.9 L1071.3 403.4 L1070.1 403.7 L1069.9 404 M1086 401.8 L1084.7 404.3 L1082.7 406 L1081.2 408 L1078.1 409 L1076.6 410.3 L1075.1 409.9 L1072.6 411.8 L1071.8 410.4 M1093.4 406.6 L1091.5 408.5 L1087.7 411.4 L1085.4 414 L1083.3 414.7 L1078.7 415.8 L1075.8 416.9 L1074.2 419 L1071.2 418.1 M1139.5 428.6 L1131.4 434.8 L1121.1 439 L1112.7 445.7 L1104.1 450.2 L1095.4 454.1 L1084.8 457.5 L1076.9 461.5 L1067.8 464.8 M1142.7 447.6 L1134.1 452.7 L1124.4 456.6 L1114.4 462.2 L1104.5 466.6 L1095.7 469.5 L1085.3 474.1 L1075.4 476.9 L1066.5 480.3 M1146.9 472.6 L1136.6 476.9 L1125.4 482.3 L1116.5 486.1 L1106.2 490.9 L1095.8 494.7 L1086 496.7 L1075.7 500.8 L1064.5 504.7 M1144.8 506.8 L1134.6 511.7 L1124.7 515.7 L1113 520.4 L1103 522.8 L1092.5 525.7 L1081.1 530.2 L1071.2 532.9 L1060.7 534.4 M1143.4 525.7 L1133.3 528.6 L1122.2 532 L1111.2 536.2 L1101.7 538.8 L1090.8 542 L1080.6 545.1 L1070.2 548.5 L1059.4 550.2 M1141.2 542.2 L1130.1 545.8 L1120 548.8 L1110.1 553.3 L1099.7 556 L1089.6 558.7 L1079.8 560.8 L1067.4 563.8 L1058 566.3 M1137.8 568 L1127.2 570.9 L1116.9 574.3 L1106.5 578.5 L1096.6 580.7 L1087.3 583.4 L1075.7 586.2 L1067.1 587.9 L1056 588.8 M1136.5 577.3 L1126.6 579 L1115.9 583.5 L1106.1 587 L1096.5 589.4 L1086.7 590.8 L1076.4 592.2 L1066 594.3 L1055.3 596.8 M1133.9 593.7 L1124.2 596 L1112.9 599.7 L1104 601.9 L1092.8 605.8 L1083 606.4 L1072.8 608.3 L1063.1 610.9 L1053.5 612.6 M1129.3 637.5 L1120 638.9 L1109.1 641.6 L1099.5 644.1 L1090.2 645.6 L1078.9 648.5 L1069.9 648.8 L1059.2 650.4 L1049.5 650.2 M1128.4 646.5 L1117.9 649 L1107.7 651.4 L1099.4 651.7 L1088.1 655.2 L1079.5 655.3 L1069.5 657.1 L1058.5 658.2 L1049.1 658.5 M1126.8 680.4 L1116.6 683.5 L1107.3 684.5 L1096.1 686.6 L1087 686.8 L1077 687.5 L1068 689.5 L1058.4 689.7 L1047.5 689 M1126 724.7 L1116.7 726.3 L1105.6 726.3 L1096.2 727.1 L1085.8 728.1 L1075.6 729.2 L1066 729.1 L1054.9 729.5 L1045.7 728.9 M1063.2 392.5 L1067.3 397.8 L1072.5 402.9 L1076.6 410.3 L1078.7 415.8 L1082.1 423.4 L1084.7 428.8 L1087.4 435.1 L1090.9 441.4 L1092.1 447.9 L1095.4 454.1 L1095.7 462.5 L1095.7 469.5 L1094.5 477.5 L1095.5 486.2 L1095.8 494.7 L1094.9 501.8 L1094.4 511.2 L1093 519.1 L1092.5 525.7 L1091.2 533.8 L1090.8 542 L1090.1 551.1 L1089.6 558.7 L1087.7 567.4 L1087.6 574.9 L1087.3 583.4 L1086.7 590.8 L1084.3 600.1 L1083 606.4 L1082.7 614.7 L1081.4 623.6 L1081.7 631.3 L1080.1 639.1 L1078.9 648.5 L1079.5 655.3 L1079.3 663.1 L1078.4 671.1 L1076.9 680.6 L1077 687.5 L1077.6 696.2 L1075.7 703.8 L1075.4 713 L1076.9 721.6 L1075.6 729.2 L1076.3 736.7 L1076.1 744.1" fill="none" stroke="#a8ee6a" stroke-width="1.2" opacity="1"/>

<path d="M1063 390 L1072 408 L1069 450 L1065 500 L1061 532 L1055 600 L1050 641 L1047 700 L1045 744" fill="none" stroke="#8ee860" stroke-width="1.6"/>
<path d="M1063 390 C1065.3 391.2 1071.2 393.7 1077 397 C1082.8 400.3 1087.7 405 1098 410 C1108.3 415 1126.2 420.3 1139 427 C1151.8 433.7 1166.2 441.2 1175 450 C1183.8 458.8 1188 471.8 1192 480 C1196 488.2 1197.8 495.8 1199 499" fill="none" stroke="#b6f050" stroke-width="1.6"/>
<path d="M1141 561.3 L1140.7 562.1 L1140.4 559.5 L1139 560.7 M1140.8 569 L1138.8 571.3 L1139.2 569.5 L1137.6 567.8 M1140.5 579.1 L1137.8 578.5 L1136.3 578.1 L1136.3 578.8 M1140.3 587.3 L1140 587.9 L1137.6 589 L1134.9 587.5 M1141.3 626.2 L1138.5 624.6 L1135.6 625.3 L1130.7 622 M1141.7 636 L1138.3 633.8 L1134.9 634.3 L1129.8 632.9 M1144.3 653.3 L1137.8 654 L1133.3 653.2 L1128 651.9 M1146 663.6 L1138.9 661.9 L1134.6 661 L1127.6 661.1 M1149.3 681.3 L1142.8 679.5 L1133.4 678.9 L1126.9 678.9 M1151 690.3 L1143.5 690.7 L1133.9 688.9 L1126.5 685.7 M1152.8 698.5 L1144.2 698.2 L1135.9 697.2 L1126.1 696.1 M1154.6 708.6 L1144.2 708.6 L1135.2 705.8 L1126 704.3 M1158.9 734.6 L1147.6 735 L1137.2 735.7 L1126 732.2 M1160 746.2 L1149.7 743.9 L1137.6 743 L1126 740.7 M1141 561.3 L1140.8 569 L1140.5 579.1 L1140.3 587.3 L1140.1 597.6 L1140.3 605.4 L1140.8 614.6 L1141.3 626.2 L1141.7 636 L1142.7 642.4 L1144.3 653.3 L1146 663.6 L1147.7 670.9 L1149.3 681.3 L1151 690.3 L1152.8 698.5 L1154.6 708.6 L1156.4 717.7 L1157.8 727.5 L1158.9 734.6 L1160 746.2 M1140.7 562.1 L1138.8 571.3 L1137.8 578.5 L1140 587.9 L1136.8 598.8 L1137 608.4 L1138.6 617.1 L1138.5 624.6 L1138.3 633.8 L1137.2 644.8 L1137.8 654 L1138.9 661.9 L1141.2 670.7 L1142.8 679.5 L1143.5 690.7 L1144.2 698.2 L1144.2 708.6 L1147.3 717.8 L1147.5 726.5 L1147.6 735 L1149.7 743.9 M1140.4 559.5 L1139.2 569.5 L1136.3 578.1 L1137.6 589 L1137 597.5 L1134.5 605.9 L1134.1 614.3 L1135.6 625.3 L1134.9 634.3 L1132 642.3 L1133.3 653.2 L1134.6 661 L1134.7 670 L1133.4 678.9 L1133.9 688.9 L1135.9 697.2 L1135.2 705.8 L1137.2 716.8 L1135.6 724.7 L1137.2 735.7 L1137.6 743 M1139 560.7 L1137.6 567.8 L1136.3 578.8 L1134.9 587.5 L1133.6 595.2 L1132.5 605.3 L1131.6 615.5 L1130.7 622 L1129.8 632.9 L1128.8 640.3 L1128 651.9 L1127.6 661.1 L1127.2 668.7 L1126.9 678.9 L1126.5 685.7 L1126.1 696.1 L1126 704.3 L1126 715.4 L1126 722.5 L1126 732.2 L1126 740.7" fill="none" stroke="#ffffff" stroke-width="1.1" opacity="0.9"/>
<path d="M1140.1 597.6 L1136.8 598.8 L1137 597.5 L1133.6 595.2 M1140.3 605.4 L1137 608.4 L1134.5 605.9 L1132.5 605.3 M1140.8 614.6 L1138.6 617.1 L1134.1 614.3 L1131.6 615.5 M1142.7 642.4 L1137.2 644.8 L1132 642.3 L1128.8 640.3 M1147.7 670.9 L1141.2 670.7 L1134.7 670 L1127.2 668.7 M1156.4 717.7 L1147.3 717.8 L1137.2 716.8 L1126 715.4 M1157.8 727.5 L1147.5 726.5 L1135.6 724.7 L1126 722.5" fill="none" stroke="#b4f4ee" stroke-width="1.1" opacity="0.9"/>

<path d="M1126 741 L1087 742 L1045 744" fill="none" stroke="#9ee860" stroke-width="1.400"/>
<g clip-path="url(#ccap)"><rect x="930" y="200" width="180" height="110" fill="#f4f4f4"/>
<ellipse cx="1018" cy="226" rx="52" ry="42" fill="#a8acaa" filter="url(#b8)"/>
<ellipse cx="992" cy="236" rx="9" ry="7" fill="#f09080" filter="url(#b4)" opacity=".75"/><ellipse cx="985" cy="254" rx="9" ry="7" fill="#90e890" filter="url(#b4)" opacity=".7"/><ellipse cx="1000" cy="240" rx="7" ry="6" fill="#a0f0f0" filter="url(#b4)" opacity=".6"/>
<path d="M950 205 L951.2 204.4 L952.7 203.8 L954.6 203.2 L957 202.6 L959.6 202 L962.7 201.5 L966.1 201 L969.8 200.5 L973.8 200.1 L978.1 199.6 L982.6 199.3 L987.4 198.9 L992.3 198.7 L997.5 198.4 L1002.7 198.2 L1008.1 198.1 L1013.5 198 L1019 198 L1024.5 198 L1029.9 198.1 L1035.3 198.2 L1040.5 198.4 L1045.7 198.7 L1050.6 198.9 L1055.4 199.3 L1059.9 199.6 L1064.2 200.1 L1068.2 200.5 L1071.9 201 L1075.3 201.5 L1078.4 202 L1081 202.6 L1083.4 203.2 L1085.3 203.8 L1086.8 204.4 L1088 205 M948.9 209.2 L950.1 208.5 L951.7 207.9 L953.6 207.3 L956 206.8 L958.7 206.2 L961.8 205.7 L965.2 205.1 L969 204.7 L973.1 204.2 L977.4 203.8 L982 203.4 L986.9 203.1 L991.9 202.8 L997.1 202.6 L1002.4 202.4 L1007.9 202.3 L1013.4 202.2 L1018.9 202.2 L1024.5 202.2 L1030 202.3 L1035.4 202.4 L1040.8 202.6 L1046 202.8 L1051 203.1 L1055.9 203.4 L1060.5 203.8 L1064.8 204.2 L1068.9 204.7 L1072.7 205.2 L1076.1 205.7 L1079.2 206.2 L1081.9 206.8 L1084.2 207.4 L1086.2 208 L1087.8 208.6 L1089 209.2 M947.9 213.3 L949.1 212.7 L950.6 212.1 L952.6 211.5 L955 210.9 L957.8 210.4 L960.9 209.8 L964.4 209.3 L968.2 208.8 L972.3 208.4 L976.8 208 L981.4 207.6 L986.3 207.3 L991.4 207 L996.7 206.7 L1002.1 206.6 L1007.7 206.4 L1013.3 206.4 L1018.9 206.3 L1024.5 206.4 L1030.1 206.4 L1035.6 206.6 L1041 206.8 L1046.3 207 L1051.4 207.3 L1056.3 207.6 L1061 208 L1065.4 208.4 L1069.6 208.8 L1073.4 209.3 L1076.9 209.8 L1080 210.4 L1082.8 211 L1085.1 211.5 L1087.1 212.1 L1088.7 212.7 L1089.9 213.3 M946.8 217.5 L948 216.9 L949.6 216.3 L951.6 215.7 L954.1 215.1 L956.9 214.5 L960 214 L963.6 213.5 L967.4 213 L971.6 212.5 L976.1 212.1 L980.8 211.8 L985.8 211.4 L991 211.1 L996.3 210.9 L1001.8 210.7 L1007.4 210.6 L1013.1 210.5 L1018.8 210.5 L1024.5 210.5 L1030.2 210.6 L1035.8 210.7 L1041.3 210.9 L1046.7 211.2 L1051.8 211.4 L1056.8 211.8 L1061.6 212.2 L1066 212.6 L1070.2 213 L1074.1 213.5 L1077.6 214 L1080.8 214.6 L1083.6 215.1 L1086 215.7 L1088 216.3 L1089.7 216.9 L1090.9 217.5 M945.7 221.6 L946.9 221 L948.6 220.4 L950.6 219.8 L953.1 219.2 L955.9 218.7 L959.2 218.1 L962.7 217.6 L966.7 217.1 L970.9 216.7 L975.4 216.3 L980.2 215.9 L985.3 215.6 L990.5 215.3 L996 215.1 L1001.5 214.9 L1007.2 214.8 L1013 214.7 L1018.8 214.7 L1024.6 214.7 L1030.3 214.8 L1036 214.9 L1041.6 215.1 L1047 215.3 L1052.2 215.6 L1057.3 215.9 L1062.1 216.3 L1066.6 216.7 L1070.9 217.2 L1074.8 217.7 L1078.4 218.2 L1081.6 218.7 L1084.5 219.3 L1086.9 219.9 L1089 220.5 L1090.6 221.1 L1091.8 221.7 M944.7 225.8 L945.9 225.2 L947.6 224.6 L949.6 224 L952.1 223.4 L955 222.8 L958.3 222.3 L961.9 221.8 L965.9 221.3 L970.2 220.9 L974.8 220.4 L979.7 220.1 L984.8 219.7 L990.1 219.5 L995.6 219.2 L1001.3 219.1 L1007 218.9 L1012.8 218.9 L1018.7 218.8 L1024.6 218.9 L1030.4 218.9 L1036.2 219.1 L1041.8 219.3 L1047.3 219.5 L1052.7 219.8 L1057.8 220.1 L1062.6 220.5 L1067.2 220.9 L1071.5 221.4 L1075.5 221.8 L1079.2 222.4 L1082.4 222.9 L1085.3 223.5 L1087.8 224.1 L1089.9 224.7 L1091.5 225.3 L1092.8 225.9 M943.6 229.9 L944.8 229.3 L946.5 228.7 L948.6 228.1 L951.2 227.6 L954.1 227 L957.4 226.5 L961.1 225.9 L965.1 225.5 L969.5 225 L974.1 224.6 L979.1 224.2 L984.2 223.9 L989.6 223.6 L995.2 223.4 L1001 223.2 L1006.8 223.1 L1012.7 223 L1018.7 223 L1024.6 223 L1030.5 223.1 L1036.4 223.2 L1042.1 223.4 L1047.7 223.7 L1053.1 224 L1058.2 224.3 L1063.2 224.7 L1067.9 225.1 L1072.2 225.5 L1076.2 226 L1079.9 226.5 L1083.2 227.1 L1086.2 227.6 L1088.7 228.2 L1090.8 228.8 L1092.5 229.4 L1093.7 230 M942.5 234.1 L943.8 233.5 L945.5 232.9 L947.6 232.3 L950.2 231.7 L953.1 231.2 L956.5 230.6 L960.2 230.1 L964.3 229.6 L968.7 229.2 L973.5 228.8 L978.5 228.4 L983.7 228.1 L989.2 227.8 L994.9 227.6 L1000.7 227.4 L1006.6 227.3 L1012.6 227.2 L1018.6 227.2 L1024.6 227.2 L1030.6 227.3 L1036.5 227.4 L1042.3 227.6 L1048 227.8 L1053.5 228.1 L1058.7 228.5 L1063.7 228.8 L1068.5 229.3 L1072.9 229.7 L1077 230.2 L1080.7 230.7 L1084 231.3 L1087 231.8 L1089.6 232.4 L1091.7 233 L1093.4 233.6 L1094.7 234.2 M941.4 238.3 L942.7 237.7 L944.5 237 L946.6 236.5 L949.2 235.9 L952.2 235.3 L955.6 234.8 L959.4 234.3 L963.5 233.8 L968 233.3 L972.8 232.9 L977.9 232.6 L983.2 232.2 L988.8 232 L994.5 231.7 L1000.4 231.6 L1006.4 231.4 L1012.4 231.4 L1018.5 231.3 L1024.7 231.4 L1030.7 231.4 L1036.7 231.6 L1042.6 231.8 L1048.3 232 L1053.9 232.3 L1059.2 232.6 L1064.3 233 L1069.1 233.4 L1073.5 233.9 L1077.7 234.4 L1081.5 234.9 L1084.9 235.4 L1087.9 236 L1090.5 236.6 L1092.6 237.2 L1094.3 237.8 L1095.6 238.4 M940.7 242.5 L942 241.9 L943.8 241.3 L946 240.7 L948.6 240.1 L951.6 239.5 L955 239 L958.9 238.5 L963 238 L967.5 237.6 L972.4 237.2 L977.5 236.8 L982.9 236.5 L988.5 236.2 L994.2 236 L1000.2 235.8 L1006.2 235.7 L1012.3 235.6 L1018.5 235.6 L1024.7 235.6 L1030.8 235.7 L1036.8 235.8 L1042.8 236 L1048.6 236.2 L1054.1 236.5 L1059.5 236.9 L1064.6 237.2 L1069.5 237.7 L1074 238.1 L1078.2 238.6 L1082 239.1 L1085.4 239.7 L1088.4 240.2 L1091 240.8 L1093.2 241.4 L1095 242 L1096.3 242.6 M940.3 246.8 L941.6 246.1 L943.4 245.5 L945.6 244.9 L948.2 244.4 L951.2 243.8 L954.7 243.3 L958.5 242.8 L962.7 242.3 L967.3 241.8 L972.1 241.4 L977.3 241.1 L982.7 240.7 L988.3 240.5 L994.1 240.2 L1000.1 240 L1006.1 239.9 L1012.3 239.8 L1018.5 239.8 L1024.7 239.9 L1030.9 239.9 L1036.9 240.1 L1042.9 240.3 L1048.7 240.5 L1054.4 240.8 L1059.8 241.1 L1064.9 241.5 L1069.8 241.9 L1074.3 242.4 L1078.5 242.9 L1082.3 243.4 L1085.8 243.9 L1088.8 244.5 L1091.5 245.1 L1093.6 245.7 L1095.4 246.3 L1096.7 246.9 M939.9 251 L941.2 250.4 L942.9 249.8 L945.1 249.2 L947.8 248.6 L950.8 248.1 L954.3 247.5 L958.2 247 L962.4 246.5 L967 246.1 L971.9 245.7 L977 245.3 L982.5 245 L988.1 244.7 L994 244.5 L1000 244.3 L1006.1 244.2 L1012.3 244.1 L1018.5 244.1 L1024.7 244.1 L1030.9 244.2 L1037 244.3 L1043 244.5 L1048.9 244.8 L1054.6 245.1 L1060 245.4 L1065.2 245.8 L1070 246.2 L1074.6 246.6 L1078.8 247.1 L1082.7 247.6 L1086.2 248.2 L1089.2 248.7 L1091.9 249.3 L1094.1 249.9 L1095.8 250.5 L1097.2 251.1 M939.4 255.3 L940.7 254.7 L942.5 254.1 L944.7 253.5 L947.4 252.9 L950.5 252.3 L954 251.8 L957.8 251.3 L962.1 250.8 L966.7 250.4 L971.6 250 L976.8 249.6 L982.3 249.3 L987.9 249 L993.8 248.8 L999.9 248.6 L1006 248.4 L1012.2 248.4 L1018.5 248.4 L1024.8 248.4 L1031 248.5 L1037.2 248.6 L1043.2 248.8 L1049.1 249 L1054.8 249.3 L1060.2 249.6 L1065.4 250 L1070.3 250.4 L1074.9 250.9 L1079.2 251.4 L1083.1 251.9 L1086.5 252.4 L1089.6 253 L1092.3 253.6 L1094.5 254.2 L1096.3 254.8 L1097.6 255.4 M939 259.6 L940.3 259 L942.1 258.4 L944.3 257.8 L947 257.2 L950.1 256.6 L953.6 256.1 L957.5 255.6 L961.8 255.1 L966.4 254.6 L971.3 254.2 L976.6 253.9 L982.1 253.5 L987.8 253.3 L993.7 253 L999.8 252.8 L1005.9 252.7 L1012.2 252.6 L1018.5 252.6 L1024.8 252.6 L1031.1 252.7 L1037.3 252.9 L1043.3 253.1 L1049.2 253.3 L1055 253.6 L1060.4 253.9 L1065.7 254.3 L1070.6 254.7 L1075.2 255.1 L1079.5 255.6 L1083.4 256.2 L1086.9 256.7 L1090 257.3 L1092.7 257.8 L1094.9 258.4 L1096.7 259.1 L1098 259.7 M938.5 263.8 L939.9 263.2 L941.7 262.6 L943.9 262 L946.6 261.4 L949.7 260.9 L953.2 260.3 L957.2 259.8 L961.5 259.4 L966.1 258.9 L971.1 258.5 L976.3 258.1 L981.9 257.8 L987.6 257.5 L993.5 257.3 L999.6 257.1 L1005.9 257 L1012.2 256.9 L1018.5 256.9 L1024.8 256.9 L1031.1 257 L1037.4 257.1 L1043.5 257.3 L1049.4 257.6 L1055.2 257.8 L1060.7 258.2 L1065.9 258.5 L1070.9 259 L1075.6 259.4 L1079.9 259.9 L1083.8 260.4 L1087.3 261 L1090.4 261.5 L1093.1 262.1 L1095.3 262.7 L1097.1 263.3 L1098.5 263.9 M938.1 268.1 L939.4 267.5 L941.2 266.9 L943.5 266.3 L946.2 265.7 L949.3 265.2 L952.9 264.6 L956.8 264.1 L961.1 263.6 L965.8 263.2 L970.8 262.8 L976.1 262.4 L981.6 262.1 L987.4 261.8 L993.4 261.6 L999.5 261.4 L1005.8 261.2 L1012.1 261.2 L1018.5 261.1 L1024.9 261.2 L1031.2 261.3 L1037.5 261.4 L1043.6 261.6 L1049.6 261.8 L1055.4 262.1 L1060.9 262.4 L1066.2 262.8 L1071.2 263.2 L1075.9 263.7 L1080.2 264.2 L1084.1 264.7 L1087.7 265.2 L1090.8 265.8 L1093.5 266.4 L1095.8 267 L1097.6 267.6 L1098.9 268.2 M937.7 272.4 L939 271.8 L940.8 271.2 L943.1 270.6 L945.8 270 L948.9 269.4 L952.5 268.9 L956.5 268.4 L960.8 267.9 L965.5 267.4 L970.5 267 L975.9 266.7 L981.4 266.3 L987.3 266.1 L993.3 265.8 L999.4 265.6 L1005.7 265.5 L1012.1 265.4 L1018.5 265.4 L1024.9 265.4 L1031.3 265.5 L1037.6 265.7 L1043.7 265.8 L1049.7 266.1 L1055.6 266.4 L1061.1 266.7 L1066.5 267.1 L1071.5 267.5 L1076.2 267.9 L1080.5 268.4 L1084.5 268.9 L1088.1 269.5 L1091.2 270 L1093.9 270.6 L1096.2 271.2 L1098 271.8 L1099.4 272.4 M937.2 276.6 L938.6 276 L940.4 275.4 L942.7 274.8 L945.4 274.3 L948.6 273.7 L952.2 273.2 L956.1 272.6 L960.5 272.2 L965.2 271.7 L970.3 271.3 L975.6 270.9 L981.2 270.6 L987.1 270.3 L993.1 270.1 L999.3 269.9 L1005.7 269.8 L1012.1 269.7 L1018.5 269.7 L1024.9 269.7 L1031.3 269.8 L1037.7 269.9 L1043.9 270.1 L1049.9 270.3 L1055.8 270.6 L1061.4 271 L1066.7 271.3 L1071.8 271.7 L1076.5 272.2 L1080.9 272.7 L1084.9 273.2 L1088.4 273.7 L1091.6 274.3 L1094.3 274.9 L1096.6 275.5 L1098.4 276.1 L1099.8 276.7 M936.8 280.9 L938.1 280.3 L940 279.7 L942.3 279.1 L945 278.5 L948.2 278 L951.8 277.4 L955.8 276.9 L960.2 276.4 L964.9 276 L970 275.6 L975.4 275.2 L981 274.9 L986.9 274.6 L993 274.4 L999.2 274.2 L1005.6 274 L1012 274 L1018.5 273.9 L1025 274 L1031.4 274 L1037.8 274.2 L1044 274.4 L1050.1 274.6 L1056 274.9 L1061.6 275.2 L1067 275.6 L1072.1 276 L1076.8 276.5 L1081.2 276.9 L1085.2 277.5 L1088.8 278 L1092 278.6 L1094.7 279.1 L1097 279.7 L1098.9 280.4 L1100.2 281 M936.3 285.2 L937.7 284.6 L939.5 284 L941.8 283.4 L944.6 282.8 L947.8 282.2 L951.4 281.7 L955.5 281.2 L959.9 280.7 L964.6 280.2 L969.8 279.8 L975.2 279.5 L980.8 279.1 L986.7 278.9 L992.9 278.6 L999.1 278.4 L1005.5 278.3 L1012 278.2 L1018.5 278.2 L1025 278.2 L1031.5 278.3 L1037.9 278.4 L1044.1 278.6 L1050.3 278.9 L1056.2 279.2 L1061.8 279.5 L1067.2 279.9 L1072.4 280.3 L1077.1 280.7 L1081.5 281.2 L1085.6 281.7 L1089.2 282.3 L1092.4 282.8 L1095.2 283.4 L1097.5 284 L1099.3 284.6 L1100.7 285.2 M935.9 289.5 L937.3 288.8 L939.1 288.2 L941.4 287.6 L944.2 287.1 L947.4 286.5 L951.1 286 L955.1 285.4 L959.6 285 L964.4 284.5 L969.5 284.1 L974.9 283.7 L980.6 283.4 L986.6 283.1 L992.7 282.9 L999 282.7 L1005.4 282.6 L1012 282.5 L1018.5 282.5 L1025 282.5 L1031.6 282.6 L1038 282.7 L1044.3 282.9 L1050.4 283.1 L1056.4 283.4 L1062.1 283.7 L1067.5 284.1 L1072.6 284.5 L1077.4 285 L1081.9 285.5 L1085.9 286 L1089.6 286.5 L1092.8 287.1 L1095.6 287.7 L1097.9 288.3 L1099.7 288.9 L1101.1 289.5 M935.4 293.7 L936.8 293.1 L938.7 292.5 L941 291.9 L943.8 291.3 L947 290.8 L950.7 290.2 L954.8 289.7 L959.2 289.2 L964.1 288.8 L969.2 288.4 L974.7 288 L980.4 287.7 L986.4 287.4 L992.6 287.2 L998.9 287 L1005.4 286.8 L1011.9 286.8 L1018.5 286.7 L1025.1 286.8 L1031.6 286.8 L1038.1 287 L1044.4 287.2 L1050.6 287.4 L1056.6 287.7 L1062.3 288 L1067.8 288.4 L1072.9 288.8 L1077.8 289.2 L1082.2 289.7 L1086.3 290.2 L1090 290.8 L1093.2 291.3 L1096 291.9 L1098.3 292.5 L1100.2 293.1 L1101.6 293.7 M935 298 L936.4 297.4 L938.3 296.8 L940.6 296.2 L943.4 295.6 L946.7 295 L950.3 294.5 L954.4 294 L958.9 293.5 L963.8 293.1 L969 292.6 L974.5 292.3 L980.2 291.9 L986.2 291.7 L992.4 291.4 L998.8 291.2 L1005.3 291.1 L1011.9 291 L1018.5 291 L1025.1 291 L1031.7 291.1 L1038.2 291.2 L1044.6 291.4 L1050.8 291.7 L1056.8 291.9 L1062.5 292.3 L1068 292.6 L1073.2 293.1 L1078.1 293.5 L1082.6 294 L1086.7 294.5 L1090.3 295 L1093.6 295.6 L1096.4 296.2 L1098.7 296.8 L1100.6 297.4 L1102 298 M950 205 L948.9 209.2 L947.9 213.3 L946.8 217.5 L945.7 221.6 L944.7 225.8 L943.6 229.9 L942.5 234.1 L941.4 238.3 L940.7 242.5 L940.3 246.8 L939.9 251 L939.4 255.3 L939 259.6 L938.5 263.8 L938.1 268.1 L937.7 272.4 L937.2 276.6 L936.8 280.9 L936.3 285.2 L935.9 289.5 L935.4 293.7 L935 298 M951.2 204.4 L950.1 208.5 L949.1 212.7 L948 216.9 L946.9 221 L945.9 225.2 L944.8 229.3 L943.8 233.5 L942.7 237.7 L942 241.9 L941.6 246.1 L941.2 250.4 L940.7 254.7 L940.3 259 L939.9 263.2 L939.4 267.5 L939 271.8 L938.6 276 L938.1 280.3 L937.7 284.6 L937.3 288.8 L936.8 293.1 L936.4 297.4 M952.7 203.8 L951.7 207.9 L950.6 212.1 L949.6 216.3 L948.6 220.4 L947.6 224.6 L946.5 228.7 L945.5 232.9 L944.5 237 L943.8 241.3 L943.4 245.5 L942.9 249.8 L942.5 254.1 L942.1 258.4 L941.7 262.6 L941.2 266.9 L940.8 271.2 L940.4 275.4 L940 279.7 L939.5 284 L939.1 288.2 L938.7 292.5 L938.3 296.8 M954.6 203.2 L953.6 207.3 L952.6 211.5 L951.6 215.7 L950.6 219.8 L949.6 224 L948.6 228.1 L947.6 232.3 L946.6 236.5 L946 240.7 L945.6 244.9 L945.1 249.2 L944.7 253.5 L944.3 257.8 L943.9 262 L943.5 266.3 L943.1 270.6 L942.7 274.8 L942.3 279.1 L941.8 283.4 L941.4 287.6 L941 291.9 L940.6 296.2 M957 202.6 L956 206.8 L955 210.9 L954.1 215.1 L953.1 219.2 L952.1 223.4 L951.2 227.6 L950.2 231.7 L949.2 235.9 L948.6 240.1 L948.2 244.4 L947.8 248.6 L947.4 252.9 L947 257.2 L946.6 261.4 L946.2 265.7 L945.8 270 L945.4 274.3 L945 278.5 L944.6 282.8 L944.2 287.1 L943.8 291.3 L943.4 295.6 M959.6 202 L958.7 206.2 L957.8 210.4 L956.9 214.5 L955.9 218.7 L955 222.8 L954.1 227 L953.1 231.2 L952.2 235.3 L951.6 239.5 L951.2 243.8 L950.8 248.1 L950.5 252.3 L950.1 256.6 L949.7 260.9 L949.3 265.2 L948.9 269.4 L948.6 273.7 L948.2 278 L947.8 282.2 L947.4 286.5 L947 290.8 L946.7 295 M962.7 201.5 L961.8 205.7 L960.9 209.8 L960 214 L959.2 218.1 L958.3 222.3 L957.4 226.5 L956.5 230.6 L955.6 234.8 L955 239 L954.7 243.3 L954.3 247.5 L954 251.8 L953.6 256.1 L953.2 260.3 L952.9 264.6 L952.5 268.9 L952.2 273.2 L951.8 277.4 L951.4 281.7 L951.1 286 L950.7 290.2 L950.3 294.5 M966.1 201 L965.2 205.1 L964.4 209.3 L963.6 213.5 L962.7 217.6 L961.9 221.8 L961.1 225.9 L960.2 230.1 L959.4 234.3 L958.9 238.5 L958.5 242.8 L958.2 247 L957.8 251.3 L957.5 255.6 L957.2 259.8 L956.8 264.1 L956.5 268.4 L956.1 272.6 L955.8 276.9 L955.5 281.2 L955.1 285.4 L954.8 289.7 L954.4 294 M969.8 200.5 L969 204.7 L968.2 208.8 L967.4 213 L966.7 217.1 L965.9 221.3 L965.1 225.5 L964.3 229.6 L963.5 233.8 L963 238 L962.7 242.3 L962.4 246.5 L962.1 250.8 L961.8 255.1 L961.5 259.4 L961.1 263.6 L960.8 267.9 L960.5 272.2 L960.2 276.4 L959.9 280.7 L959.6 285 L959.2 289.2 L958.9 293.5 M973.8 200.1 L973.1 204.2 L972.3 208.4 L971.6 212.5 L970.9 216.7 L970.2 220.9 L969.5 225 L968.7 229.2 L968 233.3 L967.5 237.6 L967.3 241.8 L967 246.1 L966.7 250.4 L966.4 254.6 L966.1 258.9 L965.8 263.2 L965.5 267.4 L965.2 271.7 L964.9 276 L964.6 280.2 L964.4 284.5 L964.1 288.8 L963.8 293.1 M978.1 199.6 L977.4 203.8 L976.8 208 L976.1 212.1 L975.4 216.3 L974.8 220.4 L974.1 224.6 L973.5 228.8 L972.8 232.9 L972.4 237.2 L972.1 241.4 L971.9 245.7 L971.6 250 L971.3 254.2 L971.1 258.5 L970.8 262.8 L970.5 267 L970.3 271.3 L970 275.6 L969.8 279.8 L969.5 284.1 L969.2 288.4 L969 292.6 M982.6 199.3 L982 203.4 L981.4 207.6 L980.8 211.8 L980.2 215.9 L979.7 220.1 L979.1 224.2 L978.5 228.4 L977.9 232.6 L977.5 236.8 L977.3 241.1 L977 245.3 L976.8 249.6 L976.6 253.9 L976.3 258.1 L976.1 262.4 L975.9 266.7 L975.6 270.9 L975.4 275.2 L975.2 279.5 L974.9 283.7 L974.7 288 L974.5 292.3 M987.4 198.9 L986.9 203.1 L986.3 207.3 L985.8 211.4 L985.3 215.6 L984.8 219.7 L984.2 223.9 L983.7 228.1 L983.2 232.2 L982.9 236.5 L982.7 240.7 L982.5 245 L982.3 249.3 L982.1 253.5 L981.9 257.8 L981.6 262.1 L981.4 266.3 L981.2 270.6 L981 274.9 L980.8 279.1 L980.6 283.4 L980.4 287.7 L980.2 291.9 M992.3 198.7 L991.9 202.8 L991.4 207 L991 211.1 L990.5 215.3 L990.1 219.5 L989.6 223.6 L989.2 227.8 L988.8 232 L988.5 236.2 L988.3 240.5 L988.1 244.7 L987.9 249 L987.8 253.3 L987.6 257.5 L987.4 261.8 L987.3 266.1 L987.1 270.3 L986.9 274.6 L986.7 278.9 L986.6 283.1 L986.4 287.4 L986.2 291.7 M997.5 198.4 L997.1 202.6 L996.7 206.7 L996.3 210.9 L996 215.1 L995.6 219.2 L995.2 223.4 L994.9 227.6 L994.5 231.7 L994.2 236 L994.1 240.2 L994 244.5 L993.8 248.8 L993.7 253 L993.5 257.3 L993.4 261.6 L993.3 265.8 L993.1 270.1 L993 274.4 L992.9 278.6 L992.7 282.9 L992.6 287.2 L992.4 291.4 M1002.7 198.2 L1002.4 202.4 L1002.1 206.6 L1001.8 210.7 L1001.5 214.9 L1001.3 219.1 L1001 223.2 L1000.7 227.4 L1000.4 231.6 L1000.2 235.8 L1000.1 240 L1000 244.3 L999.9 248.6 L999.8 252.8 L999.6 257.1 L999.5 261.4 L999.4 265.6 L999.3 269.9 L999.2 274.2 L999.1 278.4 L999 282.7 L998.9 287 L998.8 291.2 M1008.1 198.1 L1007.9 202.3 L1007.7 206.4 L1007.4 210.6 L1007.2 214.8 L1007 218.9 L1006.8 223.1 L1006.6 227.3 L1006.4 231.4 L1006.2 235.7 L1006.1 239.9 L1006.1 244.2 L1006 248.4 L1005.9 252.7 L1005.9 257 L1005.8 261.2 L1005.7 265.5 L1005.7 269.8 L1005.6 274 L1005.5 278.3 L1005.4 282.6 L1005.4 286.8 L1005.3 291.1 M1013.5 198 L1013.4 202.2 L1013.3 206.4 L1013.1 210.5 L1013 214.7 L1012.8 218.9 L1012.7 223 L1012.6 227.2 L1012.4 231.4 L1012.3 235.6 L1012.3 239.8 L1012.3 244.1 L1012.2 248.4 L1012.2 252.6 L1012.2 256.9 L1012.1 261.2 L1012.1 265.4 L1012.1 269.7 L1012 274 L1012 278.2 L1012 282.5 L1011.9 286.8 L1011.9 291 M1019 198 L1018.9 202.2 L1018.9 206.3 L1018.8 210.5 L1018.8 214.7 L1018.7 218.8 L1018.7 223 L1018.6 227.2 L1018.5 231.3 L1018.5 235.6 L1018.5 239.8 L1018.5 244.1 L1018.5 248.4 L1018.5 252.6 L1018.5 256.9 L1018.5 261.1 L1018.5 265.4 L1018.5 269.7 L1018.5 273.9 L1018.5 278.2 L1018.5 282.5 L1018.5 286.7 L1018.5 291 M1024.5 198 L1024.5 202.2 L1024.5 206.4 L1024.5 210.5 L1024.6 214.7 L1024.6 218.9 L1024.6 223 L1024.6 227.2 L1024.7 231.4 L1024.7 235.6 L1024.7 239.9 L1024.7 244.1 L1024.8 248.4 L1024.8 252.6 L1024.8 256.9 L1024.9 261.2 L1024.9 265.4 L1024.9 269.7 L1025 274 L1025 278.2 L1025 282.5 L1025.1 286.8 L1025.1 291 M1029.9 198.1 L1030 202.3 L1030.1 206.4 L1030.2 210.6 L1030.3 214.8 L1030.4 218.9 L1030.5 223.1 L1030.6 227.3 L1030.7 231.4 L1030.8 235.7 L1030.9 239.9 L1030.9 244.2 L1031 248.5 L1031.1 252.7 L1031.1 257 L1031.2 261.3 L1031.3 265.5 L1031.3 269.8 L1031.4 274 L1031.5 278.3 L1031.6 282.6 L1031.6 286.8 L1031.7 291.1 M1035.3 198.2 L1035.4 202.4 L1035.6 206.6 L1035.8 210.7 L1036 214.9 L1036.2 219.1 L1036.4 223.2 L1036.5 227.4 L1036.7 231.6 L1036.8 235.8 L1036.9 240.1 L1037 244.3 L1037.2 248.6 L1037.3 252.9 L1037.4 257.1 L1037.5 261.4 L1037.6 265.7 L1037.7 269.9 L1037.8 274.2 L1037.9 278.4 L1038 282.7 L1038.1 287 L1038.2 291.2 M1040.5 198.4 L1040.8 202.6 L1041 206.8 L1041.3 210.9 L1041.6 215.1 L1041.8 219.3 L1042.1 223.4 L1042.3 227.6 L1042.6 231.8 L1042.8 236 L1042.9 240.3 L1043 244.5 L1043.2 248.8 L1043.3 253.1 L1043.5 257.3 L1043.6 261.6 L1043.7 265.8 L1043.9 270.1 L1044 274.4 L1044.1 278.6 L1044.3 282.9 L1044.4 287.2 L1044.6 291.4 M1045.7 198.7 L1046 202.8 L1046.3 207 L1046.7 211.2 L1047 215.3 L1047.3 219.5 L1047.7 223.7 L1048 227.8 L1048.3 232 L1048.6 236.2 L1048.7 240.5 L1048.9 244.8 L1049.1 249 L1049.2 253.3 L1049.4 257.6 L1049.6 261.8 L1049.7 266.1 L1049.9 270.3 L1050.1 274.6 L1050.3 278.9 L1050.4 283.1 L1050.6 287.4 L1050.8 291.7 M1050.6 198.9 L1051 203.1 L1051.4 207.3 L1051.8 211.4 L1052.2 215.6 L1052.7 219.8 L1053.1 224 L1053.5 228.1 L1053.9 232.3 L1054.1 236.5 L1054.4 240.8 L1054.6 245.1 L1054.8 249.3 L1055 253.6 L1055.2 257.8 L1055.4 262.1 L1055.6 266.4 L1055.8 270.6 L1056 274.9 L1056.2 279.2 L1056.4 283.4 L1056.6 287.7 L1056.8 291.9 M1055.4 199.3 L1055.9 203.4 L1056.3 207.6 L1056.8 211.8 L1057.3 215.9 L1057.8 220.1 L1058.2 224.3 L1058.7 228.5 L1059.2 232.6 L1059.5 236.9 L1059.8 241.1 L1060 245.4 L1060.2 249.6 L1060.4 253.9 L1060.7 258.2 L1060.9 262.4 L1061.1 266.7 L1061.4 271 L1061.6 275.2 L1061.8 279.5 L1062.1 283.7 L1062.3 288 L1062.5 292.3 M1059.9 199.6 L1060.5 203.8 L1061 208 L1061.6 212.2 L1062.1 216.3 L1062.6 220.5 L1063.2 224.7 L1063.7 228.8 L1064.3 233 L1064.6 237.2 L1064.9 241.5 L1065.2 245.8 L1065.4 250 L1065.7 254.3 L1065.9 258.5 L1066.2 262.8 L1066.5 267.1 L1066.7 271.3 L1067 275.6 L1067.2 279.9 L1067.5 284.1 L1067.8 288.4 L1068 292.6 M1064.2 200.1 L1064.8 204.2 L1065.4 208.4 L1066 212.6 L1066.6 216.7 L1067.2 220.9 L1067.9 225.1 L1068.5 229.3 L1069.1 233.4 L1069.5 237.7 L1069.8 241.9 L1070 246.2 L1070.3 250.4 L1070.6 254.7 L1070.9 259 L1071.2 263.2 L1071.5 267.5 L1071.8 271.7 L1072.1 276 L1072.4 280.3 L1072.6 284.5 L1072.9 288.8 L1073.2 293.1 M1068.2 200.5 L1068.9 204.7 L1069.6 208.8 L1070.2 213 L1070.9 217.2 L1071.5 221.4 L1072.2 225.5 L1072.9 229.7 L1073.5 233.9 L1074 238.1 L1074.3 242.4 L1074.6 246.6 L1074.9 250.9 L1075.2 255.1 L1075.6 259.4 L1075.9 263.7 L1076.2 267.9 L1076.5 272.2 L1076.8 276.5 L1077.1 280.7 L1077.4 285 L1077.8 289.2 L1078.1 293.5 M1071.9 201 L1072.7 205.2 L1073.4 209.3 L1074.1 213.5 L1074.8 217.7 L1075.5 221.8 L1076.2 226 L1077 230.2 L1077.7 234.4 L1078.2 238.6 L1078.5 242.9 L1078.8 247.1 L1079.2 251.4 L1079.5 255.6 L1079.9 259.9 L1080.2 264.2 L1080.5 268.4 L1080.9 272.7 L1081.2 276.9 L1081.5 281.2 L1081.9 285.5 L1082.2 289.7 L1082.6 294 M1075.3 201.5 L1076.1 205.7 L1076.9 209.8 L1077.6 214 L1078.4 218.2 L1079.2 222.4 L1079.9 226.5 L1080.7 230.7 L1081.5 234.9 L1082 239.1 L1082.3 243.4 L1082.7 247.6 L1083.1 251.9 L1083.4 256.2 L1083.8 260.4 L1084.1 264.7 L1084.5 268.9 L1084.9 273.2 L1085.2 277.5 L1085.6 281.7 L1085.9 286 L1086.3 290.2 L1086.7 294.5 M1078.4 202 L1079.2 206.2 L1080 210.4 L1080.8 214.6 L1081.6 218.7 L1082.4 222.9 L1083.2 227.1 L1084 231.3 L1084.9 235.4 L1085.4 239.7 L1085.8 243.9 L1086.2 248.2 L1086.5 252.4 L1086.9 256.7 L1087.3 261 L1087.7 265.2 L1088.1 269.5 L1088.4 273.7 L1088.8 278 L1089.2 282.3 L1089.6 286.5 L1090 290.8 L1090.3 295 M1081 202.6 L1081.9 206.8 L1082.8 211 L1083.6 215.1 L1084.5 219.3 L1085.3 223.5 L1086.2 227.6 L1087 231.8 L1087.9 236 L1088.4 240.2 L1088.8 244.5 L1089.2 248.7 L1089.6 253 L1090 257.3 L1090.4 261.5 L1090.8 265.8 L1091.2 270 L1091.6 274.3 L1092 278.6 L1092.4 282.8 L1092.8 287.1 L1093.2 291.3 L1093.6 295.6 M1083.4 203.2 L1084.2 207.4 L1085.1 211.5 L1086 215.7 L1086.9 219.9 L1087.8 224.1 L1088.7 228.2 L1089.6 232.4 L1090.5 236.6 L1091 240.8 L1091.5 245.1 L1091.9 249.3 L1092.3 253.6 L1092.7 257.8 L1093.1 262.1 L1093.5 266.4 L1093.9 270.6 L1094.3 274.9 L1094.7 279.1 L1095.2 283.4 L1095.6 287.7 L1096 291.9 L1096.4 296.2 M1085.3 203.8 L1086.2 208 L1087.1 212.1 L1088 216.3 L1089 220.5 L1089.9 224.7 L1090.8 228.8 L1091.7 233 L1092.6 237.2 L1093.2 241.4 L1093.6 245.7 L1094.1 249.9 L1094.5 254.2 L1094.9 258.4 L1095.3 262.7 L1095.8 267 L1096.2 271.2 L1096.6 275.5 L1097 279.7 L1097.5 284 L1097.9 288.3 L1098.3 292.5 L1098.7 296.8 M1086.8 204.4 L1087.8 208.6 L1088.7 212.7 L1089.7 216.9 L1090.6 221.1 L1091.5 225.3 L1092.5 229.4 L1093.4 233.6 L1094.3 237.8 L1095 242 L1095.4 246.3 L1095.8 250.5 L1096.3 254.8 L1096.7 259.1 L1097.1 263.3 L1097.6 267.6 L1098 271.8 L1098.4 276.1 L1098.9 280.4 L1099.3 284.6 L1099.7 288.9 L1100.2 293.1 L1100.6 297.4 M1088 205 L1089 209.2 L1089.9 213.3 L1090.9 217.5 L1091.8 221.7 L1092.8 225.9 L1093.7 230 L1094.7 234.2 L1095.6 238.4 L1096.3 242.6 L1096.7 246.9 L1097.2 251.1 L1097.6 255.4 L1098 259.7 L1098.5 263.9 L1098.9 268.2 L1099.4 272.4 L1099.8 276.7 L1100.2 281 L1100.7 285.2 L1101.1 289.5 L1101.6 293.7 L1102 298" fill="none" stroke="#ffffff" stroke-width="1.5" opacity="1"/>

<path d="M1025 207 L1027 262 M1075 207 L1089 290 M958 207 L945 290" stroke="#a8ee40" stroke-width="1.2" stroke-dasharray="2 5" opacity=".7"/>
</g>
<path d="M954 298 C951 297.5 953.5 289.7 957 285 C960.5 280.3 967.8 274.5 975 270 C982.2 265.5 992.8 260.5 1000 258 C1007.2 255.5 1011.3 255.2 1018 255 C1024.7 254.8 1032.7 255.2 1040 257 C1047.3 258.8 1055.5 262.2 1062 266 C1068.5 269.8 1075.5 274.8 1079 280 C1082.5 285.2 1086.2 296 1083 297 C1079.8 298 1067.2 288.7 1060 286 C1052.8 283.3 1047 282.1 1040 281 C1033 279.9 1025.3 279.5 1018 279.5 C1010.7 279.5 1003.2 279.6 996 281 C988.8 282.4 982 285.2 975 288 C968 290.8 957 298.5 954 298Z" fill="#ffffff"/></svg>
<div class="dlg" style="left:15px;top:15px;width:154px;height:296px"><div class="dt" style="height:37px;background:#1b202a"></div><div class="dg" style="top:37px;height:259px;background:linear-gradient(#f00a0e 0.0%,#f00a0e 9.0%,#f4601a 21.0%,#f6a814 30.0%,#fcf016 42.0%,#ffff20 44.0%,#58d40e 61.0%,#52d218 63.0%,#58ecc8 75.0%,#5cf0fc 79.0%,#a8f8fe 88.0%,#ffffff 95.0%,#ffffff 100.0%)"></div><svg style="left:0;top:0" width="154" height="296" viewBox="0 0 154 296"><g transform="translate(9,8)"><rect x="0" y="0" width="20" height="20" rx="1.5" fill="#2a1fd0"/><rect x="0" y="15" width="7" height="1.5" fill="#fff"/><rect x="6.500" y="16.500" width="13.500" height="1.500" fill="#fff"/><text x="10.500" y="11.500" font-size="9" font-family="Liberation Sans, sans-serif" fill="#fff" text-anchor="middle">VS</text></g><text x="34" y="24" font-size="15" font-family="Liberation Sans, sans-serif" fill="#ffffff" textLength="67" lengthAdjust="spacingAndGlyphs">Pressure...</text><path d="M127 12.5 l12 12 m0 -12 l-12 12" stroke="#f0f0f0" stroke-width="1.300" fill="none"/><text x="5" y="52" font-size="11.500" font-family="Liberation Sans, sans-serif" fill="#7a0000" opacity=".95">gr/cm^2</text><path d="M5.5 63.0 V287.3 H10.5 M5.5 63.0 H10.5 M5.5 102.0 H8.5 M5.5 137.3 H10.5 M5.5 176.3 H8.5 M5.5 212.3 H10.5 M5.5 251.3 H8.5 M5.5 287.3 H8.5 M5.5 114.9 H8.0 M5.5 101.8 H8.0 M5.5 92.6 H8.0 M5.5 85.4 H8.0 M5.5 79.5 H8.0 M5.5 74.5 H8.0 M5.5 70.2 H8.0 M5.5 66.4 H8.0 M5.5 189.7 H8.0 M5.5 176.5 H8.0 M5.5 167.1 H8.0 M5.5 159.9 H8.0 M5.5 153.9 H8.0 M5.5 148.9 H8.0 M5.5 144.6 H8.0 M5.5 140.7 H8.0 M5.5 264.7 H8.0 M5.5 251.5 H8.0 M5.5 242.1 H8.0 M5.5 234.9 H8.0 M5.5 228.9 H8.0 M5.5 223.9 H8.0 M5.5 219.6 H8.0 M5.5 215.7 H8.0" stroke="#1a1a1a" stroke-width="1" fill="none" opacity=".8"/><text x="16" y="67.0" font-size="11.500" font-family="Liberation Sans, sans-serif" fill="#7a0000">100.0</text><text x="16" y="106.0" font-size="11.500" font-family="Liberation Sans, sans-serif" fill="#6a2400">30.0</text><text x="16" y="141.3" font-size="11.500" font-family="Liberation Sans, sans-serif" fill="#5a4a00">10.0</text><text x="16" y="180.3" font-size="11.500" font-family="Liberation Sans, sans-serif" fill="#2a4a00">3.0</text><text x="16" y="216.3" font-size="11.500" font-family="Liberation Sans, sans-serif" fill="#0a4a20">1.0</text><text x="16" y="255.3" font-size="11.500" font-family="Liberation Sans, sans-serif" fill="#1a4a50">0.3</text><text x="16" y="291.3" font-size="11.500" font-family="Liberation Sans, sans-serif" fill="#2a2a2a">0.1</text></svg></div><div class="dlg" style="left:13px;top:330px;width:154px;height:296px"><div class="dt" style="height:37px;background:#1c1c1c"></div><div class="dg" style="top:37px;height:259px;background:linear-gradient(#d60a10 0.0%,#ea0c10 11.0%,#f0501a 22.0%,#f6a814 33.0%,#fcf016 43.0%,#ffff20 44.5%,#58d40e 60.0%,#52d218 62.0%,#58ecc8 75.0%,#5cf0fc 80.0%,#a8f8fe 89.0%,#ffffff 96.0%,#ffffff 100.0%)"></div><svg style="left:0;top:0" width="154" height="296" viewBox="0 0 154 296"><g transform="translate(9,8)"><rect x="0" y="0" width="20" height="20" rx="1.5" fill="#2a1fd0"/><rect x="0" y="15" width="7" height="1.5" fill="#fff"/><rect x="6.500" y="16.500" width="13.500" height="1.500" fill="#fff"/><text x="10.500" y="11.500" font-size="9" font-family="Liberation Sans, sans-serif" fill="#fff" text-anchor="middle">VS</text></g><text x="35" y="24" font-size="15" font-family="Liberation Sans, sans-serif" fill="#7c7c7c" textLength="60" lengthAdjust="spacingAndGlyphs">Tension...</text><path d="M127 12.5 l12 12 m0 -12 l-12 12" stroke="#6e6e6e" stroke-width="1.300" fill="none"/><text x="5" y="52" font-size="11.500" font-family="Liberation Sans, sans-serif" fill="#7a0000" opacity=".95">gr/cm</text><path d="M6.0 63.0 V287.3 H11.0 M6.0 63.0 H11.0 M6.0 92.0 H9.0 M6.0 119.0 H11.0 M6.0 148.0 H9.0 M6.0 175.3 H11.0 M6.0 204.0 H9.0 M6.0 231.3 H11.0 M6.0 260.3 H9.0 M6.0 287.3 H9.0 M6.0 102.1 H8.5 M6.0 92.3 H8.5 M6.0 85.3 H8.5 M6.0 79.9 H8.5 M6.0 75.4 H8.5 M6.0 71.7 H8.5 M6.0 68.4 H8.5 M6.0 65.6 H8.5 M6.0 158.4 H8.5 M6.0 148.4 H8.5 M6.0 141.4 H8.5 M6.0 135.9 H8.5 M6.0 131.5 H8.5 M6.0 127.7 H8.5 M6.0 124.5 H8.5 M6.0 121.6 H8.5 M6.0 214.4 H8.5 M6.0 204.6 H8.5 M6.0 197.6 H8.5 M6.0 192.2 H8.5 M6.0 187.7 H8.5 M6.0 184.0 H8.5 M6.0 180.7 H8.5 M6.0 177.9 H8.5 M6.0 270.4 H8.5 M6.0 260.6 H8.5 M6.0 253.6 H8.5 M6.0 248.2 H8.5 M6.0 243.7 H8.5 M6.0 240.0 H8.5 M6.0 236.7 H8.5 M6.0 233.9 H8.5" stroke="#1a1a1a" stroke-width="1" fill="none" opacity=".8"/><text x="16" y="67.0" font-size="11.500" font-family="Liberation Sans, sans-serif" fill="#7a0000">1000.0</text><text x="16" y="96.0" font-size="11.500" font-family="Liberation Sans, sans-serif" fill="#6a1800">300.0</text><text x="16" y="123.0" font-size="11.500" font-family="Liberation Sans, sans-serif" fill="#6a3400">100.0</text><text x="16" y="152.0" font-size="11.500" font-family="Liberation Sans, sans-serif" fill="#5a4a00">30.0</text><text x="16" y="179.3" font-size="11.500" font-family="Liberation Sans, sans-serif" fill="#2a4a00">10.0</text><text x="16" y="208.0" font-size="11.500" font-family="Liberation Sans, sans-serif" fill="#1a4a00">3.0</text><text x="16" y="235.3" font-size="11.500" font-family="Liberation Sans, sans-serif" fill="#0a4a30">1.0</text><text x="16" y="264.3" font-size="11.500" font-family="Liberation Sans, sans-serif" fill="#1a4a50">0.3</text><text x="16" y="291.3" font-size="11.500" font-family="Liberation Sans, sans-serif" fill="#2a2a2a">0.1</text></svg></div></div>
</div>
<div id="rstrip"><svg style="left:7px;top:9px" width="19" height="16" viewBox="0 0 19 16"><path d="M17.500 0.500 V4 Q17.500 9 12.500 9 H5" fill="none" stroke="#8a8a8a" stroke-width="1.800"/><path d="M0.500 9 L6.500 4 V14Z" fill="#8a8a8a"/></svg>
<svg style="left:7px;top:41px" width="19" height="16" viewBox="0 0 19 16"><path d="M1.500 0.500 V4 Q1.500 9 6.500 9 H14" fill="none" stroke="#8a8a8a" stroke-width="1.800"/><path d="M18.500 9 L12.500 4 V14Z" fill="#8a8a8a"/></svg>
<svg style="left:10px;top:73px" width="11" height="16" viewBox="0 0 11 16"><path d="M5.500 15.500 V5" fill="none" stroke="#8a8a8a" stroke-width="1.900"/><path d="M5.500 0.500 L10.500 6.500 H0.500Z" fill="#8a8a8a"/></svg>
<svg style="left:10px;top:104px" width="11" height="16" viewBox="0 0 11 16"><path d="M5.500 0.500 V11" fill="none" stroke="#8a8a8a" stroke-width="1.900"/><path d="M5.500 15.500 L10.500 9.500 H0.500Z" fill="#8a8a8a"/></svg>
<svg style="left:8px;top:136px" width="19" height="19" viewBox="0 0 19 19"><circle cx="7.500" cy="7.500" r="6.500" fill="none" stroke="#8a8a8a" stroke-width="1.600"/><path d="M12.300 12.300 L18 18" stroke="#8a8a8a" stroke-width="2"/><path d="M4.500 7.500 H10.500 M7.500 4.500 V10.500" stroke="#8a8a8a" stroke-width="1.300"/></svg>
<svg style="left:8px;top:168px" width="19" height="19" viewBox="0 0 19 19"><circle cx="7.500" cy="7.500" r="6.500" fill="none" stroke="#8a8a8a" stroke-width="1.600"/><path d="M12.300 12.300 L18 18" stroke="#8a8a8a" stroke-width="2"/><path d="M4.500 7.500 H10.500" stroke="#8a8a8a" stroke-width="1.300"/></svg>
<svg style="left:7px;top:200px" width="20" height="20" viewBox="0 0 20 20"><g fill="#8a8a8a" stroke="#8a8a8a" stroke-width="1.600"><path d="M1 1 L5 5"/><path d="M19 1 L15 5"/><path d="M1 19 L5 15"/><path d="M19 19 L15 15"/></g><g fill="#8a8a8a"><path d="M8 8 V2.500 L2.500 8Z"/><path d="M12 8 V2.500 L17.500 8Z"/><path d="M8 12 V17.500 L2.500 12Z"/><path d="M12 12 V17.500 L17.500 12Z"/></g></svg>
</div>
<div id="rpanel"><div class="abs" style="left:0;top:36px;width:313px;height:1px;background:#3a3a3a"></div>
<div class="abs" style="left:0;top:32px;width:104px;height:5px;background:#f9b233"></div>
<div class="abs" style="left:0;top:10px;width:104px;text-align:center;font-size:16px;font-weight:bold;color:#fff;letter-spacing:-0.3px">Piece</div>
<div class="abs" style="left:104px;top:10px;width:104px;text-align:center;font-size:16px;color:#e2e2e2;letter-spacing:-0.2px">Line</div>
<div class="abs" style="left:208px;top:10px;width:104px;text-align:center;font-size:16px;color:#e2e2e2;letter-spacing:-0.2px">Point</div>
<div class="abs" style="left:0;top:58px;width:313px;text-align:center;font-size:15px;font-weight:bold;color:#9a9a9a;letter-spacing:-0.2px">No Selection</div>
<svg style="left:28px;top:86px" width="19" height="19" viewBox="0 0 19 19"><path d="M1 0.500 V18.500" stroke="#8a8a8a" stroke-width="1.400"/><path d="M4 6.500 H17.500 M4 12.500 H11.500" stroke="#8a8a8a" stroke-width="1.800"/></svg>
<svg style="left:56px;top:86px" width="19" height="19" viewBox="0 0 19 19"><path d="M9.500 0.500 V18.500" stroke="#8a8a8a" stroke-width="1.400"/><path d="M1 6.500 H18 M5 12.500 H14" stroke="#8a8a8a" stroke-width="1.800"/></svg>
<svg style="left:82px;top:86px" width="19" height="19" viewBox="0 0 19 19"><path d="M17.500 0.500 V18.500" stroke="#8a8a8a" stroke-width="1.400"/><path d="M1 6.500 H14.500 M7 12.500 H14.500" stroke="#8a8a8a" stroke-width="1.800"/></svg>
<svg style="left:135px;top:87px" width="17" height="18" viewBox="0 0 17 18"><path d="M0.500 1 H16.500" stroke="#8a8a8a" stroke-width="1.400"/><path d="M5.500 4 V17.500 M11.500 4 V11.500" stroke="#8a8a8a" stroke-width="1.800"/></svg>
<svg style="left:161px;top:86px" width="19" height="19" viewBox="0 0 19 19"><path d="M0.500 9.500 H18.500" stroke="#8a8a8a" stroke-width="1.400"/><path d="M6.500 1 V18 M12.500 5 V14" stroke="#8a8a8a" stroke-width="1.800"/></svg>
<svg style="left:188px;top:86px" width="19" height="18" viewBox="0 0 19 18"><path d="M0.500 17 H18.500" stroke="#8a8a8a" stroke-width="1.400"/><path d="M6.500 7 V14.500 M12.500 0.500 V14.500" stroke="#8a8a8a" stroke-width="1.800"/></svg>
<svg style="left:241px;top:86px" width="15" height="19" viewBox="0 0 15 19"><path d="M1 0.500 V18.500 M14 0.500 V18.500" stroke="#8a8a8a" stroke-width="1.400"/><path d="M7.500 5.500 V13.500" stroke="#8a8a8a" stroke-width="1.800"/></svg>
<svg style="left:266px;top:88px" width="19" height="15" viewBox="0 0 19 15"><path d="M0.500 1 H18.500 M0.500 14 H18.500" stroke="#8a8a8a" stroke-width="1.400"/><path d="M5.500 7.500 H13.500" stroke="#8a8a8a" stroke-width="1.800"/></svg>
</div>
</body>
</html>
